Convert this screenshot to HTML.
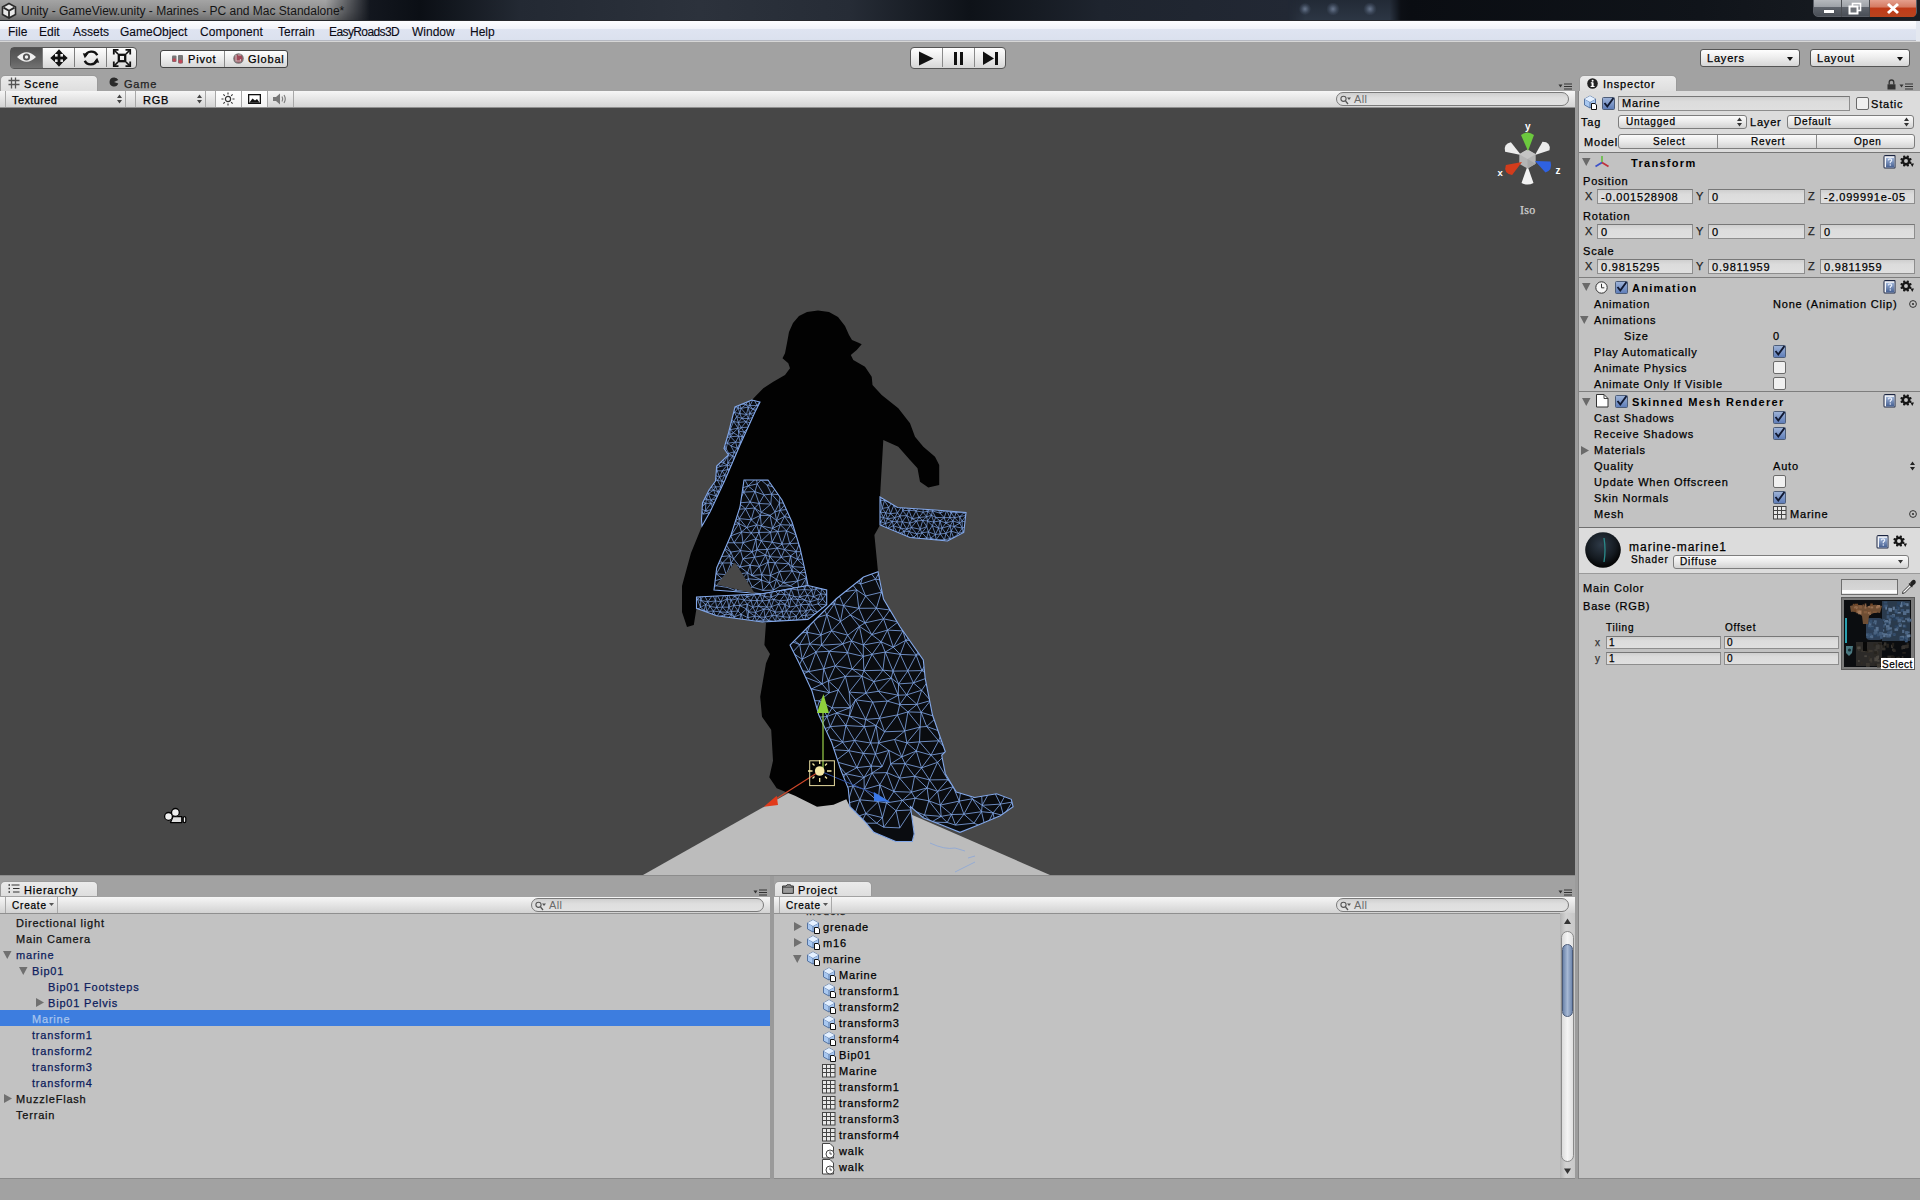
<!DOCTYPE html><html><head><meta charset="utf-8"><style>
html,body{margin:0;padding:0;width:1920px;height:1200px;overflow:hidden;background:#a2a2a2;}
body{position:relative;font-family:"Liberation Sans",sans-serif;}
.t{position:absolute;white-space:pre;line-height:16px;font-family:"Liberation Sans",sans-serif;-webkit-text-stroke:0.25px currentColor;}
svg{overflow:visible}
</style></head><body><div style="position:absolute;left:0px;top:0px;width:1920px;height:21px;background:linear-gradient(90deg,#141820 0px,#141820 360px,#0b0f15 420px,#232933 520px,#2c323c 700px,#262c36 850px,#0e1218 970px,#1e242e 1100px,#222834 1290px,#0a0d12 1410px,#10141a 1700px,#1a1e24 1920px)"></div>
<div style="position:absolute;left:0px;top:0px;width:370px;height:21px;background:linear-gradient(180deg,#a4a4a4 0%,#8e8e8e 55%,#6a6a6a 100%);-webkit-mask-image:linear-gradient(90deg,#000 0%,#000 88%,transparent 100%)"></div>
<div style="position:absolute;left:0px;top:20px;width:1920px;height:2px;background:#26282c"></div>
<div style="position:absolute;left:1288px;top:0px;width:113px;height:20px;background:linear-gradient(180deg,#222a36,#2c3644);-webkit-mask-image:linear-gradient(90deg,transparent 0%,#000 15%,#000 90%,transparent 100%)"></div>
<div style="position:absolute;left:1299px;top:3px;width:12px;height:12px;background:radial-gradient(circle,rgba(120,135,160,.8) 0%,rgba(90,105,130,.35) 45%,transparent 72%)"></div>
<div style="position:absolute;left:1326px;top:3px;width:14px;height:12px;background:radial-gradient(circle,rgba(120,135,160,.8) 0%,rgba(90,105,130,.35) 45%,transparent 72%)"></div>
<div style="position:absolute;left:1363px;top:3px;width:14px;height:12px;background:radial-gradient(circle,rgba(120,135,160,.8) 0%,rgba(90,105,130,.35) 45%,transparent 72%)"></div>
<svg style="position:absolute;left:1px;top:2px;" width="16" height="17" viewBox="0 0 16 17"><path d="M8 1.5 L14.5 5 L14.5 12.5 L8 16 L1.5 12.5 L1.5 5 Z" fill="#e8e8e8" stroke="#2a2a2a" stroke-width="1.6"/><path d="M8 8.8 L8 15 M8 8.8 L2.5 5.6 M8 8.8 L13.5 5.6" stroke="#2a2a2a" stroke-width="1.8"/></svg>
<div class="t" style="left:21px;top:3px;font-size:12px;color:#141414;font-weight:400;letter-spacing:0px;-webkit-text-stroke:0">Unity - GameView.unity - Marines - PC and Mac Standalone*</div>
<div style="position:absolute;left:1813px;top:-2px;width:104px;height:19px;border:1px solid #5a5e66;border-radius:0 0 5px 5px;overflow:hidden;box-sizing:border-box;background:linear-gradient(180deg,#b9bcc0 0%,#9ea2a8 45%,#5e636b 50%,#4a4f57 100%)"></div>
<div style="position:absolute;left:1870px;top:-1px;width:46px;height:18px;background:linear-gradient(180deg,#e7a493 0%,#d47a62 45%,#c03a18 50%,#b8441f 100%);border-radius:0 0 4px 0"></div>
<div style="position:absolute;left:1841px;top:0px;width:1px;height:17px;background:#4a4d52"></div>
<div style="position:absolute;left:1869px;top:0px;width:1px;height:17px;background:#4a4d52"></div>
<div style="position:absolute;left:1824px;top:10px;width:10px;height:3px;background:#fff;box-shadow:0 0 1px #333"></div>
<svg style="position:absolute;left:1848px;top:2px;" width="14" height="13" viewBox="0 0 14 13"><rect x="4.5" y="1.5" width="8" height="7" fill="none" stroke="#fff" stroke-width="1.6"/><rect x="1.5" y="4.5" width="8" height="7" fill="#70747a" stroke="#fff" stroke-width="2"/></svg>
<svg style="position:absolute;left:1886px;top:3px;" width="14" height="11" viewBox="0 0 14 11"><path d="M2 1 L12 10 M12 1 L2 10" stroke="#fff" stroke-width="3"/></svg>
<div style="position:absolute;left:0px;top:21px;width:1920px;height:19px;background:linear-gradient(180deg,#fdfdff 0%,#f1f3f9 40%,#dfe4f1 45%,#dbe1ee 100%)"></div>
<div style="position:absolute;left:0px;top:40px;width:1920px;height:1px;background:#b6b9c2"></div>
<div style="position:absolute;left:0px;top:41px;width:1920px;height:1px;background:#d6d6d6"></div>
<div style="position:absolute;left:1916px;top:21px;width:4px;height:20px;background:#e4e8f0"></div>
<div class="t" style="left:8px;top:24px;font-size:12px;color:#0a0a14;font-weight:400;letter-spacing:0px;-webkit-text-stroke:0.1px">File</div>
<div class="t" style="left:39px;top:24px;font-size:12px;color:#0a0a14;font-weight:400;letter-spacing:0px;-webkit-text-stroke:0.1px">Edit</div>
<div class="t" style="left:73px;top:24px;font-size:12px;color:#0a0a14;font-weight:400;letter-spacing:0px;-webkit-text-stroke:0.1px">Assets</div>
<div class="t" style="left:120px;top:24px;font-size:12px;color:#0a0a14;font-weight:400;letter-spacing:0px;-webkit-text-stroke:0.1px">GameObject</div>
<div class="t" style="left:200px;top:24px;font-size:12px;color:#0a0a14;font-weight:400;letter-spacing:0.1px;-webkit-text-stroke:0.1px">Component</div>
<div class="t" style="left:278px;top:24px;font-size:12px;color:#0a0a14;font-weight:400;letter-spacing:0px;-webkit-text-stroke:0.1px">Terrain</div>
<div class="t" style="left:329px;top:24px;font-size:12px;color:#0a0a14;font-weight:400;letter-spacing:-0.6px;-webkit-text-stroke:0.1px">EasyRoads3D</div>
<div class="t" style="left:412px;top:24px;font-size:12px;color:#0a0a14;font-weight:400;letter-spacing:0px;-webkit-text-stroke:0.1px">Window</div>
<div class="t" style="left:470px;top:24px;font-size:12px;color:#0a0a14;font-weight:400;letter-spacing:0px;-webkit-text-stroke:0.1px">Help</div>
<div style="position:absolute;left:0px;top:42px;width:1920px;height:33px;background:#a2a2a2"></div>
<div style="position:absolute;left:10px;top:47px;width:127px;height:22px;box-sizing:border-box;border:1px solid #555;border-radius:4px;overflow:hidden;background:linear-gradient(180deg,#fefefe 0%,#ececec 50%,#d6d6d6 100%);"></div>
<div style="position:absolute;left:11px;top:48px;width:32px;height:20px;background:linear-gradient(180deg,#4f4f4f 0%,#606060 60%,#727272 100%)"></div>
<div style="position:absolute;left:42px;top:48px;width:1px;height:19px;background:#7e7e7e"></div>
<div style="position:absolute;left:74px;top:48px;width:1px;height:19px;background:#7e7e7e"></div>
<div style="position:absolute;left:106px;top:48px;width:1px;height:19px;background:#7e7e7e"></div>
<svg style="position:absolute;left:16px;top:50px;" width="21" height="14" viewBox="0 0 21 14"><path d="M1 7 Q10.5 -2.5 20 7 Q10.5 16.5 1 7 Z" fill="#efefef"/><circle cx="10.5" cy="7" r="3.6" fill="#555"/><circle cx="10.5" cy="7" r="1.7" fill="#efefef"/></svg>
<svg style="position:absolute;left:50px;top:49px;" width="18" height="18" viewBox="0 0 18 18"><path d="M9 0.3 L13.2 5 L4.8 5 Z M9 17.7 L13.2 13 L4.8 13 Z M0.3 9 L5 4.8 L5 13.2 Z M17.7 9 L13 4.8 L13 13.2 Z" fill="#111"/><rect x="7.6" y="4" width="2.8" height="10" fill="#111"/><rect x="4" y="7.6" width="10" height="2.8" fill="#111"/></svg>
<svg style="position:absolute;left:82px;top:49px;" width="18" height="18" viewBox="0 0 18 18"><path d="M3.3 6.8 A6.3 5.8 0 0 1 15.2 6.2" fill="none" stroke="#111" stroke-width="2.4"/><path d="M14.7 11.2 A6.3 5.8 0 0 1 2.8 11.8" fill="none" stroke="#111" stroke-width="2.4"/><path d="M0.8 4.2 L6.2 4.8 L2.8 9.2 Z" fill="#111"/><path d="M17.2 13.8 L11.8 13.2 L15.2 8.8 Z" fill="#111"/></svg>
<svg style="position:absolute;left:113px;top:49px;" width="18" height="18" viewBox="0 0 18 18"><rect x="5.8" y="5.8" width="6.4" height="6.4" fill="none" stroke="#111" stroke-width="2.3"/><path d="M1.5 1.5 L5 5 M16.5 1.5 L13 5 M1.5 16.5 L5 13 M16.5 16.5 L13 13" stroke="#111" stroke-width="1.7"/><path d="M0.8 5.5 V0.8 H5.5 M12.5 0.8 H17.2 V5.5 M0.8 12.5 V17.2 H5.5 M12.5 17.2 H17.2 V12.5" fill="none" stroke="#111" stroke-width="1.8"/></svg>
<div style="position:absolute;left:160px;top:50px;width:128px;height:18px;box-sizing:border-box;border:1px solid #444;border-radius:3px;background:linear-gradient(180deg,#fefefe 0%,#ececec 50%,#d6d6d6 100%);"></div>
<div style="position:absolute;left:224px;top:51px;width:1px;height:16px;background:#8a8a8a"></div>
<svg style="position:absolute;left:172px;top:55px;" width="12" height="9" viewBox="0 0 12 9"><rect x="0" y="0.5" width="4.5" height="6.5" rx="1" fill="#777"/><circle cx="2.3" cy="5" r="1.8" fill="#c04858"/><rect x="6" y="0" width="5" height="8.5" rx="1" fill="#777"/><circle cx="8.5" cy="6.5" r="2" fill="#c04858"/></svg>
<div class="t" style="left:188px;top:51px;font-size:11px;color:#000;font-weight:400;letter-spacing:0.8px;">Pivot</div>
<svg style="position:absolute;left:233px;top:53px;" width="12" height="12" viewBox="0 0 12 12"><circle cx="5.5" cy="5.5" r="5.3" fill="#7a7a7a"/><circle cx="5.5" cy="5.5" r="4" fill="#a04858"/><path d="M3 2 V8 H7.5 V6 M5 2 H8" stroke="#c8b8b8" stroke-width="1.2" fill="none"/></svg>
<div class="t" style="left:248px;top:51px;font-size:11px;color:#000;font-weight:400;letter-spacing:0.8px;">Global</div>
<div style="position:absolute;left:910px;top:47px;width:96px;height:22px;box-sizing:border-box;border:1px solid #555;border-radius:4px;background:linear-gradient(180deg,#fefefe 0%,#ececec 50%,#d6d6d6 100%);"></div>
<div style="position:absolute;left:942px;top:48px;width:1px;height:19px;background:#8a8a8a"></div>
<div style="position:absolute;left:974px;top:48px;width:1px;height:19px;background:#8a8a8a"></div>
<svg style="position:absolute;left:918px;top:51px;" width="17" height="15" viewBox="0 0 17 15"><path d="M1 0.5 L15.5 7.5 L1 14.5 Z" fill="#111"/></svg>
<svg style="position:absolute;left:951px;top:50px;" width="14" height="16" viewBox="0 0 14 16"><rect x="3" y="2" width="3" height="13" fill="#111"/><rect x="9" y="2" width="3" height="13" fill="#111"/></svg>
<svg style="position:absolute;left:981px;top:50px;" width="18" height="16" viewBox="0 0 18 16"><path d="M2 1.5 L13 8.5 L2 15 Z" fill="#111"/><rect x="14" y="2" width="3" height="13" fill="#111"/></svg>
<div style="position:absolute;left:1700px;top:49px;width:100px;height:18px;box-sizing:border-box;border:1px solid #555;border-radius:3px;background:linear-gradient(180deg,#fefefe 0%,#ececec 50%,#d6d6d6 100%);"></div>
<div class="t" style="left:1707px;top:50px;font-size:11px;color:#000;font-weight:400;letter-spacing:0.8px;">Layers</div>
<svg style="position:absolute;left:1787px;top:57px;" width="7" height="5" viewBox="0 0 7 5"><path d="M0 0 L6 0 L3 4 Z" fill="#111"/></svg>
<div style="position:absolute;left:1810px;top:49px;width:100px;height:18px;box-sizing:border-box;border:1px solid #555;border-radius:3px;background:linear-gradient(180deg,#fefefe 0%,#ececec 50%,#d6d6d6 100%);"></div>
<div class="t" style="left:1817px;top:50px;font-size:11px;color:#000;font-weight:400;letter-spacing:0.8px;">Layout</div>
<svg style="position:absolute;left:1897px;top:57px;" width="7" height="5" viewBox="0 0 7 5"><path d="M0 0 L6 0 L3 4 Z" fill="#111"/></svg>
<div style="position:absolute;left:0px;top:75px;width:98px;height:16px;box-sizing:border-box;border:1px solid #9a9a9a;border-bottom:none;border-radius:5px 5px 0 0;background:linear-gradient(180deg,#ebebeb 0%,#dedede 100%);"></div>
<svg style="position:absolute;left:8px;top:77px;" width="12" height="12" viewBox="0 0 12 12"><path d="M3.5 0.5 V11.5 M7.5 0.5 V11.5 M0.5 3.5 H11.5 M0.5 7.5 H11.5" stroke="#555" stroke-width="1.3"/></svg>
<div class="t" style="left:24px;top:76px;font-size:11px;color:#000;font-weight:400;letter-spacing:0.8px;">Scene</div>
<svg style="position:absolute;left:109px;top:77px;" width="10" height="10" viewBox="0 0 10 10"><path d="M5 0.5 A4.5 4.5 0 1 0 9.3 6.5 L5 5 L9.3 3 A4.5 4.5 0 0 0 5 0.5 Z" fill="#2a2a2a"/></svg>
<div class="t" style="left:124px;top:76px;font-size:11px;color:#222;font-weight:400;letter-spacing:0.8px;">Game</div>
<svg style="position:absolute;left:1558px;top:83px;" width="15" height="7" viewBox="0 0 15 7"><path d="M0.5 1.5 L4.5 1.5 L2.5 4.5 Z" fill="#333"/><path d="M6 1 H14 M6 3.5 H14 M6 6 H14" stroke="#333" stroke-width="1.2"/></svg>
<div style="position:absolute;left:0px;top:91px;width:1575px;height:17px;background:linear-gradient(180deg,#f6f6f6 0%,#e4e4e4 50%,#d2d2d2 100%);"></div>
<div style="position:absolute;left:0px;top:107px;width:1575px;height:1px;background:#8f8f8f"></div>
<div style="position:absolute;left:5px;top:91px;width:1px;height:16px;background:#a8a8a8"></div>
<div style="position:absolute;left:125px;top:91px;width:1px;height:16px;background:#a8a8a8"></div>
<div style="position:absolute;left:135px;top:91px;width:1px;height:16px;background:#a8a8a8"></div>
<div style="position:absolute;left:205px;top:91px;width:1px;height:16px;background:#a8a8a8"></div>
<div style="position:absolute;left:215px;top:91px;width:1px;height:16px;background:#a8a8a8"></div>
<div style="position:absolute;left:241px;top:91px;width:1px;height:16px;background:#a8a8a8"></div>
<div style="position:absolute;left:267px;top:91px;width:1px;height:16px;background:#a8a8a8"></div>
<div style="position:absolute;left:293px;top:91px;width:1px;height:16px;background:#a8a8a8"></div>
<div class="t" style="left:12px;top:92px;font-size:11px;color:#000;font-weight:400;letter-spacing:0.4px;">Textured</div>
<svg style="position:absolute;left:117px;top:94px;" width="6" height="10" viewBox="0 0 6 10"><path d="M0 4 L5 4 L2.5 0.5 Z M0 6 L5 6 L2.5 9.5 Z" fill="#444"/></svg>
<div class="t" style="left:143px;top:92px;font-size:11px;color:#000;font-weight:400;letter-spacing:0.8px;">RGB</div>
<svg style="position:absolute;left:197px;top:94px;" width="6" height="10" viewBox="0 0 6 10"><path d="M0 4 L5 4 L2.5 0.5 Z M0 6 L5 6 L2.5 9.5 Z" fill="#444"/></svg>
<div style="position:absolute;left:216px;top:91px;width:25px;height:16px;background:linear-gradient(180deg,#ffffff,#f2f2f2)"></div>
<div style="position:absolute;left:242px;top:91px;width:25px;height:16px;background:linear-gradient(180deg,#ffffff,#f2f2f2)"></div>
<svg style="position:absolute;left:221px;top:92px;" width="14" height="14" viewBox="0 0 14 14"><circle cx="7" cy="7" r="2.6" fill="none" stroke="#333" stroke-width="1.2"/><path d="M7 0.5 V2.5 M7 11.5 V13.5 M0.5 7 H2.5 M11.5 7 H13.5 M2.4 2.4 L3.8 3.8 M10.2 10.2 L11.6 11.6 M2.4 11.6 L3.8 10.2 M10.2 3.8 L11.6 2.4" stroke="#333" stroke-width="1.1"/></svg>
<svg style="position:absolute;left:248px;top:94px;" width="13" height="11" viewBox="0 0 13 11"><rect x="0" y="0" width="13" height="10" fill="#111"/><rect x="1.3" y="1.3" width="10.4" height="7.4" fill="#fff"/><path d="M1.3 8.7 L4.5 4.5 L7 6.5 L9 5 L11.7 8.7 Z" fill="#111"/></svg>
<svg style="position:absolute;left:272px;top:92px;" width="16" height="14" viewBox="0 0 16 14"><path d="M1 5 H4 L8 1.5 V12.5 L4 9 H1 Z" fill="#777"/><path d="M10 4.5 Q11.5 7 10 9.5 M12 3 Q14.5 7 12 11" fill="none" stroke="#777" stroke-width="1.1"/></svg>
<div style="position:absolute;left:1336px;top:92px;width:233px;height:14px;box-sizing:border-box;border:1px solid #7a7a7a;border-radius:7px;background:linear-gradient(180deg,#cfcfcf 0%,#dedede 40%,#e2e2e2 100%)"></div>
<svg style="position:absolute;left:1340px;top:95px;" width="12" height="10" viewBox="0 0 12 10"><circle cx="3.5" cy="3.8" r="2.6" fill="none" stroke="#555" stroke-width="1.1"/><path d="M5.5 6 L8 9" stroke="#555" stroke-width="1.3"/><path d="M7 2.5 H11 L9 5 Z" fill="#555"/></svg>
<div class="t" style="left:1354px;top:91px;font-size:11px;color:#6a6a6a;font-weight:400;letter-spacing:0.3px;font-size:11px;-webkit-text-stroke:0">All</div>
<div style="position:absolute;left:0px;top:108px;width:1575px;height:768px;background:#474747"></div>
<div style="position:absolute;left:0px;top:875px;width:1575px;height:1px;background:#8c8c8c"></div>
<div style="position:absolute;left:1575px;top:91px;width:4px;height:1088px;background:#9c9c9c"></div>
<svg style="position:absolute;left:0px;top:108px;" width="1575" height="768" viewBox="0 0 1575 768"><polygon points="643,767 820.5,667 1050,767" fill="#bcbcbc"/><path d="M930 735 Q945 742 955 740 L965 743 M968 750 L975 748 M955 764 L975 754" stroke="#8aa6d8" stroke-width="0.8" fill="none"/><polygon points="807,204.0 818,202.5 829,204.0 838,209.0 845,218.0 849,227.0 852,232.0 858,234.5 861.7,236.2 856.7,242.0 850.8,247.0 853.3,252.0 865,258.7 871.7,268.7 872.5,277.0 881.7,287.0 898.3,300.3 910,315.3 915,328.7 923.3,338.7 935,348.7 939.2,357.0 939.2,377.0 928.3,379.5 920,373.7 917.5,360.3 910,352.0 898.3,338.7 883.3,332.0 880.8,375.0 880,389.0 897.5,399.5 935,402.0 966,404.5 963.75,424.5 947.5,433.0 910,429.5 880,417.0 874.4,427.0 878,463.7 883.5,491.0 900,518.7 923.3,552.0 925.2,570.3 932.5,607.0 945.3,643.7 941.7,647.3 945.3,665.7 956.3,684.0 974.6,689.5 996.6,685.8 1011.3,691.3 1013.1,698.7 1000.3,707.8 978.3,717.0 960,724.3 941.7,717.0 923.3,709.7 910.5,698.7 914.2,726.0 912.3,733.5 895.8,733.5 873.8,724.3 864.7,713.3 850,698.7 846.3,691.3 833.5,696.8 817,698.7 795,687.7 776.7,680.3 769.3,669.3 773,652.8 771.2,621.7 762,608.8 760.2,588.7 766,555.3 770,546.0 764.4,537.0 766,515.0 762.5,514.0 716.7,507.7 696.5,500.3 693.8,517.0 687,519.0 682,504.0 682,478.0 691,445.0 702,418.0 701.5,412.0 702.5,395.0 709,382.0 715.5,373.0 716.7,358.0 728.5,347.0 724,340.5 728.5,325.0 735,299.0 752,292.0 755,288.7 763.3,280.3 773.3,273.7 785,267.0 790,260.3 788.3,255.3 782.5,250.3 785,245.3 787,235.0 789,224.0 793,215.0 799,208.0" fill="#020202"/><defs><clipPath id="cp0"><polygon points="752,292.0 735,299.0 728.5,325.0 724,340.5 728.5,347.0 716.7,358.0 715.5,373.0 709,382.0 702.5,395.0 701.5,412.0 702,418.0 710,404.0 725,372.0 740,337.0 755,304.0 760,294.0"/></clipPath><clipPath id="cp1"><polygon points="744,372.0 768,372.0 782,392.0 792,414.0 800,440.0 806,467.0 808,477.5 762.5,485.7 714,482.0 716.7,460.0 731,427.0 740,399.0"/></clipPath><clipPath id="cp2"><polygon points="696.5,489.0 762.5,485.7 808,477.5 826.7,482.0 826.7,496.7 808,511.4 762.5,514.0 716.7,507.7 696.5,500.3"/></clipPath><clipPath id="cp3"><polygon points="880,389.0 897.5,399.5 935,402.0 966,404.5 963.75,424.5 947.5,433.0 910,429.5 880,417.0"/></clipPath><clipPath id="cp4"><polygon points="799,528.0 836,491.0 863.5,469.0 878,463.7 883.5,491.0 900,518.7 923.3,552.0 925.2,570.3 932.5,607.0 945.3,643.7 941.7,647.3 945.3,665.7 956.3,684.0 974.6,689.5 996.6,685.8 1011.3,691.3 1013.1,698.7 1000.3,707.8 978.3,717.0 960,724.3 941.7,717.0 923.3,709.7 910.5,698.7 914.2,726.0 912.3,733.5 895.8,733.5 873.8,724.3 864.7,713.3 850,698.7 848.2,680.3 840.8,662.0 831.7,634.5 818.8,607.0 812,583.0 799,555.0 790,537.0"/></clipPath></defs><polygon points="752,292.0 735,299.0 728.5,325.0 724,340.5 728.5,347.0 716.7,358.0 715.5,373.0 709,382.0 702.5,395.0 701.5,412.0 702,418.0 710,404.0 725,372.0 740,337.0 755,304.0 760,294.0" fill="#0a0c10"/><path clip-path="url(#cp0)" d="M695.4 285.3L701.2 287.4M695.4 285.3L699.3 289.8M699.3 289.8L703.0 291.2M699.3 289.8L696.1 295.6M699.3 289.8L699.9 296.7M696.1 295.6L699.9 296.7M696.1 295.6L697.2 300.9M697.2 300.9L705.2 301.1M697.2 300.9L694.4 305.4M697.2 300.9L702.8 305.0M694.4 305.4L702.8 305.0M697.2 309.0L704.9 310.8M697.2 309.0L695.7 316.4M697.2 309.0L701.8 315.1M695.7 316.4L701.8 315.1M695.7 316.4L697.4 319.0M697.4 319.0L696.4 326.4M697.4 319.0L701.4 325.4M696.4 326.4L701.4 325.4M696.4 326.4L699.0 329.2M699.0 329.2L702.7 330.3M699.0 329.2L697.7 332.8M699.0 329.2L702.0 336.1M697.7 332.8L702.0 336.1M697.7 332.8L700.0 338.4M700.0 338.4L705.4 338.4M700.0 338.4L694.7 342.6M700.0 338.4L701.1 344.5M694.7 342.6L701.1 344.5M694.7 342.6L698.1 349.8M698.1 349.8L702.6 348.6M698.1 349.8L694.9 353.8M698.1 349.8L700.3 352.1M694.9 353.8L699.2 357.8M699.2 357.8L702.7 359.2M699.2 357.8L696.2 361.5M699.2 357.8L700.2 362.2M696.2 361.5L697.2 366.8M697.2 366.8L703.9 369.2M697.2 366.8L696.6 372.4M697.2 366.8L700.0 372.5M696.6 372.4L700.0 372.5M696.6 372.4L698.1 377.7M698.1 377.7L704.4 378.8M698.1 377.7L695.8 381.5M698.1 377.7L702.6 383.5M695.8 381.5L702.6 383.5M695.8 381.5L699.8 387.7M699.8 387.7L703.5 386.7M699.8 387.7L695.1 392.0M695.1 392.0L701.0 393.1M695.1 392.0L698.8 397.9M698.8 397.9L705.9 395.3M698.8 397.9L696.8 400.6M696.8 400.6L700.4 400.4M696.8 400.6L700.4 404.8M700.4 404.8L703.3 406.1M701.2 287.4L707.3 285.7M701.2 287.4L703.0 291.2M701.2 287.4L699.3 289.8M703.0 291.2L708.0 291.0M703.0 291.2L699.9 296.7M703.0 291.2L706.5 296.3M699.9 296.7L706.5 296.3M699.9 296.7L705.2 301.1M699.9 296.7L697.2 300.9M705.2 301.1L711.3 301.5M705.2 301.1L702.8 305.0M705.2 301.1L707.1 306.1M702.8 305.0L707.1 306.1M702.8 305.0L704.9 310.8M702.8 305.0L697.2 309.0M704.9 310.8L710.4 308.9M704.9 310.8L701.8 315.1M704.9 310.8L708.4 316.2M701.8 315.1L708.4 316.2M701.8 315.1L705.4 321.6M701.8 315.1L697.4 319.0M705.4 321.6L701.4 325.4M705.4 321.6L706.6 324.4M701.4 325.4L706.6 324.4M701.4 325.4L702.7 330.3M701.4 325.4L699.0 329.2M702.7 330.3L708.4 330.0M702.7 330.3L702.0 336.1M702.7 330.3L705.5 332.8M702.0 336.1L705.5 332.8M702.0 336.1L705.4 338.4M702.0 336.1L700.0 338.4M705.4 338.4L708.7 337.9M705.4 338.4L701.1 344.5M705.4 338.4L706.4 342.3M701.1 344.5L706.4 342.3M701.1 344.5L702.6 348.6M701.1 344.5L698.1 349.8M702.6 348.6L708.0 347.5M702.6 348.6L700.3 352.1M702.6 348.6L705.6 353.0M700.3 352.1L705.6 353.0M700.3 352.1L702.7 359.2M700.3 352.1L699.2 357.8M702.7 359.2L708.1 359.6M702.7 359.2L700.2 362.2M702.7 359.2L707.4 361.8M700.2 362.2L707.4 361.8M700.2 362.2L703.9 369.2M700.2 362.2L697.2 366.8M703.9 369.2L708.9 367.3M703.9 369.2L700.0 372.5M703.9 369.2L706.5 371.3M700.0 372.5L706.5 371.3M700.0 372.5L704.4 378.8M700.0 372.5L698.1 377.7M704.4 378.8L711.0 379.2M704.4 378.8L702.6 383.5M704.4 378.8L706.9 382.1M702.6 383.5L706.9 382.1M702.6 383.5L703.5 386.7M702.6 383.5L699.8 387.7M703.5 386.7L708.3 385.6M703.5 386.7L701.0 393.1M703.5 386.7L706.4 390.9M701.0 393.1L706.4 390.9M701.0 393.1L705.9 395.3M701.0 393.1L698.8 397.9M705.9 395.3L710.9 395.4M705.9 395.3L700.4 400.4M705.9 395.3L705.3 402.9M700.4 400.4L705.3 402.9M700.4 400.4L703.3 406.1M700.4 400.4L700.4 404.8M703.3 406.1L709.8 404.9M707.3 285.7L712.7 284.8M707.3 285.7L708.0 291.0M707.3 285.7L703.0 291.2M708.0 291.0L715.3 293.0M708.0 291.0L706.5 296.3M708.0 291.0L713.8 296.8M706.5 296.3L713.8 296.8M706.5 296.3L711.3 301.5M706.5 296.3L705.2 301.1M711.3 301.5L714.4 300.4M711.3 301.5L707.1 306.1M711.3 301.5L711.3 306.6M707.1 306.1L711.3 306.6M707.1 306.1L704.9 310.8M710.4 308.9L715.4 311.4M710.4 308.9L708.4 316.2M710.4 308.9L711.9 314.2M708.4 316.2L711.9 314.2M708.4 316.2L711.1 321.0M708.4 316.2L705.4 321.6M711.1 321.0L716.3 321.7M711.1 321.0L706.6 324.4M711.1 321.0L713.7 325.9M706.6 324.4L713.7 325.9M706.6 324.4L708.4 330.0M706.6 324.4L702.7 330.3M708.4 330.0L716.4 330.4M708.4 330.0L705.5 332.8M708.4 330.0L711.5 334.4M705.5 332.8L711.5 334.4M705.5 332.8L708.7 337.9M705.5 332.8L705.4 338.4M708.7 337.9L714.7 337.5M708.7 337.9L706.4 342.3M708.7 337.9L710.8 343.1M706.4 342.3L710.8 343.1M706.4 342.3L708.0 347.5M706.4 342.3L702.6 348.6M708.0 347.5L714.4 349.4M708.0 347.5L705.6 353.0M708.0 347.5L714.1 353.3M705.6 353.0L714.1 353.3M705.6 353.0L702.7 359.2M708.1 359.6L716.8 360.0M708.1 359.6L707.4 361.8M708.1 359.6L714.1 362.6M707.4 361.8L714.1 362.6M707.4 361.8L708.9 367.3M707.4 361.8L703.9 369.2M708.9 367.3L706.5 371.3M708.9 367.3L711.4 371.6M706.5 371.3L711.4 371.6M706.5 371.3L711.0 379.2M706.5 371.3L704.4 378.8M711.0 379.2L715.7 378.8M711.0 379.2L706.9 382.1M711.0 379.2L713.7 382.1M706.9 382.1L713.7 382.1M706.9 382.1L708.3 385.6M706.9 382.1L703.5 386.7M708.3 385.6L715.8 388.0M708.3 385.6L706.4 390.9M708.3 385.6L711.0 392.3M706.4 390.9L711.0 392.3M706.4 390.9L710.9 395.4M706.4 390.9L705.9 395.3M710.9 395.4L716.7 397.5M710.9 395.4L705.3 402.9M710.9 395.4L713.4 401.3M705.3 402.9L713.4 401.3M705.3 402.9L709.8 404.9M705.3 402.9L703.3 406.1M709.8 404.9L714.1 407.1M712.7 284.8L717.4 287.6M712.7 284.8L715.3 293.0M712.7 284.8L708.0 291.0M715.3 293.0L722.4 290.9M715.3 293.0L713.8 296.8M715.3 293.0L717.7 297.6M713.8 296.8L717.7 297.6M713.8 296.8L714.4 300.4M713.8 296.8L711.3 301.5M714.4 300.4L721.5 299.7M714.4 300.4L711.3 306.6M714.4 300.4L716.7 304.4M711.3 306.6L716.7 304.4M711.3 306.6L715.4 311.4M711.3 306.6L710.4 308.9M715.4 311.4L722.2 311.5M715.4 311.4L711.9 314.2M715.4 311.4L716.8 316.4M711.9 314.2L716.8 316.4M711.9 314.2L716.3 321.7M716.3 321.7L722.4 320.5M716.3 321.7L713.7 325.9M716.3 321.7L717.5 325.0M713.7 325.9L717.5 325.0M713.7 325.9L716.4 330.4M713.7 325.9L708.4 330.0M716.4 330.4L719.5 327.9M716.4 330.4L711.5 334.4M716.4 330.4L719.7 334.9M711.5 334.4L719.7 334.9M711.5 334.4L714.7 337.5M711.5 334.4L708.7 337.9M714.7 337.5L710.8 343.1M714.7 337.5L717.8 345.2M710.8 343.1L717.8 345.2M710.8 343.1L714.4 349.4M710.8 343.1L708.0 347.5M714.4 349.4L721.9 347.7M714.4 349.4L714.1 353.3M714.4 349.4L717.1 352.8M714.1 353.3L717.1 352.8M714.1 353.3L716.8 360.0M714.1 353.3L708.1 359.6M716.8 360.0L719.8 358.6M716.8 360.0L714.1 362.6M716.8 360.0L717.2 362.8M714.1 362.6L717.2 362.8M714.1 362.6L714.3 366.9M714.1 362.6L708.9 367.3M714.3 366.9L719.5 369.3M714.3 366.9L711.4 371.6M714.3 366.9L717.5 372.5M711.4 371.6L717.5 372.5M711.4 371.6L715.7 378.8M711.4 371.6L711.0 379.2M715.7 378.8L721.0 378.8M715.7 378.8L713.7 382.1M715.7 378.8L717.7 383.7M713.7 382.1L717.7 383.7M713.7 382.1L715.8 388.0M713.7 382.1L708.3 385.6M715.8 388.0L720.8 387.1M715.8 388.0L711.0 392.3M715.8 388.0L718.1 390.1M711.0 392.3L718.1 390.1M711.0 392.3L716.7 397.5M711.0 392.3L710.9 395.4M716.7 397.5L720.5 395.4M716.7 397.5L713.4 401.3M716.7 397.5L716.3 402.4M713.4 401.3L716.3 402.4M713.4 401.3L714.1 407.1M713.4 401.3L709.8 404.9M714.1 407.1L719.6 406.0M717.4 287.6L724.3 286.7M717.4 287.6L722.4 290.9M717.4 287.6L715.3 293.0M722.4 290.9L725.6 291.3M722.4 290.9L717.7 297.6M722.4 290.9L723.7 297.1M717.7 297.6L723.7 297.1M717.7 297.6L721.5 299.7M717.7 297.6L714.4 300.4M721.5 299.7L716.7 304.4M721.5 299.7L722.6 304.9M716.7 304.4L722.6 304.9M716.7 304.4L722.2 311.5M716.7 304.4L715.4 311.4M722.2 311.5L727.2 310.5M722.2 311.5L716.8 316.4M722.2 311.5L723.7 316.1M716.8 316.4L723.7 316.1M716.8 316.4L722.4 320.5M716.8 316.4L716.3 321.7M722.4 320.5L727.7 319.8M722.4 320.5L717.5 325.0M722.4 320.5L723.9 324.8M717.5 325.0L723.9 324.8M717.5 325.0L719.5 327.9M717.5 325.0L716.4 330.4M719.5 327.9L726.3 330.2M719.5 327.9L719.7 334.9M719.5 327.9L723.3 334.5M719.7 334.9L723.3 334.5M719.7 334.9L720.8 340.7M719.7 334.9L714.7 337.5M720.8 340.7L726.2 340.7M720.8 340.7L717.8 345.2M720.8 340.7L724.2 345.2M717.8 345.2L724.2 345.2M717.8 345.2L721.9 347.7M717.8 345.2L714.4 349.4M721.9 347.7L727.8 347.9M721.9 347.7L717.1 352.8M721.9 347.7L723.7 355.1M717.1 352.8L723.7 355.1M717.1 352.8L719.8 358.6M717.1 352.8L716.8 360.0M719.8 358.6L727.4 357.0M717.2 362.8L722.2 362.9M717.2 362.8L719.5 369.3M717.2 362.8L714.3 366.9M719.5 369.3L724.7 366.9M719.5 369.3L717.5 372.5M719.5 369.3L722.0 373.2M717.5 372.5L722.0 373.2M717.5 372.5L721.0 378.8M721.0 378.8L717.7 383.7M721.0 378.8L722.3 383.0M717.7 383.7L722.3 383.0M717.7 383.7L720.8 387.1M717.7 383.7L715.8 388.0M720.8 387.1L726.8 385.7M720.8 387.1L718.1 390.1M720.8 387.1L724.8 393.4M718.1 390.1L724.8 393.4M718.1 390.1L720.5 395.4M718.1 390.1L716.7 397.5M720.5 395.4L725.3 398.1M720.5 395.4L716.3 402.4M720.5 395.4L723.1 401.3M716.3 402.4L723.1 401.3M716.3 402.4L719.6 406.0M716.3 402.4L714.1 407.1M719.6 406.0L728.0 407.3M724.3 286.7L727.8 286.3M724.3 286.7L722.4 290.9M725.6 291.3L731.8 290.7M725.6 291.3L723.7 297.1M725.6 291.3L727.9 295.4M723.7 297.1L727.9 295.4M723.7 297.1L724.9 301.1M723.7 297.1L721.5 299.7M724.9 301.1L732.5 299.2M724.9 301.1L722.6 304.9M724.9 301.1L729.2 305.4M722.6 304.9L729.2 305.4M722.6 304.9L727.2 310.5M722.6 304.9L722.2 311.5M727.2 310.5L730.1 309.8M727.2 310.5L723.7 316.1M723.7 316.1L729.4 315.3M723.7 316.1L727.7 319.8M723.7 316.1L722.4 320.5M727.7 319.8L730.2 321.7M727.7 319.8L723.9 324.8M727.7 319.8L730.0 326.4M723.9 324.8L730.0 326.4M723.9 324.8L726.3 330.2M723.9 324.8L719.5 327.9M726.3 330.2L730.4 328.7M726.3 330.2L723.3 334.5M726.3 330.2L727.4 335.3M723.3 334.5L727.4 335.3M723.3 334.5L726.2 340.7M723.3 334.5L720.8 340.7M726.2 340.7L724.2 345.2M726.2 340.7L728.7 345.4M724.2 345.2L728.7 345.4M724.2 345.2L727.8 347.9M724.2 345.2L721.9 347.7M727.8 347.9L732.9 347.9M727.8 347.9L723.7 355.1M727.8 347.9L727.8 355.0M723.7 355.1L727.4 357.0M723.7 355.1L719.8 358.6M727.4 357.0L732.0 359.0M727.4 357.0L722.2 362.9M727.4 357.0L727.6 361.5M722.2 362.9L727.6 361.5M722.2 362.9L724.7 366.9M722.2 362.9L719.5 369.3M724.7 366.9L732.4 367.6M724.7 366.9L722.0 373.2M724.7 366.9L727.5 374.2M722.0 373.2L727.5 374.2M722.0 373.2L727.2 378.8M722.0 373.2L721.0 378.8M727.2 378.8L732.2 378.5M727.2 378.8L727.5 383.5M722.3 383.0L727.5 383.5M722.3 383.0L726.8 385.7M722.3 383.0L720.8 387.1M726.8 385.7L730.2 388.3M726.8 385.7L724.8 393.4M726.8 385.7L728.8 391.2M724.8 393.4L728.8 391.2M724.8 393.4L725.3 398.1M724.8 393.4L720.5 395.4M725.3 398.1L731.9 398.1M725.3 398.1L723.1 401.3M725.3 398.1L728.2 400.0M723.1 401.3L728.2 400.0M723.1 401.3L728.0 407.3M723.1 401.3L719.6 406.0M728.0 407.3L731.8 405.2M727.8 286.3L733.1 285.3M727.8 286.3L731.8 290.7M727.8 286.3L725.6 291.3M731.8 290.7L735.7 290.2M731.8 290.7L727.9 295.4M731.8 290.7L733.8 295.4M727.9 295.4L733.8 295.4M727.9 295.4L732.5 299.2M727.9 295.4L724.9 301.1M732.5 299.2L738.2 300.1M732.5 299.2L734.5 304.5M729.2 305.4L734.5 304.5M729.2 305.4L730.1 309.8M729.2 305.4L727.2 310.5M730.1 309.8L729.4 315.3M730.1 309.8L733.6 313.5M729.4 315.3L733.6 313.5M729.4 315.3L730.2 321.7M729.4 315.3L727.7 319.8M730.2 321.7L738.1 320.2M730.2 321.7L730.0 326.4M730.2 321.7L733.4 324.7M730.0 326.4L733.4 324.7M730.0 326.4L730.4 328.7M730.0 326.4L726.3 330.2M730.4 328.7L738.8 328.2M730.4 328.7L727.4 335.3M730.4 328.7L735.6 334.1M727.4 335.3L735.6 334.1M727.4 335.3L730.9 337.8M727.4 335.3L726.2 340.7M730.9 337.8L737.2 340.3M730.9 337.8L734.1 343.9M728.7 345.4L734.1 343.9M728.7 345.4L732.9 347.9M728.7 345.4L727.8 347.9M732.9 347.9L737.9 350.4M732.9 347.9L727.8 355.0M732.9 347.9L733.9 354.7M727.8 355.0L733.9 354.7M727.8 355.0L732.0 359.0M727.8 355.0L727.4 357.0M732.0 359.0L738.0 358.8M732.0 359.0L727.6 361.5M727.6 361.5L734.2 362.5M727.6 361.5L732.4 367.6M727.6 361.5L724.7 366.9M732.4 367.6L735.7 366.5M732.4 367.6L727.5 374.2M732.4 367.6L733.0 373.5M727.5 374.2L733.0 373.5M727.5 374.2L732.2 378.5M727.5 374.2L727.2 378.8M732.2 378.5L727.5 383.5M732.2 378.5L733.0 383.4M727.5 383.5L733.0 383.4M727.5 383.5L730.2 388.3M727.5 383.5L726.8 385.7M730.2 388.3L738.6 387.6M730.2 388.3L728.8 391.2M730.2 388.3L733.7 390.9M728.8 391.2L733.7 390.9M728.8 391.2L731.9 398.1M728.8 391.2L725.3 398.1M731.9 398.1L728.2 400.0M731.9 398.1L733.3 401.1M728.2 400.0L733.3 401.1M728.2 400.0L728.0 407.3M731.8 405.2L736.4 407.8M733.1 285.3L741.7 286.7M733.1 285.3L735.7 290.2M733.1 285.3L731.8 290.7M735.7 290.2L741.9 292.9M735.7 290.2L733.8 295.4M735.7 290.2L739.3 295.6M733.8 295.4L739.3 295.6M733.8 295.4L738.2 300.1M733.8 295.4L732.5 299.2M738.2 300.1L741.0 300.4M738.2 300.1L734.5 304.5M738.2 300.1L739.9 305.6M734.5 304.5L739.9 305.6M734.5 304.5L736.7 308.7M734.5 304.5L730.1 309.8M736.7 308.7L741.7 310.4M736.7 308.7L733.6 313.5M736.7 308.7L738.3 314.4M733.6 313.5L738.3 314.4M733.6 313.5L738.1 320.2M733.6 313.5L730.2 321.7M738.1 320.2L741.3 319.6M738.1 320.2L733.4 324.7M738.1 320.2L738.4 323.1M733.4 324.7L738.8 328.2M733.4 324.7L730.4 328.7M738.8 328.2L742.1 328.6M738.8 328.2L735.6 334.1M738.8 328.2L740.3 334.5M735.6 334.1L740.3 334.5M735.6 334.1L737.2 340.3M735.6 334.1L730.9 337.8M737.2 340.3L743.6 339.7M737.2 340.3L734.1 343.9M737.2 340.3L740.8 345.3M734.1 343.9L740.8 345.3M734.1 343.9L737.9 350.4M734.1 343.9L732.9 347.9M737.9 350.4L742.4 348.1M737.9 350.4L733.9 354.7M737.9 350.4L741.7 352.3M733.9 354.7L741.7 352.3M733.9 354.7L738.0 358.8M733.9 354.7L732.0 359.0M738.0 358.8L743.5 358.8M738.0 358.8L734.2 362.5M738.0 358.8L738.4 364.2M734.2 362.5L738.4 364.2M734.2 362.5L735.7 366.5M734.2 362.5L732.4 367.6M735.7 366.5L744.1 368.3M735.7 366.5L733.0 373.5M735.7 366.5L740.8 373.7M733.0 373.5L740.8 373.7M733.0 373.5L736.4 376.2M733.0 373.5L732.2 378.5M736.4 376.2L741.5 377.5M736.4 376.2L733.0 383.4M736.4 376.2L740.0 383.4M733.0 383.4L740.0 383.4M733.0 383.4L738.6 387.6M733.0 383.4L730.2 388.3M738.6 387.6L743.8 388.1M738.6 387.6L733.7 390.9M738.6 387.6L740.3 393.2M733.7 390.9L740.3 393.2M733.7 390.9L736.5 396.4M733.7 390.9L731.9 398.1M736.5 396.4L743.4 397.2M736.5 396.4L733.3 401.1M736.5 396.4L739.0 399.7M733.3 401.1L739.0 399.7M733.3 401.1L736.4 407.8M733.3 401.1L731.8 405.2M736.4 407.8L741.5 405.6M741.7 286.7L744.1 287.7M741.7 286.7L741.9 292.9M741.9 292.9L748.5 291.7M741.9 292.9L739.3 295.6M741.9 292.9L745.9 296.7M739.3 295.6L745.9 296.7M739.3 295.6L741.0 300.4M739.3 295.6L738.2 300.1M741.0 300.4L748.2 299.1M741.0 300.4L739.9 305.6M741.0 300.4L746.5 306.5M739.9 305.6L746.5 306.5M739.9 305.6L741.7 310.4M739.9 305.6L736.7 308.7M741.7 310.4L748.3 310.5M741.7 310.4L738.3 314.4M741.7 310.4L746.1 313.7M738.3 314.4L746.1 313.7M738.3 314.4L741.3 319.6M738.3 314.4L738.1 320.2M741.3 319.6L749.1 319.1M741.3 319.6L738.4 323.1M741.3 319.6L744.0 324.0M738.4 323.1L744.0 324.0M738.4 323.1L742.1 328.6M738.4 323.1L738.8 328.2M742.1 328.6L749.1 328.5M742.1 328.6L740.3 334.5M742.1 328.6L746.3 336.0M740.3 334.5L746.3 336.0M740.3 334.5L743.6 339.7M740.3 334.5L737.2 340.3M743.6 339.7L748.2 338.7M743.6 339.7L740.8 345.3M743.6 339.7L745.4 344.6M740.8 345.3L745.4 344.6M740.8 345.3L742.4 348.1M740.8 345.3L737.9 350.4M742.4 348.1L749.2 349.1M742.4 348.1L741.7 352.3M742.4 348.1L746.0 352.0M741.7 352.3L746.0 352.0M741.7 352.3L743.5 358.8M741.7 352.3L738.0 358.8M743.5 358.8L747.0 357.4M743.5 358.8L738.4 364.2M738.4 364.2L746.4 362.4M738.4 364.2L744.1 368.3M738.4 364.2L735.7 366.5M744.1 368.3L748.5 366.1M744.1 368.3L740.8 373.7M744.1 368.3L744.0 371.8M740.8 373.7L744.0 371.8M740.8 373.7L741.5 377.5M740.8 373.7L736.4 376.2M741.5 377.5L748.9 378.1M741.5 377.5L740.0 383.4M741.5 377.5L746.1 381.5M740.0 383.4L746.1 381.5M740.0 383.4L743.8 388.1M740.0 383.4L738.6 387.6M743.8 388.1L748.3 386.9M743.8 388.1L740.3 393.2M743.8 388.1L745.4 390.4M740.3 393.2L745.4 390.4M740.3 393.2L743.4 397.2M740.3 393.2L736.5 396.4M743.4 397.2L749.6 395.5M743.4 397.2L739.0 399.7M743.4 397.2L747.2 402.9M739.0 399.7L747.2 402.9M739.0 399.7L736.4 407.8M741.5 405.6L746.6 406.0M744.1 287.7L752.1 288.1M744.1 287.7L748.5 291.7M744.1 287.7L741.9 292.9M748.5 291.7L753.6 290.5M748.5 291.7L745.9 296.7M748.5 291.7L750.0 297.6M745.9 296.7L750.0 297.6M745.9 296.7L748.2 299.1M745.9 296.7L741.0 300.4M748.2 299.1L752.7 301.1M748.2 299.1L746.5 306.5M748.2 299.1L749.7 305.7M746.5 306.5L749.7 305.7M746.5 306.5L748.3 310.5M746.5 306.5L741.7 310.4M748.3 310.5L755.3 309.1M748.3 310.5L746.1 313.7M748.3 310.5L752.1 315.2M746.1 313.7L752.1 315.2M746.1 313.7L749.1 319.1M746.1 313.7L741.3 319.6M749.1 319.1L755.1 320.7M749.1 319.1L744.0 324.0M749.1 319.1L750.1 326.2M744.0 324.0L750.1 326.2M744.0 324.0L749.1 328.5M744.0 324.0L742.1 328.6M749.1 328.5L753.7 327.9M749.1 328.5L746.3 336.0M749.1 328.5L749.3 334.3M746.3 336.0L749.3 334.3M746.3 336.0L748.2 338.7M746.3 336.0L743.6 339.7M748.2 338.7L753.6 338.4M748.2 338.7L745.4 344.6M745.4 344.6L749.7 343.4M745.4 344.6L749.2 349.1M745.4 344.6L742.4 348.1M749.2 349.1L753.1 349.9M749.2 349.1L746.0 352.0M749.2 349.1L749.2 354.4M746.0 352.0L749.2 354.4M746.0 352.0L747.0 357.4M746.0 352.0L743.5 358.8M747.0 357.4L754.9 356.9M747.0 357.4L746.4 362.4M747.0 357.4L752.5 363.8M746.4 362.4L752.5 363.8M746.4 362.4L748.5 366.1M746.4 362.4L744.1 368.3M748.5 366.1L755.2 367.1M748.5 366.1L744.0 371.8M748.5 366.1L750.6 372.3M744.0 371.8L741.5 377.5M748.9 378.1L755.5 377.7M748.9 378.1L746.1 381.5M748.9 378.1L750.5 381.9M746.1 381.5L750.5 381.9M746.1 381.5L748.3 386.9M746.1 381.5L743.8 388.1M748.3 386.9L753.0 385.4M748.3 386.9L745.4 390.4M748.3 386.9L749.6 392.9M745.4 390.4L749.6 392.9M745.4 390.4L749.6 395.5M745.4 390.4L743.4 397.2M749.6 395.5L753.0 398.1M749.6 395.5L747.2 402.9M749.6 395.5L750.1 400.5M747.2 402.9L750.1 400.5M747.2 402.9L746.6 406.0M747.2 402.9L741.5 405.6M746.6 406.0L753.8 405.0M752.1 288.1L756.1 288.1M752.1 288.1L753.6 290.5M752.1 288.1L748.5 291.7M753.6 290.5L760.6 292.4M753.6 290.5L750.0 297.6M753.6 290.5L757.0 297.5M750.0 297.6L757.0 297.5M750.0 297.6L752.7 301.1M750.0 297.6L748.2 299.1M752.7 301.1L760.8 301.0M752.7 301.1L749.7 305.7M752.7 301.1L757.3 304.1M749.7 305.7L757.3 304.1M749.7 305.7L755.3 309.1M749.7 305.7L748.3 310.5M755.3 309.1L760.1 310.3M755.3 309.1L752.1 315.2M752.1 315.2L757.4 315.7M752.1 315.2L755.1 320.7M752.1 315.2L749.1 319.1M755.1 320.7L758.5 318.4M755.1 320.7L750.1 326.2M755.1 320.7L758.0 323.5M750.1 326.2L758.0 323.5M750.1 326.2L753.7 327.9M750.1 326.2L749.1 328.5M753.7 327.9L759.2 329.0M753.7 327.9L749.3 334.3M749.3 334.3L755.8 335.2M749.3 334.3L753.6 338.4M749.3 334.3L748.2 338.7M753.6 338.4L760.9 338.3M753.6 338.4L749.7 343.4M753.6 338.4L757.0 343.2M749.7 343.4L757.0 343.2M749.7 343.4L753.1 349.9M753.1 349.9L759.5 348.3M753.1 349.9L749.2 354.4M753.1 349.9L755.3 352.3M749.2 354.4L755.3 352.3M749.2 354.4L754.9 356.9M749.2 354.4L747.0 357.4M754.9 356.9L758.2 359.7M754.9 356.9L752.5 363.8M754.9 356.9L756.5 362.1M752.5 363.8L756.5 362.1M752.5 363.8L755.2 367.1M752.5 363.8L748.5 366.1M755.2 367.1L760.7 369.6M755.2 367.1L750.6 372.3M755.2 367.1L756.3 371.4M750.6 372.3L756.3 371.4M750.6 372.3L755.5 377.7M750.6 372.3L748.9 378.1M755.5 377.7L758.2 376.0M755.5 377.7L750.5 381.9M755.5 377.7L755.9 380.8M750.5 381.9L755.9 380.8M750.5 381.9L753.0 385.4M750.5 381.9L748.3 386.9M753.0 385.4L758.3 386.1M753.0 385.4L749.6 392.9M753.0 385.4L756.7 393.1M749.6 392.9L756.7 393.1M749.6 392.9L753.0 398.1M749.6 392.9L749.6 395.5M753.0 398.1L760.1 396.2M753.0 398.1L750.1 400.5M753.0 398.1L756.2 401.4M750.1 400.5L756.2 401.4M750.1 400.5L746.6 406.0M753.8 405.0L758.8 405.6M756.1 288.1L760.5 285.7M756.1 288.1L760.6 292.4M756.1 288.1L753.6 290.5M760.6 292.4L766.4 290.0M760.6 292.4L757.0 297.5M760.6 292.4L762.0 296.5M757.0 297.5L762.0 296.5M757.0 297.5L760.8 301.0M757.0 297.5L752.7 301.1M760.8 301.0L766.0 299.9M760.8 301.0L757.3 304.1M760.8 301.0L761.2 304.8M757.3 304.1L761.2 304.8M757.3 304.1L760.1 310.3M757.3 304.1L755.3 309.1M760.1 310.3L764.4 310.2M760.1 310.3L763.6 316.4M757.4 315.7L763.6 316.4M757.4 315.7L758.5 318.4M757.4 315.7L755.1 320.7M758.5 318.4L766.1 318.3M758.5 318.4L758.0 323.5M758.5 318.4L760.4 325.5M758.0 323.5L760.4 325.5M758.0 323.5L759.2 329.0M758.0 323.5L753.7 327.9M759.2 329.0L766.1 329.5M759.2 329.0L755.8 335.2M759.2 329.0L762.3 332.6M755.8 335.2L762.3 332.6M755.8 335.2L760.9 338.3M755.8 335.2L753.6 338.4M760.9 338.3L757.0 343.2M760.9 338.3L763.1 345.2M757.0 343.2L763.1 345.2M757.0 343.2L759.5 348.3M757.0 343.2L753.1 349.9M759.5 348.3L755.3 352.3M759.5 348.3L760.6 352.3M755.3 352.3L760.6 352.3M755.3 352.3L758.2 359.7M755.3 352.3L754.9 356.9M758.2 359.7L764.8 358.9M758.2 359.7L756.5 362.1M758.2 359.7L763.6 363.8M756.5 362.1L763.6 363.8M756.5 362.1L760.7 369.6M760.7 369.6L756.3 371.4M760.7 369.6L761.8 372.8M756.3 371.4L761.8 372.8M756.3 371.4L758.2 376.0M756.3 371.4L755.5 377.7M758.2 376.0L763.1 378.4M758.2 376.0L761.1 383.7M755.9 380.8L761.1 383.7M755.9 380.8L758.3 386.1M755.9 380.8L753.0 385.4M758.3 386.1L765.3 386.3M758.3 386.1L756.7 393.1M758.3 386.1L760.7 390.9M756.7 393.1L760.7 390.9M756.7 393.1L760.1 396.2M756.7 393.1L753.0 398.1M760.1 396.2L765.2 397.3M760.1 396.2L756.2 401.4M760.1 396.2L760.6 399.8M756.2 401.4L760.6 399.8M756.2 401.4L758.8 405.6M756.2 401.4L753.8 405.0M758.8 405.6L764.8 406.4M760.5 285.7L760.6 292.4M766.4 290.0L770.6 289.6M766.4 290.0L762.0 296.5M766.4 290.0L766.8 295.9M762.0 296.5L766.8 295.9M762.0 296.5L766.0 299.9M762.0 296.5L760.8 301.0M766.0 299.9L771.9 301.4M766.0 299.9L761.2 304.8M766.0 299.9L768.9 305.6M761.2 304.8L768.9 305.6M761.2 304.8L764.4 310.2M761.2 304.8L760.1 310.3M764.4 310.2L769.3 309.5M764.4 310.2L763.6 316.4M764.4 310.2L769.1 315.9M763.6 316.4L769.1 315.9M763.6 316.4L766.1 318.3M763.6 316.4L758.5 318.4M766.1 318.3L769.6 318.3M766.1 318.3L760.4 325.5M766.1 318.3L767.5 325.4M760.4 325.5L767.5 325.4M760.4 325.5L766.1 329.5M760.4 325.5L759.2 329.0M766.1 329.5L770.0 328.7M766.1 329.5L762.3 332.6M766.1 329.5L768.1 335.8M762.3 332.6L768.1 335.8M762.3 332.6L764.4 340.6M762.3 332.6L760.9 338.3M764.4 340.6L769.3 337.5M764.4 340.6L763.1 345.2M764.4 340.6L766.9 343.6M763.1 345.2L766.9 343.6M763.1 345.2L766.4 347.8M763.1 345.2L759.5 348.3M766.4 347.8L770.9 347.6M766.4 347.8L760.6 352.3M766.4 347.8L768.5 354.3M760.6 352.3L768.5 354.3M760.6 352.3L764.8 358.9M760.6 352.3L758.2 359.7M764.8 358.9L763.6 363.8M764.8 358.9L769.2 362.4M763.6 363.8L769.2 362.4M763.6 363.8L765.3 368.8M763.6 363.8L760.7 369.6M765.3 368.8L771.4 366.9M765.3 368.8L761.8 372.8M765.3 368.8L766.5 373.5M761.8 372.8L766.5 373.5M761.8 372.8L763.1 378.4M761.8 372.8L758.2 376.0M763.1 378.4L769.5 379.0M763.1 378.4L761.1 383.7M763.1 378.4L767.5 381.1M761.1 383.7L767.5 381.1M761.1 383.7L765.3 386.3M761.1 383.7L758.3 386.1M765.3 386.3L769.3 386.7M765.3 386.3L760.7 390.9M765.3 386.3L768.1 393.3M760.7 390.9L768.1 393.3M760.7 390.9L765.2 397.3M760.7 390.9L760.1 396.2M765.2 397.3L769.0 396.2M765.2 397.3L760.6 399.8M765.2 397.3L766.5 403.0M760.6 399.8L766.5 403.0M760.6 399.8L764.8 406.4M760.6 399.8L758.8 405.6M764.8 406.4L769.0 404.5M767.1 285.5L770.6 289.6M767.1 285.5L766.4 290.0M770.6 289.6L766.8 295.9M766.8 295.9L771.9 301.4M766.8 295.9L766.0 299.9M771.9 301.4L768.9 305.6M768.9 305.6L769.3 309.5M768.9 305.6L764.4 310.2M769.3 309.5L769.1 315.9M769.1 315.9L769.6 318.3M769.1 315.9L766.1 318.3M769.6 318.3L767.5 325.4M767.5 325.4L770.0 328.7M767.5 325.4L766.1 329.5M770.0 328.7L768.1 335.8M768.1 335.8L769.3 337.5M768.1 335.8L764.4 340.6M769.3 337.5L766.9 343.6M766.9 343.6L770.9 347.6M766.9 343.6L766.4 347.8M770.9 347.6L768.5 354.3M768.5 354.3L770.3 357.2M768.5 354.3L764.8 358.9M770.3 357.2L769.2 362.4M769.2 362.4L771.4 366.9M769.2 362.4L765.3 368.8M771.4 366.9L766.5 373.5M766.5 373.5L769.5 379.0M766.5 373.5L763.1 378.4M769.5 379.0L767.5 381.1M769.3 386.7L768.1 393.3M768.1 393.3L769.0 396.2M768.1 393.3L765.2 397.3M769.0 396.2L766.5 403.0M766.5 403.0L769.0 404.5M766.5 403.0L764.8 406.4" stroke="#84a9ea" stroke-width="0.7" fill="none"/><polygon points="752,292.0 735,299.0 728.5,325.0 724,340.5 728.5,347.0 716.7,358.0 715.5,373.0 709,382.0 702.5,395.0 701.5,412.0 702,418.0 710,404.0 725,372.0 740,337.0 755,304.0 760,294.0" fill="none" stroke="#84a9ea" stroke-width="1.1"/><polygon points="744,372.0 768,372.0 782,392.0 792,414.0 800,440.0 806,467.0 808,477.5 762.5,485.7 714,482.0 716.7,460.0 731,427.0 740,399.0" fill="#0a0c10"/><path clip-path="url(#cp1)" d="M704.6 365.6L711.3 361.6M704.6 365.6L711.0 372.7M711.0 372.7L717.6 373.1M711.0 372.7L707.7 377.2M711.0 372.7L716.3 380.6M707.7 377.2L716.3 380.6M707.7 377.2L706.8 384.8M706.8 384.8L715.9 388.1M706.8 384.8L703.2 391.9M706.8 384.8L715.2 395.2M703.2 391.9L715.2 395.2M703.2 391.9L706.9 402.5M706.9 402.5L721.3 399.6M706.9 402.5L707.1 409.7M706.9 402.5L712.0 411.4M707.1 409.7L712.0 411.4M707.1 409.7L712.1 420.2M712.1 420.2L721.0 418.8M712.1 420.2L712.8 426.2M702.5 426.2L712.8 426.2M702.5 426.2L708.9 431.3M708.9 431.3L720.0 431.2M708.9 431.3L707.6 439.9M708.9 431.3L713.0 439.9M707.6 439.9L713.0 439.9M707.6 439.9L709.9 449.9M709.9 449.9L716.3 449.0M709.9 449.9L707.6 457.9M709.9 449.9L712.1 455.5M707.6 457.9L712.1 455.5M707.6 457.9L708.9 464.5M708.9 464.5L716.4 465.8M708.9 464.5L703.0 475.3M708.9 464.5L711.2 473.9M703.0 475.3L711.2 473.9M703.0 475.3L712.3 478.8M712.3 478.8L716.7 477.8M711.3 361.6L725.5 361.4M711.3 361.6L717.6 373.1M711.3 361.6L711.0 372.7M717.6 373.1L730.0 372.9M717.6 373.1L716.3 380.6M717.6 373.1L725.2 376.6M716.3 380.6L725.2 376.6M716.3 380.6L715.9 388.1M716.3 380.6L706.8 384.8M715.9 388.1L727.2 384.2M715.9 388.1L715.2 395.2M715.9 388.1L725.5 396.3M715.2 395.2L725.5 396.3M715.2 395.2L721.3 399.6M715.2 395.2L706.9 402.5M721.3 399.6L728.2 401.9M721.3 399.6L712.0 411.4M721.3 399.6L722.1 411.8M712.0 411.4L722.1 411.8M712.0 411.4L721.0 418.8M712.0 411.4L712.1 420.2M721.0 418.8L727.4 418.5M721.0 418.8L712.8 426.2M721.0 418.8L720.9 424.0M712.8 426.2L720.9 424.0M712.8 426.2L720.0 431.2M712.8 426.2L708.9 431.3M720.0 431.2L724.9 434.7M720.0 431.2L713.0 439.9M720.0 431.2L723.3 439.3M713.0 439.9L723.3 439.3M713.0 439.9L716.3 449.0M713.0 439.9L709.9 449.9M716.3 449.0L729.6 447.8M716.3 449.0L712.1 455.5M716.3 449.0L722.5 455.0M712.1 455.5L722.5 455.0M712.1 455.5L716.4 465.8M716.4 465.8L726.2 466.7M716.4 465.8L711.2 473.9M716.4 465.8L722.0 470.7M711.2 473.9L722.0 470.7M711.2 473.9L716.7 477.8M711.2 473.9L712.3 478.8M716.7 477.8L727.4 479.4M725.5 361.4L734.3 360.8M725.5 361.4L730.0 372.9M725.5 361.4L717.6 373.1M730.0 372.9L739.3 368.3M730.0 372.9L725.2 376.6M730.0 372.9L734.3 379.6M725.2 376.6L734.3 379.6M725.2 376.6L727.2 384.2M725.2 376.6L715.9 388.1M727.2 384.2L734.8 386.4M727.2 384.2L725.5 396.3M727.2 384.2L730.8 392.9M725.5 396.3L730.8 392.9M725.5 396.3L728.2 401.9M725.5 396.3L721.3 399.6M728.2 401.9L734.8 401.4M728.2 401.9L722.1 411.8M728.2 401.9L734.8 412.8M722.1 411.8L734.8 412.8M722.1 411.8L727.4 418.5M722.1 411.8L721.0 418.8M727.4 418.5L738.9 415.5M727.4 418.5L720.9 424.0M727.4 418.5L730.8 427.9M720.9 424.0L730.8 427.9M720.9 424.0L724.9 434.7M720.9 424.0L720.0 431.2M724.9 434.7L734.0 434.8M724.9 434.7L723.3 439.3M724.9 434.7L730.8 444.1M723.3 439.3L730.8 444.1M723.3 439.3L729.6 447.8M723.3 439.3L716.3 449.0M729.6 447.8L733.7 450.9M729.6 447.8L722.5 455.0M729.6 447.8L731.1 454.9M722.5 455.0L731.1 454.9M722.5 455.0L726.2 466.7M722.5 455.0L716.4 465.8M726.2 466.7L733.6 466.7M726.2 466.7L722.0 470.7M726.2 466.7L732.2 470.8M722.0 470.7L732.2 470.8M722.0 470.7L727.4 479.4M722.0 470.7L716.7 477.8M727.4 479.4L736.1 482.8M734.3 360.8L739.4 363.4M734.3 360.8L739.3 368.3M734.3 360.8L730.0 372.9M739.3 368.3L743.4 369.0M739.3 368.3L734.3 379.6M739.3 368.3L742.6 379.9M734.3 379.6L742.6 379.9M734.3 379.6L734.8 386.4M734.3 379.6L727.2 384.2M734.8 386.4L743.8 384.1M734.8 386.4L730.8 392.9M730.8 392.9L738.6 394.9M730.8 392.9L734.8 401.4M730.8 392.9L728.2 401.9M734.8 401.4L745.5 400.8M734.8 401.4L734.8 412.8M734.8 401.4L739.3 410.6M734.8 412.8L739.3 410.6M734.8 412.8L738.9 415.5M734.8 412.8L727.4 418.5M738.9 415.5L746.7 419.6M738.9 415.5L730.8 427.9M738.9 415.5L741.5 423.9M730.8 427.9L741.5 423.9M730.8 427.9L734.0 434.8M730.8 427.9L724.9 434.7M734.0 434.8L743.0 434.8M734.0 434.8L740.5 442.6M730.8 444.1L740.5 442.6M730.8 444.1L733.7 450.9M730.8 444.1L729.6 447.8M733.7 450.9L731.1 454.9M733.7 450.9L740.1 458.9M731.1 454.9L740.1 458.9M731.1 454.9L733.6 466.7M731.1 454.9L726.2 466.7M733.6 466.7L747.6 464.7M733.6 466.7L732.2 470.8M733.6 466.7L738.2 475.0M732.2 470.8L738.2 475.0M732.2 470.8L736.1 482.8M736.1 482.8L745.4 482.6M739.4 363.4L748.7 361.2M739.4 363.4L743.4 369.0M739.4 363.4L739.3 368.3M743.4 369.0L756.4 370.1M743.4 369.0L742.6 379.9M743.4 369.0L748.1 377.9M742.6 379.9L748.1 377.9M742.6 379.9L743.8 384.1M742.6 379.9L734.8 386.4M743.8 384.1L755.0 383.6M743.8 384.1L738.6 394.9M743.8 384.1L750.1 394.0M738.6 394.9L750.1 394.0M738.6 394.9L745.5 400.8M738.6 394.9L734.8 401.4M745.5 400.8L754.6 400.0M745.5 400.8L739.3 410.6M745.5 400.8L751.2 411.8M739.3 410.6L751.2 411.8M739.3 410.6L746.7 419.6M739.3 410.6L738.9 415.5M746.7 419.6L756.6 416.8M746.7 419.6L741.5 423.9M746.7 419.6L751.2 425.0M741.5 423.9L751.2 425.0M741.5 423.9L743.0 434.8M741.5 423.9L734.0 434.8M743.0 434.8L755.9 430.9M743.0 434.8L740.5 442.6M743.0 434.8L752.1 443.9M740.5 442.6L752.1 443.9M740.5 442.6L742.9 450.9M740.5 442.6L733.7 450.9M742.9 450.9L754.5 449.2M742.9 450.9L740.1 458.9M742.9 450.9L750.2 457.2M740.1 458.9L750.2 457.2M740.1 458.9L747.6 464.7M740.1 458.9L733.6 466.7M747.6 464.7L751.7 467.5M747.6 464.7L738.2 475.0M747.6 464.7L748.4 470.8M738.2 475.0L748.4 470.8M738.2 475.0L745.4 482.6M738.2 475.0L736.1 482.8M745.4 482.6L752.2 479.0M748.7 361.2L760.8 360.3M748.7 361.2L756.4 370.1M748.7 361.2L743.4 369.0M756.4 370.1L761.2 372.0M756.4 370.1L748.1 377.9M756.4 370.1L757.2 375.9M748.1 377.9L757.2 375.9M748.1 377.9L755.0 383.6M748.1 377.9L743.8 384.1M755.0 383.6L764.1 386.9M755.0 383.6L750.1 394.0M755.0 383.6L759.1 395.5M750.1 394.0L759.1 395.5M750.1 394.0L754.6 400.0M750.1 394.0L745.5 400.8M754.6 400.0L761.2 404.3M754.6 400.0L751.2 411.8M754.6 400.0L760.3 407.4M751.2 411.8L760.3 407.4M751.2 411.8L756.6 416.8M751.2 411.8L746.7 419.6M756.6 416.8L761.3 417.8M756.6 416.8L751.2 425.0M756.6 416.8L759.0 424.4M751.2 425.0L759.0 424.4M751.2 425.0L755.9 430.9M751.2 425.0L743.0 434.8M755.9 430.9L761.3 432.9M755.9 430.9L752.1 443.9M755.9 430.9L756.9 441.8M752.1 443.9L756.9 441.8M752.1 443.9L754.5 449.2M752.1 443.9L742.9 450.9M754.5 449.2L765.6 447.1M754.5 449.2L750.2 457.2M754.5 449.2L759.4 458.4M750.2 457.2L759.4 458.4M750.2 457.2L751.7 467.5M750.2 457.2L747.6 464.7M751.7 467.5L761.6 466.7M751.7 467.5L761.5 472.0M748.4 470.8L761.5 472.0M748.4 470.8L752.2 479.0M748.4 470.8L745.4 482.6M752.2 479.0L763.0 482.4M760.8 360.3L768.1 362.4M760.8 360.3L761.2 372.0M760.8 360.3L756.4 370.1M761.2 372.0L775.0 372.4M761.2 372.0L757.2 375.9M761.2 372.0L767.1 377.2M757.2 375.9L764.1 386.9M757.2 375.9L755.0 383.6M764.1 386.9L771.6 386.1M764.1 386.9L759.1 395.5M764.1 386.9L770.8 396.1M759.1 395.5L770.8 396.1M759.1 395.5L761.2 404.3M759.1 395.5L754.6 400.0M761.2 404.3L760.3 407.4M761.2 404.3L770.0 407.4M760.3 407.4L770.0 407.4M760.3 407.4L761.3 417.8M760.3 407.4L756.6 416.8M761.3 417.8L772.6 420.4M761.3 417.8L759.0 424.4M761.3 417.8L770.5 424.2M759.0 424.4L770.5 424.2M759.0 424.4L761.3 432.9M759.0 424.4L755.9 430.9M761.3 432.9L772.1 434.2M761.3 432.9L756.9 441.8M761.3 432.9L767.2 441.5M756.9 441.8L767.2 441.5M756.9 441.8L765.6 447.1M756.9 441.8L754.5 449.2M765.6 447.1L770.0 448.7M765.6 447.1L759.4 458.4M765.6 447.1L768.0 454.2M759.4 458.4L768.0 454.2M759.4 458.4L761.6 466.7M759.4 458.4L751.7 467.5M761.6 466.7L770.4 467.5M761.6 466.7L761.5 472.0M761.6 466.7L769.6 475.1M761.5 472.0L769.6 475.1M761.5 472.0L763.0 482.4M761.5 472.0L752.2 479.0M763.0 482.4L773.3 482.2M768.1 362.4L779.2 365.2M768.1 362.4L775.0 372.4M768.1 362.4L761.2 372.0M775.0 372.4L778.8 371.6M775.0 372.4L767.1 377.2M775.0 372.4L775.7 379.7M767.1 377.2L775.7 379.7M767.1 377.2L771.6 386.1M771.6 386.1L780.2 386.7M771.6 386.1L770.8 396.1M771.6 386.1L779.4 395.0M770.8 396.1L774.9 404.0M770.8 396.1L761.2 404.3M774.9 404.0L780.1 402.3M774.9 404.0L770.0 407.4M774.9 404.0L776.6 412.6M770.0 407.4L776.6 412.6M770.0 407.4L772.6 420.4M770.0 407.4L761.3 417.8M772.6 420.4L780.3 416.7M772.6 420.4L770.5 424.2M772.6 420.4L777.8 423.5M770.5 424.2L777.8 423.5M770.5 424.2L772.1 434.2M770.5 424.2L761.3 432.9M772.1 434.2L782.0 436.1M772.1 434.2L767.2 441.5M772.1 434.2L777.1 440.0M767.2 441.5L777.1 440.0M767.2 441.5L770.0 448.7M767.2 441.5L765.6 447.1M770.0 448.7L781.3 449.3M770.0 448.7L768.0 454.2M770.0 448.7L775.0 454.8M768.0 454.2L775.0 454.8M768.0 454.2L770.4 467.5M768.0 454.2L761.6 466.7M770.4 467.5L779.4 463.6M770.4 467.5L769.6 475.1M770.4 467.5L776.5 471.4M769.6 475.1L776.5 471.4M769.6 475.1L773.3 482.2M769.6 475.1L763.0 482.4M773.3 482.2L780.0 478.1M779.2 365.2L786.3 365.0M779.2 365.2L778.8 371.6M779.2 365.2L775.0 372.4M778.8 371.6L791.1 371.2M778.8 371.6L775.7 379.7M778.8 371.6L786.9 376.9M775.7 379.7L786.9 376.9M775.7 379.7L771.6 386.1M780.2 386.7L791.7 386.3M780.2 386.7L779.4 395.0M780.2 386.7L786.3 395.0M779.4 395.0L786.3 395.0M779.4 395.0L780.1 402.3M779.4 395.0L774.9 404.0M780.1 402.3L790.3 401.1M780.1 402.3L776.6 412.6M780.1 402.3L784.5 408.4M776.6 412.6L784.5 408.4M776.6 412.6L780.3 416.7M776.6 412.6L772.6 420.4M780.3 416.7L790.6 417.1M780.3 416.7L777.8 423.5M780.3 416.7L786.5 422.8M777.8 423.5L786.5 422.8M777.8 423.5L782.0 436.1M777.8 423.5L772.1 434.2M782.0 436.1L789.7 435.6M782.0 436.1L777.1 440.0M782.0 436.1L784.5 441.6M777.1 440.0L784.5 441.6M777.1 440.0L781.3 449.3M777.1 440.0L770.0 448.7M781.3 449.3L790.5 447.9M781.3 449.3L775.0 454.8M781.3 449.3L788.8 455.8M775.0 454.8L788.8 455.8M775.0 454.8L779.4 463.6M775.0 454.8L770.4 467.5M779.4 463.6L792.1 462.8M779.4 463.6L776.5 471.4M779.4 463.6L783.5 474.8M776.5 471.4L783.5 474.8M776.5 471.4L780.0 478.1M776.5 471.4L773.3 482.2M780.0 478.1L790.2 477.9M786.3 365.0L794.4 362.7M786.3 365.0L791.1 371.2M786.3 365.0L778.8 371.6M791.1 371.2L800.9 368.6M791.1 371.2L786.9 376.9M791.1 371.2L793.4 381.3M786.9 376.9L793.4 381.3M786.9 376.9L791.7 386.3M786.9 376.9L780.2 386.7M791.7 386.3L800.9 384.5M791.7 386.3L786.3 395.0M791.7 386.3L794.1 393.5M786.3 395.0L794.1 393.5M786.3 395.0L780.1 402.3M790.3 401.1L800.5 402.8M790.3 401.1L784.5 408.4M790.3 401.1L797.0 411.8M784.5 408.4L797.0 411.8M784.5 408.4L790.6 417.1M784.5 408.4L780.3 416.7M790.6 417.1L799.6 419.2M790.6 417.1L786.5 422.8M790.6 417.1L796.4 427.1M786.5 422.8L796.4 427.1M786.5 422.8L789.7 435.6M786.5 422.8L782.0 436.1M789.7 435.6L799.4 435.1M789.7 435.6L784.5 441.6M789.7 435.6L796.2 443.7M784.5 441.6L796.2 443.7M784.5 441.6L790.5 447.9M784.5 441.6L781.3 449.3M790.5 447.9L797.4 451.3M790.5 447.9L788.8 455.8M790.5 447.9L792.1 458.5M788.8 455.8L792.1 458.5M788.8 455.8L792.1 462.8M788.8 455.8L779.4 463.6M792.1 462.8L800.0 464.8M792.1 462.8L783.5 474.8M792.1 462.8L797.7 473.0M783.5 474.8L797.7 473.0M783.5 474.8L790.2 477.9M783.5 474.8L780.0 478.1M790.2 477.9L799.0 482.1M794.4 362.7L806.1 363.6M794.4 362.7L800.9 368.6M794.4 362.7L791.1 371.2M800.9 368.6L807.8 370.6M800.9 368.6L803.8 379.9M793.4 381.3L803.8 379.9M793.4 381.3L800.9 384.5M793.4 381.3L791.7 386.3M800.9 384.5L807.3 385.9M800.9 384.5L794.1 393.5M800.9 384.5L804.3 393.7M794.1 393.5L804.3 393.7M794.1 393.5L800.5 402.8M794.1 393.5L790.3 401.1M800.5 402.8L807.5 403.8M800.5 402.8L797.0 411.8M800.5 402.8L806.0 410.0M797.0 411.8L799.6 419.2M797.0 411.8L790.6 417.1M799.6 419.2L808.2 416.0M799.6 419.2L796.4 427.1M799.6 419.2L802.9 423.6M796.4 427.1L799.4 435.1M796.4 427.1L789.7 435.6M799.4 435.1L808.9 433.9M799.4 435.1L796.2 443.7M799.4 435.1L801.6 443.7M796.2 443.7L801.6 443.7M796.2 443.7L797.4 451.3M796.2 443.7L790.5 447.9M797.4 451.3L807.5 451.1M797.4 451.3L792.1 458.5M797.4 451.3L805.9 459.6M792.1 458.5L805.9 459.6M792.1 458.5L800.0 464.8M792.1 458.5L792.1 462.8M800.0 464.8L806.8 464.4M800.0 464.8L797.7 473.0M800.0 464.8L806.4 469.8M797.7 473.0L806.4 469.8M797.7 473.0L799.0 482.1M797.7 473.0L790.2 477.9M799.0 482.1L805.9 480.8M806.1 363.6L813.0 365.4M806.1 363.6L800.9 368.6M807.8 370.6L819.1 371.1M807.8 370.6L815.9 378.8M803.8 379.9L815.9 378.8M803.8 379.9L807.3 385.9M803.8 379.9L800.9 384.5M807.3 385.9L817.6 387.6M807.3 385.9L804.3 393.7M807.3 385.9L812.4 393.5M804.3 393.7L812.4 393.5M804.3 393.7L807.5 403.8M804.3 393.7L800.5 402.8M807.5 403.8L818.0 401.3M807.5 403.8L806.0 410.0M807.5 403.8L815.6 411.0M806.0 410.0L808.2 416.0M806.0 410.0L799.6 419.2M808.2 416.0L817.6 415.5M808.2 416.0L802.9 423.6M808.2 416.0L812.3 425.1M802.9 423.6L812.3 425.1M802.9 423.6L808.9 433.9M802.9 423.6L799.4 435.1M808.9 433.9L817.9 433.9M808.9 433.9L801.6 443.7M808.9 433.9L815.2 444.0M801.6 443.7L815.2 444.0M801.6 443.7L807.5 451.1M801.6 443.7L797.4 451.3M807.5 451.1L817.4 448.8M807.5 451.1L805.9 459.6M807.5 451.1L813.7 459.8M805.9 459.6L813.7 459.8M805.9 459.6L806.8 464.4M805.9 459.6L800.0 464.8M806.8 464.4L816.6 465.0M806.8 464.4L806.4 469.8M806.8 464.4L814.8 470.7M806.4 469.8L814.8 470.7M806.4 469.8L805.9 480.8M806.4 469.8L799.0 482.1M805.9 480.8L816.5 483.2M813.0 365.4L823.9 363.1M813.0 365.4L819.1 371.1M813.0 365.4L807.8 370.6M819.1 371.1L815.9 378.8M819.1 371.1L823.1 380.5M815.9 378.8L823.1 380.5M815.9 378.8L817.6 387.6M815.9 378.8L807.3 385.9M817.6 387.6L829.3 388.7M817.6 387.6L812.4 393.5M817.6 387.6L821.5 392.3M812.4 393.5L821.5 392.3M812.4 393.5L818.0 401.3M812.4 393.5L807.5 403.8M818.0 401.3L825.3 402.2M818.0 401.3L815.6 411.0M818.0 401.3L822.0 408.2M815.6 411.0L822.0 408.2M815.6 411.0L817.6 415.5M815.6 411.0L808.2 416.0M817.6 415.5L824.7 418.6M817.6 415.5L812.3 425.1M817.6 415.5L822.6 424.8M812.3 425.1L822.6 424.8M812.3 425.1L817.9 433.9M812.3 425.1L808.9 433.9M817.9 433.9L829.3 434.3M817.9 433.9L815.2 444.0M817.9 433.9L819.4 440.8M815.2 444.0L819.4 440.8M815.2 444.0L817.4 448.8M817.4 448.8L828.2 448.0M817.4 448.8L813.7 459.8M817.4 448.8L823.1 454.1M813.7 459.8L823.1 454.1M813.7 459.8L816.6 465.0M813.7 459.8L806.8 464.4M816.6 465.0L825.4 466.8M816.6 465.0L814.8 470.7M816.6 465.0L822.5 473.6M814.8 470.7L822.5 473.6M814.8 470.7L816.5 483.2M814.8 470.7L805.9 480.8M816.5 483.2L824.8 480.4M823.9 363.1L824.3 373.1M823.9 363.1L819.1 371.1M824.3 373.1L823.1 380.5M823.1 380.5L829.3 388.7M823.1 380.5L817.6 387.6M829.3 388.7L821.5 392.3M821.5 392.3L825.3 402.2M821.5 392.3L818.0 401.3M825.3 402.2L822.0 408.2M822.0 408.2L824.7 418.6M822.0 408.2L817.6 415.5M824.7 418.6L822.6 424.8M822.6 424.8L829.3 434.3M822.6 424.8L817.9 433.9M829.3 434.3L819.4 440.8M819.4 440.8L828.2 448.0M819.4 440.8L817.4 448.8M828.2 448.0L823.1 454.1M823.1 454.1L825.4 466.8M823.1 454.1L816.6 465.0M825.4 466.8L822.5 473.6M822.5 473.6L824.8 480.4M822.5 473.6L816.5 483.2" stroke="#84a9ea" stroke-width="0.75" fill="none"/><polygon points="744,372.0 768,372.0 782,392.0 792,414.0 800,440.0 806,467.0 808,477.5 762.5,485.7 714,482.0 716.7,460.0 731,427.0 740,399.0" fill="none" stroke="#84a9ea" stroke-width="1.1"/><polygon points="696.5,489.0 762.5,485.7 808,477.5 826.7,482.0 826.7,496.7 808,511.4 762.5,514.0 716.7,507.7 696.5,500.3" fill="#0a0c10"/><path clip-path="url(#cp2)" d="M690.9 470.6L696.7 472.1M690.9 470.6L693.4 474.9M693.4 474.9L699.9 476.1M693.4 474.9L692.1 482.2M693.4 474.9L697.4 481.0M692.1 482.2L697.4 481.0M692.1 482.2L695.4 485.5M695.4 485.5L700.3 488.2M695.4 485.5L690.9 493.2M695.4 485.5L697.6 491.6M690.9 493.2L697.6 491.6M690.9 493.2L692.8 496.0M692.8 496.0L689.2 501.4M692.8 496.0L696.3 502.0M689.2 501.4L696.3 502.0M689.2 501.4L694.5 506.5M694.5 506.5L699.6 509.7M694.5 506.5L691.7 513.0M694.5 506.5L695.1 511.4M691.7 513.0L695.1 511.4M691.7 513.0L693.6 518.8M693.6 518.8L699.4 519.1M696.7 472.1L703.6 471.0M696.7 472.1L699.9 476.1M696.7 472.1L693.4 474.9M699.9 476.1L707.4 475.7M699.9 476.1L697.4 481.0M699.9 476.1L703.5 480.4M697.4 481.0L703.5 480.4M697.4 481.0L700.3 488.2M697.4 481.0L695.4 485.5M700.3 488.2L703.7 485.8M700.3 488.2L697.6 491.6M700.3 488.2L700.8 492.4M697.6 491.6L700.8 492.4M697.6 491.6L700.5 499.4M697.6 491.6L692.8 496.0M700.5 499.4L705.7 496.4M700.5 499.4L696.3 502.0M700.5 499.4L704.2 502.3M696.3 502.0L704.2 502.3M696.3 502.0L699.6 509.7M696.3 502.0L694.5 506.5M699.6 509.7L704.2 506.8M699.6 509.7L695.1 511.4M699.6 509.7L703.4 514.9M695.1 511.4L703.4 514.9M695.1 511.4L693.6 518.8M699.4 519.1L704.2 516.7M703.6 471.0L709.6 470.5M703.6 471.0L707.4 475.7M703.6 471.0L699.9 476.1M707.4 475.7L713.4 476.7M707.4 475.7L703.5 480.4M707.4 475.7L709.0 481.3M703.5 480.4L709.0 481.3M703.5 480.4L700.3 488.2M703.7 485.8L712.7 487.0M703.7 485.8L700.8 492.4M703.7 485.8L707.8 493.9M700.8 492.4L707.8 493.9M700.8 492.4L705.7 496.4M700.8 492.4L700.5 499.4M705.7 496.4L710.0 498.5M705.7 496.4L704.2 502.3M705.7 496.4L706.8 503.4M704.2 502.3L706.8 503.4M704.2 502.3L704.2 506.8M704.2 502.3L699.6 509.7M704.2 506.8L711.1 509.4M704.2 506.8L703.4 514.9M704.2 506.8L706.8 513.5M703.4 514.9L706.8 513.5M703.4 514.9L704.2 516.7M703.4 514.9L699.4 519.1M704.2 516.7L711.2 520.1M709.6 470.5L716.2 472.0M709.6 470.5L713.4 476.7M713.4 476.7L716.4 475.8M713.4 476.7L709.0 481.3M713.4 476.7L713.6 481.7M709.0 481.3L713.6 481.7M709.0 481.3L712.7 487.0M709.0 481.3L703.7 485.8M712.7 487.0L716.5 486.0M712.7 487.0L707.8 493.9M712.7 487.0L715.5 492.9M707.8 493.9L715.5 492.9M707.8 493.9L710.0 498.5M707.8 493.9L705.7 496.4M710.0 498.5L716.7 499.5M710.0 498.5L706.8 503.4M710.0 498.5L713.4 503.1M706.8 503.4L713.4 503.1M706.8 503.4L711.1 509.4M706.8 503.4L704.2 506.8M711.1 509.4L716.2 509.4M711.1 509.4L706.8 513.5M711.1 509.4L715.9 512.4M706.8 513.5L715.9 512.4M706.8 513.5L711.2 520.1M706.8 513.5L704.2 516.7M711.2 520.1L718.5 519.7M716.2 472.0L719.7 470.9M716.2 472.0L716.4 475.8M716.2 472.0L713.4 476.7M716.4 475.8L723.4 478.2M716.4 475.8L713.6 481.7M716.4 475.8L719.2 482.6M713.6 481.7L719.2 482.6M713.6 481.7L716.5 486.0M713.6 481.7L712.7 487.0M716.5 486.0L723.9 487.0M716.5 486.0L715.5 492.9M716.5 486.0L720.8 493.9M715.5 492.9L720.8 493.9M715.5 492.9L716.7 499.5M715.5 492.9L710.0 498.5M716.7 499.5L722.4 499.1M716.7 499.5L713.4 503.1M716.7 499.5L720.0 503.9M713.4 503.1L720.0 503.9M713.4 503.1L716.2 509.4M713.4 503.1L711.1 509.4M716.2 509.4L724.9 506.8M716.2 509.4L715.9 512.4M716.2 509.4L721.9 515.2M715.9 512.4L721.9 515.2M715.9 512.4L718.5 519.7M715.9 512.4L711.2 520.1M718.5 519.7L722.7 516.7M719.7 470.9L725.0 473.3M719.7 470.9L723.4 478.2M719.7 470.9L716.4 475.8M723.4 478.2L727.6 478.3M723.4 478.2L719.2 482.6M723.4 478.2L725.2 482.8M719.2 482.6L725.2 482.8M719.2 482.6L723.9 487.0M719.2 482.6L716.5 486.0M723.9 487.0L728.0 485.9M723.9 487.0L720.8 493.9M723.9 487.0L727.2 490.8M720.8 493.9L727.2 490.8M720.8 493.9L722.4 499.1M720.8 493.9L716.7 499.5M722.4 499.1L728.9 499.2M722.4 499.1L720.0 503.9M722.4 499.1L727.3 504.3M720.0 503.9L727.3 504.3M720.0 503.9L724.9 506.8M720.0 503.9L716.2 509.4M724.9 506.8L731.3 506.2M724.9 506.8L721.9 515.2M721.9 515.2L725.5 514.4M721.9 515.2L718.5 519.7M722.7 516.7L730.2 516.7M725.0 473.3L732.5 470.5M725.0 473.3L727.6 478.3M725.0 473.3L723.4 478.2M727.6 478.3L735.2 475.2M727.6 478.3L725.2 482.8M727.6 478.3L730.7 483.8M725.2 482.8L730.7 483.8M725.2 482.8L728.0 485.9M725.2 482.8L723.9 487.0M728.0 485.9L734.8 488.6M728.0 485.9L727.2 490.8M728.0 485.9L731.0 492.3M727.2 490.8L731.0 492.3M727.2 490.8L728.9 499.2M727.2 490.8L722.4 499.1M728.9 499.2L734.1 497.3M728.9 499.2L727.3 504.3M728.9 499.2L731.3 503.5M727.3 504.3L731.3 503.5M727.3 504.3L731.3 506.2M727.3 504.3L724.9 506.8M731.3 506.2L734.1 509.0M731.3 506.2L725.5 514.4M731.3 506.2L732.5 511.8M725.5 514.4L732.5 511.8M725.5 514.4L730.2 516.7M725.5 514.4L722.7 516.7M730.2 516.7L734.9 518.5M732.5 470.5L740.1 470.9M732.5 470.5L735.2 475.2M732.5 470.5L727.6 478.3M735.2 475.2L740.4 478.5M735.2 475.2L730.7 483.8M735.2 475.2L740.0 482.8M730.7 483.8L740.0 482.8M730.7 483.8L734.8 488.6M734.8 488.6L740.6 485.9M734.8 488.6L731.0 492.3M734.8 488.6L737.6 490.7M731.0 492.3L737.6 490.7M731.0 492.3L734.1 497.3M731.0 492.3L728.9 499.2M734.1 497.3L739.7 497.6M734.1 497.3L731.3 503.5M734.1 497.3L738.1 503.0M731.3 503.5L738.1 503.0M731.3 503.5L734.1 509.0M731.3 503.5L731.3 506.2M734.1 509.0L741.0 506.2M734.1 509.0L732.5 511.8M734.1 509.0L739.2 513.8M732.5 511.8L739.2 513.8M732.5 511.8L734.9 518.5M732.5 511.8L730.2 516.7M734.9 518.5L741.7 518.7M740.1 470.9L745.2 473.4M740.1 470.9L740.4 478.5M740.1 470.9L735.2 475.2M740.4 478.5L748.9 477.6M740.4 478.5L740.0 482.8M740.4 478.5L744.1 481.2M740.0 482.8L744.1 481.2M740.0 482.8L740.6 485.9M740.0 482.8L734.8 488.6M740.6 485.9L747.2 489.0M740.6 485.9L737.6 490.7M740.6 485.9L744.1 491.9M737.6 490.7L744.1 491.9M737.6 490.7L739.7 497.6M737.6 490.7L734.1 497.3M739.7 497.6L747.2 496.2M739.7 497.6L738.1 503.0M739.7 497.6L746.4 500.9M738.1 503.0L741.0 506.2M738.1 503.0L734.1 509.0M741.0 506.2L747.9 509.7M741.0 506.2L739.2 513.8M741.0 506.2L743.6 513.7M739.2 513.8L743.6 513.7M739.2 513.8L741.7 518.7M739.2 513.8L734.9 518.5M741.7 518.7L747.0 517.5M745.2 473.4L749.3 470.0M745.2 473.4L748.9 477.6M745.2 473.4L740.4 478.5M748.9 477.6L754.8 477.8M748.9 477.6L744.1 481.2M748.9 477.6L752.1 480.2M744.1 481.2L752.1 480.2M744.1 481.2L747.2 489.0M744.1 481.2L740.6 485.9M747.2 489.0L754.2 486.5M747.2 489.0L744.1 491.9M747.2 489.0L751.1 492.6M744.1 491.9L751.1 492.6M744.1 491.9L747.2 496.2M744.1 491.9L739.7 497.6M747.2 496.2L752.8 499.4M747.2 496.2L746.4 500.9M747.2 496.2L748.6 503.8M746.4 500.9L748.6 503.8M746.4 500.9L747.9 509.7M746.4 500.9L741.0 506.2M747.9 509.7L754.9 508.1M747.9 509.7L743.6 513.7M747.9 509.7L750.9 515.2M743.6 513.7L750.9 515.2M743.6 513.7L747.0 517.5M743.6 513.7L741.7 518.7M747.0 517.5L752.5 519.0M749.3 470.0L757.4 471.0M749.3 470.0L754.8 477.8M749.3 470.0L748.9 477.6M754.8 477.8L760.3 476.3M754.8 477.8L752.1 480.2M754.8 477.8L756.6 482.4M752.1 480.2L756.6 482.4M752.1 480.2L754.2 486.5M752.1 480.2L747.2 489.0M754.2 486.5L760.2 486.5M754.2 486.5L751.1 492.6M754.2 486.5L757.0 492.5M751.1 492.6L757.0 492.5M751.1 492.6L752.8 499.4M751.1 492.6L747.2 496.2M752.8 499.4L758.4 498.0M752.8 499.4L748.6 503.8M752.8 499.4L755.6 504.4M748.6 503.8L755.6 504.4M748.6 503.8L754.9 508.1M748.6 503.8L747.9 509.7M754.9 508.1L759.4 508.9M754.9 508.1L750.9 515.2M754.9 508.1L756.6 513.2M750.9 515.2L756.6 513.2M750.9 515.2L752.5 519.0M750.9 515.2L747.0 517.5M752.5 519.0L758.4 517.1M757.4 471.0L764.1 471.6M757.4 471.0L760.3 476.3M757.4 471.0L754.8 477.8M760.3 476.3L765.6 476.8M760.3 476.3L756.6 482.4M760.3 476.3L763.7 480.9M756.6 482.4L763.7 480.9M756.6 482.4L760.2 486.5M756.6 482.4L754.2 486.5M760.2 486.5L764.2 488.4M760.2 486.5L757.0 492.5M760.2 486.5L762.3 492.9M757.0 492.5L762.3 492.9M757.0 492.5L758.4 498.0M757.0 492.5L752.8 499.4M758.4 498.0L766.8 499.1M758.4 498.0L755.6 504.4M758.4 498.0L763.9 501.1M755.6 504.4L763.9 501.1M755.6 504.4L759.4 508.9M755.6 504.4L754.9 508.1M759.4 508.9L765.0 509.3M759.4 508.9L756.6 513.2M759.4 508.9L763.7 511.8M756.6 513.2L763.7 511.8M756.6 513.2L758.4 517.1M756.6 513.2L752.5 519.0M758.4 517.1L764.2 517.5M764.1 471.6L767.0 470.9M764.1 471.6L765.6 476.8M764.1 471.6L760.3 476.3M765.6 476.8L772.7 476.8M765.6 476.8L763.7 480.9M765.6 476.8L768.3 480.4M763.7 480.9L768.3 480.4M763.7 480.9L764.2 488.4M763.7 480.9L760.2 486.5M764.2 488.4L771.1 489.1M764.2 488.4L762.3 492.9M764.2 488.4L769.2 492.2M762.3 492.9L769.2 492.2M762.3 492.9L766.8 499.1M762.3 492.9L758.4 498.0M766.8 499.1L771.4 498.7M766.8 499.1L763.9 501.1M766.8 499.1L769.5 501.5M763.9 501.1L769.5 501.5M763.9 501.1L765.0 509.3M763.9 501.1L759.4 508.9M765.0 509.3L772.2 507.5M765.0 509.3L763.7 511.8M765.0 509.3L768.6 512.3M763.7 511.8L768.6 512.3M763.7 511.8L764.2 517.5M763.7 511.8L758.4 517.1M764.2 517.5L771.0 517.9M767.0 470.9L774.0 469.6M767.0 470.9L772.7 476.8M767.0 470.9L765.6 476.8M772.7 476.8L776.4 477.0M772.7 476.8L768.3 480.4M772.7 476.8L772.8 480.7M768.3 480.4L772.8 480.7M768.3 480.4L771.1 489.1M768.3 480.4L764.2 488.4M771.1 489.1L778.3 486.3M771.1 489.1L769.2 492.2M771.1 489.1L773.8 491.4M769.2 492.2L773.8 491.4M769.2 492.2L771.4 498.7M769.2 492.2L766.8 499.1M771.4 498.7L778.8 496.0M771.4 498.7L769.5 501.5M771.4 498.7L775.0 504.2M769.5 501.5L775.0 504.2M769.5 501.5L772.2 507.5M769.5 501.5L765.0 509.3M772.2 507.5L776.4 507.7M772.2 507.5L768.6 512.3M772.2 507.5L775.6 513.7M768.6 512.3L775.6 513.7M768.6 512.3L771.0 517.9M768.6 512.3L764.2 517.5M771.0 517.9L777.0 516.7M774.0 469.6L780.3 471.0M774.0 469.6L776.4 477.0M774.0 469.6L772.7 476.8M776.4 477.0L772.8 480.7M776.4 477.0L780.1 482.5M772.8 480.7L780.1 482.5M772.8 480.7L778.3 486.3M772.8 480.7L771.1 489.1M778.3 486.3L784.7 486.6M778.3 486.3L773.8 491.4M773.8 491.4L780.1 492.7M773.8 491.4L778.8 496.0M773.8 491.4L771.4 498.7M778.8 496.0L785.1 496.4M778.8 496.0L775.0 504.2M778.8 496.0L782.3 503.6M775.0 504.2L782.3 503.6M775.0 504.2L776.4 507.7M775.0 504.2L772.2 507.5M776.4 507.7L783.0 508.7M776.4 507.7L775.6 513.7M776.4 507.7L779.8 511.6M775.6 513.7L779.8 511.6M775.6 513.7L771.0 517.9M780.3 471.0L786.6 471.5M780.3 471.0L784.3 475.9M780.3 471.0L776.4 477.0M784.3 475.9L791.0 477.7M784.3 475.9L780.1 482.5M784.3 475.9L784.7 482.3M780.1 482.5L784.7 482.3M780.1 482.5L784.7 486.6M780.1 482.5L778.3 486.3M784.7 486.6L789.4 487.0M784.7 486.6L780.1 492.7M784.7 486.6L787.8 492.1M780.1 492.7L787.8 492.1M780.1 492.7L785.1 496.4M780.1 492.7L778.8 496.0M785.1 496.4L789.4 499.1M785.1 496.4L782.3 503.6M785.1 496.4L786.3 502.8M782.3 503.6L786.3 502.8M782.3 503.6L783.0 508.7M782.3 503.6L776.4 507.7M783.0 508.7L789.5 509.3M783.0 508.7L779.8 511.6M783.0 508.7L787.2 514.2M779.8 511.6L787.2 514.2M779.8 511.6L784.5 518.0M779.8 511.6L777.0 516.7M784.5 518.0L789.1 516.7M786.6 471.5L793.2 471.7M786.6 471.5L791.0 477.7M786.6 471.5L784.3 475.9M791.0 477.7L796.5 477.8M791.0 477.7L784.7 482.3M791.0 477.7L791.0 480.9M784.7 482.3L791.0 480.9M784.7 482.3L789.4 487.0M784.7 482.3L784.7 486.6M789.4 487.0L793.9 488.4M789.4 487.0L787.8 492.1M789.4 487.0L791.0 490.8M787.8 492.1L791.0 490.8M787.8 492.1L789.4 499.1M787.8 492.1L785.1 496.4M789.4 499.1L796.5 497.8M789.4 499.1L786.3 502.8M786.3 502.8L790.8 503.5M786.3 502.8L789.5 509.3M786.3 502.8L783.0 508.7M789.5 509.3L796.3 508.0M789.5 509.3L787.2 514.2M789.5 509.3L790.8 514.0M787.2 514.2L790.8 514.0M787.2 514.2L789.1 516.7M787.2 514.2L784.5 518.0M789.1 516.7L795.2 518.8M793.2 471.7L800.4 472.7M793.2 471.7L796.5 477.8M793.2 471.7L791.0 477.7M796.5 477.8L802.9 475.4M796.5 477.8L791.0 480.9M796.5 477.8L797.9 482.0M791.0 480.9L797.9 482.0M791.0 480.9L793.9 488.4M791.0 480.9L789.4 487.0M793.9 488.4L799.6 489.0M793.9 488.4L791.0 490.8M793.9 488.4L797.6 491.5M791.0 490.8L797.6 491.5M791.0 490.8L796.5 497.8M791.0 490.8L789.4 499.1M796.5 497.8L800.8 496.7M796.5 497.8L790.8 503.5M796.5 497.8L799.9 503.0M790.8 503.5L799.9 503.0M790.8 503.5L796.3 508.0M790.8 503.5L789.5 509.3M796.3 508.0L790.8 514.0M796.3 508.0L796.8 512.5M790.8 514.0L796.8 512.5M790.8 514.0L795.2 518.8M790.8 514.0L789.1 516.7M795.2 518.8L802.9 519.6M800.4 472.7L805.9 470.6M800.4 472.7L802.9 475.4M800.4 472.7L796.5 477.8M802.9 475.4L806.4 475.0M802.9 475.4L804.6 481.5M797.9 482.0L804.6 481.5M797.9 482.0L799.6 489.0M799.6 489.0L807.4 487.1M799.6 489.0L797.6 491.5M799.6 489.0L804.8 491.9M797.6 491.5L804.8 491.9M797.6 491.5L800.8 496.7M797.6 491.5L796.5 497.8M800.8 496.7L808.7 496.4M800.8 496.7L799.9 503.0M800.8 496.7L806.1 503.0M799.9 503.0L806.1 503.0M799.9 503.0L801.5 507.7M799.9 503.0L796.3 508.0M801.5 507.7L805.8 507.3M801.5 507.7L796.8 512.5M801.5 507.7L804.6 512.9M796.8 512.5L804.6 512.9M796.8 512.5L802.9 519.6M796.8 512.5L795.2 518.8M802.9 519.6L807.7 517.8M805.9 470.6L809.6 472.6M805.9 470.6L806.4 475.0M805.9 470.6L802.9 475.4M806.4 475.0L812.7 477.5M806.4 475.0L804.6 481.5M806.4 475.0L811.7 482.3M804.6 481.5L811.7 482.3M804.6 481.5L807.4 487.1M804.6 481.5L799.6 489.0M807.4 487.1L813.3 488.8M807.4 487.1L804.8 491.9M807.4 487.1L810.3 493.8M804.8 491.9L810.3 493.8M804.8 491.9L808.7 496.4M804.8 491.9L800.8 496.7M808.7 496.4L811.8 497.3M808.7 496.4L806.1 503.0M808.7 496.4L811.0 501.1M806.1 503.0L811.0 501.1M806.1 503.0L805.8 507.3M806.1 503.0L801.5 507.7M805.8 507.3L814.9 506.4M805.8 507.3L804.6 512.9M805.8 507.3L810.9 512.0M804.6 512.9L810.9 512.0M804.6 512.9L807.7 517.8M804.6 512.9L802.9 519.6M807.7 517.8L815.1 518.7M809.6 472.6L817.7 471.5M809.6 472.6L806.4 475.0M812.7 477.5L820.2 477.4M812.7 477.5L811.7 482.3M811.7 482.3L815.7 480.8M811.7 482.3L813.3 488.8M811.7 482.3L807.4 487.1M813.3 488.8L820.8 485.8M813.3 488.8L810.3 493.8M813.3 488.8L818.1 491.3M810.3 493.8L818.1 491.3M810.3 493.8L811.8 497.3M810.3 493.8L808.7 496.4M811.8 497.3L818.0 496.0M811.8 497.3L817.6 504.6M811.0 501.1L817.6 504.6M811.0 501.1L814.9 506.4M811.0 501.1L805.8 507.3M814.9 506.4L819.2 508.7M814.9 506.4L810.9 512.0M814.9 506.4L815.6 514.8M810.9 512.0L815.6 514.8M810.9 512.0L815.1 518.7M810.9 512.0L807.7 517.8M815.1 518.7L820.2 517.2M817.7 471.5L820.8 472.3M817.7 471.5L812.7 477.5M820.2 477.4L823.7 478.0M820.2 477.4L815.7 480.8M820.2 477.4L821.7 480.9M815.7 480.8L821.7 480.9M815.7 480.8L820.8 485.8M815.7 480.8L813.3 488.8M820.8 485.8L825.8 486.5M820.8 485.8L818.1 491.3M820.8 485.8L822.7 491.1M818.1 491.3L822.7 491.1M818.1 491.3L818.0 496.0M818.0 496.0L827.1 496.9M818.0 496.0L823.8 501.5M817.6 504.6L823.8 501.5M817.6 504.6L819.2 508.7M817.6 504.6L814.9 506.4M819.2 508.7L826.6 509.9M819.2 508.7L815.6 514.8M819.2 508.7L822.1 511.5M815.6 514.8L822.1 511.5M815.6 514.8L820.2 517.2M815.6 514.8L815.1 518.7M820.2 517.2L825.0 519.0M820.8 472.3L827.4 471.7M820.8 472.3L823.7 478.0M820.8 472.3L820.2 477.4M823.7 478.0L829.9 476.6M823.7 478.0L821.7 480.9M823.7 478.0L829.4 481.7M821.7 480.9L829.4 481.7M821.7 480.9L825.8 486.5M821.7 480.9L820.8 485.8M825.8 486.5L832.2 485.7M825.8 486.5L822.7 491.1M825.8 486.5L829.8 490.9M822.7 491.1L827.1 496.9M822.7 491.1L818.0 496.0M827.1 496.9L833.1 499.5M827.1 496.9L823.8 501.5M827.1 496.9L830.2 502.9M823.8 501.5L830.2 502.9M823.8 501.5L826.6 509.9M823.8 501.5L819.2 508.7M826.6 509.9L830.7 507.5M826.6 509.9L822.1 511.5M826.6 509.9L829.5 513.2M822.1 511.5L829.5 513.2M822.1 511.5L825.0 519.0M822.1 511.5L820.2 517.2M825.0 519.0L833.2 516.9M827.4 471.7L829.9 476.6M827.4 471.7L823.7 478.0M829.9 476.6L837.9 476.9M829.9 476.6L829.4 481.7M829.9 476.6L832.9 480.6M829.4 481.7L832.9 480.6M829.4 481.7L832.2 485.7M829.4 481.7L825.8 486.5M832.2 485.7L836.6 488.7M832.2 485.7L829.8 490.9M832.2 485.7L835.8 491.3M829.8 490.9L835.8 491.3M829.8 490.9L833.1 499.5M829.8 490.9L827.1 496.9M833.1 499.5L839.1 495.8M833.1 499.5L830.2 502.9M833.1 499.5L834.9 504.6M830.2 502.9L834.9 504.6M830.2 502.9L830.7 507.5M830.2 502.9L826.6 509.9M830.7 507.5L836.9 509.7M830.7 507.5L829.5 513.2M830.7 507.5L835.1 511.5M829.5 513.2L835.1 511.5M829.5 513.2L825.0 519.0M833.2 516.9L836.9 518.3M834.4 472.9L837.9 476.9M834.4 472.9L829.9 476.6M837.9 476.9L832.9 480.6M832.9 480.6L836.6 488.7M832.9 480.6L832.2 485.7M836.6 488.7L835.8 491.3M835.8 491.3L839.1 495.8M835.8 491.3L833.1 499.5M839.1 495.8L834.9 504.6M834.9 504.6L836.9 509.7M834.9 504.6L830.7 507.5M836.9 509.7L835.1 511.5M835.1 511.5L836.9 518.3M835.1 511.5L833.2 516.9" stroke="#84a9ea" stroke-width="0.7" fill="none"/><polygon points="696.5,489.0 762.5,485.7 808,477.5 826.7,482.0 826.7,496.7 808,511.4 762.5,514.0 716.7,507.7 696.5,500.3" fill="none" stroke="#84a9ea" stroke-width="1.1"/><polygon points="880,389.0 897.5,399.5 935,402.0 966,404.5 963.75,424.5 947.5,433.0 910,429.5 880,417.0" fill="#0a0c10"/><path clip-path="url(#cp3)" d="M872.7 383.1L881.0 382.0M872.7 383.1L877.6 388.4M877.6 388.4L882.1 386.4M877.6 388.4L875.7 393.1M877.6 388.4L880.7 392.3M875.7 393.1L880.7 392.3M875.7 393.1L878.6 399.4M878.6 399.4L875.8 402.3M878.6 399.4L880.6 404.2M875.8 402.3L880.6 404.2M875.8 402.3L875.9 408.3M875.9 408.3L883.6 409.5M875.9 408.3L875.6 412.5M875.9 408.3L880.7 413.6M875.6 412.5L880.7 413.6M875.6 412.5L876.1 420.4M876.1 420.4L881.3 417.9M876.1 420.4L875.9 423.5M876.1 420.4L878.1 424.2M875.9 423.5L878.1 424.2M875.9 423.5L876.8 430.7M876.8 430.7L881.6 428.5M876.8 430.7L874.7 436.1M876.8 430.7L880.0 437.0M874.7 436.1L880.0 437.0M881.0 382.0L886.7 382.1M881.0 382.0L882.1 386.4M881.0 382.0L877.6 388.4M882.1 386.4L890.0 387.0M882.1 386.4L880.7 392.3M882.1 386.4L884.5 392.7M880.7 392.3L884.5 392.7M880.7 392.3L882.1 400.4M880.7 392.3L878.6 399.4M882.1 400.4L888.7 399.4M882.1 400.4L880.6 404.2M882.1 400.4L885.8 404.8M880.6 404.2L885.8 404.8M880.6 404.2L883.6 409.5M880.6 404.2L875.9 408.3M883.6 409.5L887.4 410.8M883.6 409.5L880.7 413.6M883.6 409.5L885.4 415.6M880.7 413.6L885.4 415.6M880.7 413.6L881.3 417.9M880.7 413.6L876.1 420.4M881.3 417.9L887.2 420.8M881.3 417.9L878.1 424.2M881.3 417.9L884.9 426.1M878.1 424.2L884.9 426.1M878.1 424.2L881.6 428.5M878.1 424.2L876.8 430.7M881.6 428.5L890.2 430.6M881.6 428.5L880.0 437.0M881.6 428.5L885.1 433.3M880.0 437.0L885.1 433.3M886.7 382.1L890.8 384.6M886.7 382.1L890.0 387.0M886.7 382.1L882.1 386.4M890.0 387.0L893.7 388.8M890.0 387.0L884.5 392.7M890.0 387.0L892.3 394.1M884.5 392.7L892.3 394.1M884.5 392.7L888.7 399.4M884.5 392.7L882.1 400.4M888.7 399.4L885.8 404.8M888.7 399.4L890.5 405.7M885.8 404.8L890.5 405.7M885.8 404.8L887.4 410.8M885.8 404.8L883.6 409.5M887.4 410.8L894.6 409.7M887.4 410.8L885.4 415.6M887.4 410.8L892.3 413.3M885.4 415.6L892.3 413.3M885.4 415.6L887.2 420.8M885.4 415.6L881.3 417.9M887.2 420.8L893.3 417.7M887.2 420.8L884.9 426.1M887.2 420.8L893.4 423.3M884.9 426.1L893.4 423.3M884.9 426.1L890.2 430.6M884.9 426.1L881.6 428.5M890.2 430.6L896.8 429.5M890.2 430.6L885.1 433.3M890.2 430.6L892.9 433.8M885.1 433.3L892.9 433.8M890.8 384.6L899.1 382.0M890.8 384.6L893.7 388.8M890.8 384.6L890.0 387.0M893.7 388.8L900.5 388.3M893.7 388.8L892.3 394.1M893.7 388.8L896.5 392.5M892.3 394.1L896.5 392.5M892.3 394.1L893.8 397.3M892.3 394.1L888.7 399.4M893.8 397.3L902.1 397.8M893.8 397.3L890.5 405.7M893.8 397.3L897.5 404.9M890.5 405.7L897.5 404.9M890.5 405.7L894.6 409.7M890.5 405.7L887.4 410.8M894.6 409.7L899.9 407.9M894.6 409.7L892.3 413.3M894.6 409.7L896.9 413.9M892.3 413.3L896.9 413.9M892.3 413.3L893.3 417.7M892.3 413.3L887.2 420.8M893.3 417.7L900.5 420.1M893.3 417.7L893.4 423.3M893.3 417.7L897.9 426.2M893.4 423.3L897.9 426.2M893.4 423.3L896.8 429.5M893.4 423.3L890.2 430.6M896.8 429.5L899.3 430.6M896.8 429.5L892.9 433.8M896.8 429.5L899.3 434.2M892.9 433.8L899.3 434.2M899.1 382.0L902.2 382.8M899.1 382.0L900.5 388.3M899.1 382.0L893.7 388.8M900.5 388.3L905.5 388.1M900.5 388.3L896.5 392.5M900.5 388.3L904.8 391.9M896.5 392.5L904.8 391.9M896.5 392.5L902.1 397.8M896.5 392.5L893.8 397.3M902.1 397.8L905.5 398.6M902.1 397.8L897.5 404.9M902.1 397.8L902.7 402.8M897.5 404.9L899.9 407.9M897.5 404.9L894.6 409.7M899.9 407.9L906.8 407.6M899.9 407.9L896.9 413.9M899.9 407.9L902.3 413.8M896.9 413.9L902.3 413.8M896.9 413.9L900.5 420.1M896.9 413.9L893.3 417.7M900.5 420.1L906.9 421.2M900.5 420.1L897.9 426.2M900.5 420.1L904.2 423.1M897.9 426.2L904.2 423.1M897.9 426.2L899.3 430.6M897.9 426.2L896.8 429.5M899.3 430.6L905.9 430.9M899.3 430.6L899.3 434.2M899.3 430.6L904.2 436.6M899.3 434.2L904.2 436.6M902.2 382.8L911.8 384.4M902.2 382.8L905.5 388.1M902.2 382.8L900.5 388.3M905.5 388.1L911.5 389.9M905.5 388.1L904.8 391.9M905.5 388.1L910.1 392.4M904.8 391.9L910.1 392.4M904.8 391.9L905.5 398.6M904.8 391.9L902.1 397.8M905.5 398.6L911.7 400.1M905.5 398.6L902.7 402.8M905.5 398.6L908.9 402.3M902.7 402.8L908.9 402.3M902.7 402.8L906.8 407.6M902.7 402.8L899.9 407.9M906.8 407.6L912.1 410.7M906.8 407.6L902.3 413.8M906.8 407.6L909.8 415.2M902.3 413.8L909.8 415.2M902.3 413.8L906.9 421.2M902.3 413.8L900.5 420.1M906.9 421.2L911.4 419.4M906.9 421.2L904.2 423.1M906.9 421.2L909.3 423.6M904.2 423.1L909.3 423.6M904.2 423.1L905.9 430.9M904.2 423.1L899.3 430.6M905.9 430.9L913.6 429.4M905.9 430.9L904.2 436.6M905.9 430.9L908.5 437.1M904.2 436.6L908.5 437.1M911.8 384.4L915.9 381.8M911.8 384.4L911.5 389.9M911.8 384.4L905.5 388.1M911.5 389.9L917.1 388.8M911.5 389.9L910.1 392.4M911.5 389.9L916.1 391.6M910.1 392.4L916.1 391.6M910.1 392.4L905.5 398.6M911.7 400.1L918.9 399.6M911.7 400.1L908.9 402.3M911.7 400.1L916.1 402.9M908.9 402.3L916.1 402.9M908.9 402.3L912.1 410.7M908.9 402.3L906.8 407.6M912.1 410.7L919.0 409.5M912.1 410.7L909.8 415.2M912.1 410.7L916.6 413.0M909.8 415.2L916.6 413.0M909.8 415.2L911.4 419.4M909.8 415.2L906.9 421.2M911.4 419.4L920.2 421.3M911.4 419.4L909.3 423.6M911.4 419.4L916.9 426.1M909.3 423.6L916.9 426.1M909.3 423.6L913.6 429.4M909.3 423.6L905.9 430.9M913.6 429.4L918.5 431.5M913.6 429.4L908.5 437.1M913.6 429.4L914.8 434.2M908.5 437.1L914.8 434.2M915.9 381.8L922.4 384.5M915.9 381.8L917.1 388.8M915.9 381.8L911.5 389.9M917.1 388.8L923.4 387.1M917.1 388.8L916.1 391.6M917.1 388.8L920.2 393.2M916.1 391.6L920.2 393.2M916.1 391.6L918.9 399.6M916.1 391.6L911.7 400.1M918.9 399.6L923.6 397.5M918.9 399.6L916.1 402.9M916.1 402.9L923.0 404.2M916.1 402.9L919.0 409.5M916.1 402.9L912.1 410.7M919.0 409.5L926.7 408.7M919.0 409.5L916.6 413.0M919.0 409.5L922.7 412.4M916.6 413.0L922.7 412.4M916.6 413.0L920.2 421.3M916.6 413.0L911.4 419.4M920.2 421.3L926.7 418.5M920.2 421.3L916.9 426.1M920.2 421.3L921.9 424.8M916.9 426.1L921.9 424.8M916.9 426.1L918.5 431.5M916.9 426.1L913.6 429.4M918.5 431.5L926.7 429.9M918.5 431.5L914.8 434.2M918.5 431.5L923.9 435.7M914.8 434.2L923.9 435.7M922.4 384.5L926.9 384.3M922.4 384.5L923.4 387.1M922.4 384.5L917.1 388.8M923.4 387.1L929.9 390.1M923.4 387.1L920.2 393.2M923.4 387.1L927.8 392.4M920.2 393.2L927.8 392.4M920.2 393.2L923.6 397.5M920.2 393.2L918.9 399.6M923.6 397.5L932.8 398.0M923.6 397.5L923.0 404.2M923.6 397.5L927.6 403.3M923.0 404.2L927.6 403.3M923.0 404.2L926.7 408.7M923.0 404.2L919.0 409.5M926.7 408.7L931.6 407.3M926.7 408.7L922.7 412.4M926.7 408.7L927.5 413.0M922.7 412.4L927.5 413.0M922.7 412.4L926.7 418.5M922.7 412.4L920.2 421.3M926.7 418.5L921.9 424.8M926.7 418.5L928.4 423.8M921.9 424.8L928.4 423.8M921.9 424.8L926.7 429.9M921.9 424.8L918.5 431.5M926.7 429.9L930.8 430.2M926.7 429.9L923.9 435.7M926.7 429.9L928.8 433.8M923.9 435.7L928.8 433.8M926.9 384.3L933.0 381.5M926.9 384.3L929.9 390.1M926.9 384.3L923.4 387.1M929.9 390.1L938.8 386.9M929.9 390.1L927.8 392.4M929.9 390.1L932.6 393.5M927.8 392.4L932.6 393.5M927.8 392.4L932.8 398.0M927.8 392.4L923.6 397.5M932.8 398.0L927.6 403.3M932.8 398.0L932.3 402.9M927.6 403.3L932.3 402.9M927.6 403.3L931.6 407.3M927.6 403.3L926.7 408.7M931.6 407.3L935.7 409.4M931.6 407.3L927.5 413.0M931.6 407.3L933.8 414.0M927.5 413.0L933.8 414.0M927.5 413.0L932.3 417.6M927.5 413.0L926.7 418.5M932.3 417.6L938.5 420.2M932.3 417.6L928.4 423.8M932.3 417.6L935.4 426.5M928.4 423.8L935.4 426.5M928.4 423.8L930.8 430.2M928.4 423.8L926.7 429.9M930.8 430.2L936.1 431.7M930.8 430.2L928.8 433.8M930.8 430.2L933.6 433.5M928.8 433.8L933.6 433.5M933.0 381.5L941.6 381.5M933.0 381.5L938.8 386.9M933.0 381.5L929.9 390.1M938.8 386.9L941.1 387.4M938.8 386.9L932.6 393.5M938.8 386.9L939.2 395.2M932.6 393.5L939.2 395.2M932.6 393.5L937.3 400.1M932.6 393.5L932.8 398.0M937.3 400.1L944.4 398.4M937.3 400.1L932.3 402.9M937.3 400.1L940.1 405.2M932.3 402.9L940.1 405.2M932.3 402.9L935.7 409.4M932.3 402.9L931.6 407.3M935.7 409.4L944.2 409.7M935.7 409.4L933.8 414.0M935.7 409.4L940.0 412.8M933.8 414.0L940.0 412.8M933.8 414.0L938.5 420.2M933.8 414.0L932.3 417.6M938.5 420.2L942.0 420.1M938.5 420.2L935.4 426.5M938.5 420.2L940.3 425.9M935.4 426.5L940.3 425.9M935.4 426.5L936.1 431.7M935.4 426.5L930.8 430.2M936.1 431.7L944.5 431.8M936.1 431.7L933.6 433.5M936.1 431.7L938.8 433.6M933.6 433.5L938.8 433.6M941.6 381.5L947.5 383.3M941.6 381.5L941.1 387.4M941.6 381.5L938.8 386.9M941.1 387.4L947.8 389.0M941.1 387.4L939.2 395.2M941.1 387.4L945.1 392.4M939.2 395.2L945.1 392.4M939.2 395.2L944.4 398.4M939.2 395.2L937.3 400.1M944.4 398.4L948.5 398.8M944.4 398.4L940.1 405.2M944.4 398.4L946.7 402.2M940.1 405.2L946.7 402.2M940.1 405.2L944.2 409.7M944.2 409.7L949.9 409.6M944.2 409.7L940.0 412.8M944.2 409.7L945.9 415.0M940.0 412.8L945.9 415.0M940.0 412.8L942.0 420.1M940.0 412.8L938.5 420.2M942.0 420.1L950.2 417.7M942.0 420.1L940.3 425.9M942.0 420.1L945.9 425.4M940.3 425.9L945.9 425.4M940.3 425.9L944.5 431.8M940.3 425.9L936.1 431.7M944.5 431.8L949.8 430.5M944.5 431.8L938.8 433.6M944.5 431.8L944.8 437.0M938.8 433.6L944.8 437.0M947.5 383.3L953.1 382.0M947.5 383.3L947.8 389.0M947.5 383.3L941.1 387.4M947.8 389.0L954.7 390.0M947.8 389.0L945.1 392.4M947.8 389.0L950.9 393.1M945.1 392.4L950.9 393.1M945.1 392.4L948.5 398.8M945.1 392.4L944.4 398.4M948.5 398.8L956.8 400.2M948.5 398.8L951.0 404.8M946.7 402.2L951.0 404.8M946.7 402.2L949.9 409.6M946.7 402.2L944.2 409.7M949.9 409.6L954.5 409.7M949.9 409.6L945.9 415.0M949.9 409.6L953.0 412.9M945.9 415.0L953.0 412.9M945.9 415.0L950.2 417.7M945.9 415.0L942.0 420.1M950.2 417.7L953.9 418.4M950.2 417.7L945.9 425.4M950.2 417.7L951.1 423.0M945.9 425.4L951.1 423.0M945.9 425.4L949.8 430.5M945.9 425.4L944.5 431.8M949.8 430.5L953.6 429.6M949.8 430.5L944.8 437.0M949.8 430.5L951.7 433.6M944.8 437.0L951.7 433.6M953.1 382.0L958.3 384.7M953.1 382.0L954.7 390.0M953.1 382.0L947.8 389.0M954.7 390.0L961.3 387.7M954.7 390.0L950.9 393.1M950.9 393.1L958.8 393.2M950.9 393.1L956.8 400.2M950.9 393.1L948.5 398.8M956.8 400.2L959.8 398.6M956.8 400.2L951.0 404.8M956.8 400.2L956.1 404.6M951.0 404.8L956.1 404.6M951.0 404.8L954.5 409.7M951.0 404.8L949.9 409.6M954.5 409.7L959.7 408.6M954.5 409.7L953.0 412.9M954.5 409.7L959.8 415.3M953.0 412.9L959.8 415.3M953.0 412.9L953.9 418.4M953.0 412.9L950.2 417.7M953.9 418.4L962.3 420.1M953.9 418.4L951.1 423.0M953.9 418.4L958.5 425.5M951.1 423.0L958.5 425.5M951.1 423.0L953.6 429.6M951.1 423.0L949.8 430.5M953.6 429.6L962.8 428.8M953.6 429.6L951.7 433.6M953.6 429.6L959.0 434.4M951.7 433.6L959.0 434.4M958.3 384.7L961.3 387.7M958.3 384.7L954.7 390.0M961.3 387.7L958.8 393.2M961.3 387.7L965.4 393.8M958.8 393.2L965.4 393.8M958.8 393.2L959.8 398.6M958.8 393.2L956.8 400.2M959.8 398.6L965.8 396.8M959.8 398.6L956.1 404.6M959.8 398.6L964.1 404.7M956.1 404.6L964.1 404.7M956.1 404.6L959.7 408.6M956.1 404.6L954.5 409.7M959.7 408.6L966.1 407.4M959.7 408.6L959.8 415.3M959.7 408.6L962.1 413.1M959.8 415.3L962.1 413.1M959.8 415.3L962.3 420.1M959.8 415.3L953.9 418.4M962.3 420.1L967.8 417.6M962.3 420.1L958.5 425.5M962.3 420.1L963.0 423.9M958.5 425.5L963.0 423.9M958.5 425.5L962.8 428.8M958.5 425.5L953.6 429.6M962.8 428.8L967.8 431.9M962.8 428.8L959.0 434.4M959.0 434.4L962.2 433.7M963.1 384.2L971.7 384.8M963.1 384.2L967.4 389.6M963.1 384.2L961.3 387.7M967.4 389.6L971.7 387.6M967.4 389.6L965.4 393.8M967.4 389.6L970.1 392.7M965.4 393.8L970.1 392.7M965.4 393.8L965.8 396.8M965.4 393.8L959.8 398.6M965.8 396.8L972.7 398.6M965.8 396.8L964.1 404.7M965.8 396.8L969.1 402.2M964.1 404.7L969.1 402.2M964.1 404.7L966.1 407.4M964.1 404.7L959.7 408.6M966.1 407.4L962.1 413.1M966.1 407.4L968.4 414.8M962.1 413.1L968.4 414.8M962.1 413.1L962.3 420.1M967.8 417.6L973.8 418.6M967.8 417.6L963.0 423.9M967.8 417.6L971.1 425.6M963.0 423.9L971.1 425.6M963.0 423.9L967.8 431.9M963.0 423.9L962.8 428.8M967.8 431.9L972.4 429.9M967.8 431.9L962.2 433.7M967.8 431.9L968.8 436.8M962.2 433.7L968.8 436.8M971.7 384.8L976.2 381.3M971.7 384.8L971.7 387.6M971.7 384.8L967.4 389.6M971.7 387.6L977.7 389.0M971.7 387.6L970.1 392.7M971.7 387.6L975.6 394.3M970.1 392.7L975.6 394.3M970.1 392.7L972.7 398.6M970.1 392.7L965.8 396.8M972.7 398.6L978.0 399.8M972.7 398.6L969.1 402.2M972.7 398.6L977.2 402.3M969.1 402.2L977.2 402.3M969.1 402.2L971.4 407.8M969.1 402.2L966.1 407.4M971.4 407.8L979.3 407.9M971.4 407.8L968.4 414.8M971.4 407.8L976.8 415.5M968.4 414.8L976.8 415.5M968.4 414.8L973.8 418.6M968.4 414.8L967.8 417.6M973.8 418.6L980.1 418.5M973.8 418.6L971.1 425.6M973.8 418.6L974.4 425.4M971.1 425.6L974.4 425.4M971.1 425.6L972.4 429.9M971.1 425.6L967.8 431.9M972.4 429.9L979.2 428.6M972.4 429.9L968.8 436.8M972.4 429.9L974.8 435.5M968.8 436.8L974.8 435.5M976.2 381.3L977.7 389.0M976.2 381.3L971.7 387.6M977.7 389.0L975.6 394.3M975.6 394.3L978.0 399.8M975.6 394.3L972.7 398.6M978.0 399.8L977.2 402.3M977.2 402.3L979.3 407.9M977.2 402.3L971.4 407.8M979.3 407.9L976.8 415.5M976.8 415.5L980.1 418.5M976.8 415.5L973.8 418.6M980.1 418.5L974.4 425.4M974.4 425.4L979.2 428.6M974.4 425.4L972.4 429.9M979.2 428.6L974.8 435.5" stroke="#84a9ea" stroke-width="0.7" fill="none"/><polygon points="880,389.0 897.5,399.5 935,402.0 966,404.5 963.75,424.5 947.5,433.0 910,429.5 880,417.0" fill="none" stroke="#84a9ea" stroke-width="1.1"/><polygon points="799,528.0 836,491.0 863.5,469.0 878,463.7 883.5,491.0 900,518.7 923.3,552.0 925.2,570.3 932.5,607.0 945.3,643.7 941.7,647.3 945.3,665.7 956.3,684.0 974.6,689.5 996.6,685.8 1011.3,691.3 1013.1,698.7 1000.3,707.8 978.3,717.0 960,724.3 941.7,717.0 923.3,709.7 910.5,698.7 914.2,726.0 912.3,733.5 895.8,733.5 873.8,724.3 864.7,713.3 850,698.7 848.2,680.3 840.8,662.0 831.7,634.5 818.8,607.0 812,583.0 799,555.0 790,537.0" fill="#0a0c10"/><path clip-path="url(#cp4)" d="M780.0 454.2L792.6 447.5M780.0 454.2L782.3 462.5M782.3 462.5L800.7 459.4M782.3 462.5L778.8 476.4M782.3 462.5L793.6 475.1M778.8 476.4L793.6 475.1M778.8 476.4L782.6 489.5M782.6 489.5L801.2 488.7M782.6 489.5L775.1 502.5M782.6 489.5L791.2 498.7M775.1 502.5L791.2 498.7M775.1 502.5L782.8 507.2M782.8 507.2L800.2 510.1M782.8 507.2L778.2 519.6M782.8 507.2L786.4 526.5M778.2 519.6L786.4 526.5M778.2 519.6L784.6 531.0M784.6 531.0L799.7 536.6M784.6 531.0L780.4 547.5M784.6 531.0L792.2 544.7M780.4 547.5L792.2 544.7M780.4 547.5L785.2 556.0M785.2 556.0L796.7 562.2M785.2 556.0L777.2 570.4M785.2 556.0L794.1 575.3M777.2 570.4L794.1 575.3M777.2 570.4L780.8 586.5M780.8 586.5L794.0 585.3M780.8 586.5L771.8 595.7M780.8 586.5L790.5 595.0M771.8 595.7L790.5 595.0M771.8 595.7L779.3 611.2M779.3 611.2L794.0 604.8M779.3 611.2L779.5 616.0M779.3 611.2L789.7 620.2M779.5 616.0L789.7 620.2M779.5 616.0L782.7 632.1M782.7 632.1L794.9 631.2M782.7 632.1L778.0 646.6M782.7 632.1L790.5 646.9M778.0 646.6L790.5 646.9M778.0 646.6L781.6 660.6M781.6 660.6L797.8 653.7M781.6 660.6L773.2 665.7M781.6 660.6L793.5 667.8M773.2 665.7L793.5 667.8M773.2 665.7L785.8 677.7M785.8 677.7L801.1 685.4M785.8 677.7L773.2 693.3M785.8 677.7L786.8 694.0M773.2 693.3L786.8 694.0M773.2 693.3L781.5 702.5M781.5 702.5L801.2 704.4M781.5 702.5L779.9 717.4M781.5 702.5L790.4 716.0M779.9 717.4L790.4 716.0M792.6 447.5L799.8 447.1M792.6 447.5L800.7 459.4M792.6 447.5L782.3 462.5M800.7 459.4L807.6 459.9M800.7 459.4L793.6 475.1M800.7 459.4L805.2 474.6M793.6 475.1L805.2 474.6M793.6 475.1L801.2 488.7M793.6 475.1L782.6 489.5M801.2 488.7L815.0 487.9M801.2 488.7L791.2 498.7M801.2 488.7L802.8 502.4M791.2 498.7L802.8 502.4M791.2 498.7L800.2 510.1M791.2 498.7L782.8 507.2M800.2 510.1L812.2 511.0M800.2 510.1L786.4 526.5M800.2 510.1L807.2 524.3M786.4 526.5L807.2 524.3M786.4 526.5L799.7 536.6M786.4 526.5L784.6 531.0M799.7 536.6L809.7 535.9M799.7 536.6L792.2 544.7M799.7 536.6L802.2 551.3M792.2 544.7L802.2 551.3M792.2 544.7L785.2 556.0M796.7 562.2L808.7 563.6M796.7 562.2L800.1 567.1M794.1 575.3L800.1 567.1M794.1 575.3L780.8 586.5M794.0 585.3L811.5 581.0M794.0 585.3L790.5 595.0M790.5 595.0L804.1 592.4M790.5 595.0L794.0 604.8M790.5 595.0L779.3 611.2M794.0 604.8L814.0 609.6M794.0 604.8L789.7 620.2M794.0 604.8L805.7 624.0M789.7 620.2L805.7 624.0M789.7 620.2L794.9 631.2M789.7 620.2L782.7 632.1M794.9 631.2L815.4 634.0M794.9 631.2L790.5 646.9M794.9 631.2L805.9 640.1M790.5 646.9L797.8 653.7M790.5 646.9L781.6 660.6M797.8 653.7L807.0 656.1M797.8 653.7L793.5 667.8M797.8 653.7L808.2 667.3M793.5 667.8L808.2 667.3M793.5 667.8L801.1 685.4M793.5 667.8L785.8 677.7M801.1 685.4L811.6 676.7M801.1 685.4L786.8 694.0M801.1 685.4L803.2 696.9M786.8 694.0L803.2 696.9M786.8 694.0L801.2 704.4M786.8 694.0L781.5 702.5M801.2 704.4L811.8 708.4M801.2 704.4L790.4 716.0M801.2 704.4L799.6 715.0M790.4 716.0L799.6 715.0M799.8 447.1L815.1 452.7M799.8 447.1L807.6 459.9M799.8 447.1L800.7 459.4M807.6 459.9L821.4 465.8M807.6 459.9L805.2 474.6M807.6 459.9L815.9 477.5M805.2 474.6L815.9 477.5M805.2 474.6L815.0 487.9M805.2 474.6L801.2 488.7M815.0 487.9L825.1 484.7M815.0 487.9L802.8 502.4M815.0 487.9L822.2 497.6M802.8 502.4L822.2 497.6M802.8 502.4L812.2 511.0M802.8 502.4L800.2 510.1M812.2 511.0L826.8 506.7M812.2 511.0L807.2 524.3M812.2 511.0L821.0 527.1M807.2 524.3L821.0 527.1M807.2 524.3L809.7 535.9M807.2 524.3L799.7 536.6M809.7 535.9L821.5 537.2M809.7 535.9L802.2 551.3M809.7 535.9L815.9 544.0M802.2 551.3L815.9 544.0M802.2 551.3L808.7 563.6M802.2 551.3L796.7 562.2M808.7 563.6L823.8 560.8M808.7 563.6L800.1 567.1M808.7 563.6L822.1 575.9M800.1 567.1L822.1 575.9M800.1 567.1L811.5 581.0M800.1 567.1L794.0 585.3M811.5 581.0L829.4 584.8M811.5 581.0L804.1 592.4M804.1 592.4L819.4 592.8M804.1 592.4L814.0 609.6M804.1 592.4L794.0 604.8M814.0 609.6L827.0 608.5M814.0 609.6L805.7 624.0M814.0 609.6L816.7 623.8M805.7 624.0L816.7 623.8M805.7 624.0L815.4 634.0M805.7 624.0L794.9 631.2M815.4 634.0L822.8 629.2M815.4 634.0L805.9 640.1M815.4 634.0L814.9 641.4M805.9 640.1L814.9 641.4M805.9 640.1L807.0 656.1M805.9 640.1L797.8 653.7M807.0 656.1L825.8 659.5M807.0 656.1L808.2 667.3M807.0 656.1L815.0 669.0M808.2 667.3L811.6 676.7M808.2 667.3L801.1 685.4M811.6 676.7L825.7 681.7M811.6 676.7L803.2 696.9M811.6 676.7L817.2 693.7M803.2 696.9L817.2 693.7M803.2 696.9L811.8 708.4M803.2 696.9L801.2 704.4M811.8 708.4L820.7 701.5M811.8 708.4L817.3 715.3M799.6 715.0L817.3 715.3M815.1 452.7L834.3 447.4M815.1 452.7L821.4 465.8M815.1 452.7L807.6 459.9M821.4 465.8L841.9 459.6M821.4 465.8L815.9 477.5M821.4 465.8L828.3 473.9M815.9 477.5L828.3 473.9M815.9 477.5L825.1 484.7M815.9 477.5L815.0 487.9M825.1 484.7L838.0 484.8M825.1 484.7L822.2 497.6M825.1 484.7L834.4 495.9M822.2 497.6L834.4 495.9M822.2 497.6L826.8 506.7M822.2 497.6L812.2 511.0M826.8 506.7L840.5 513.6M826.8 506.7L821.0 527.1M826.8 506.7L831.6 522.8M821.0 527.1L831.6 522.8M821.0 527.1L821.5 537.2M821.0 527.1L809.7 535.9M821.5 537.2L842.8 535.9M821.5 537.2L815.9 544.0M821.5 537.2L829.1 543.3M815.9 544.0L829.1 543.3M815.9 544.0L823.8 560.8M815.9 544.0L808.7 563.6M823.8 560.8L835.3 557.8M823.8 560.8L822.1 575.9M823.8 560.8L828.3 572.8M822.1 575.9L828.3 572.8M822.1 575.9L829.4 584.8M822.1 575.9L811.5 581.0M829.4 584.8L838.3 582.0M829.4 584.8L819.4 592.8M819.4 592.8L832.1 599.8M819.4 592.8L827.0 608.5M819.4 592.8L814.0 609.6M827.0 608.5L836.7 604.9M827.0 608.5L816.7 623.8M827.0 608.5L830.3 618.6M816.7 623.8L830.3 618.6M816.7 623.8L822.8 629.2M816.7 623.8L815.4 634.0M822.8 629.2L842.7 634.2M822.8 629.2L831.4 641.6M814.9 641.4L831.4 641.6M814.9 641.4L825.8 659.5M814.9 641.4L807.0 656.1M825.8 659.5L815.0 669.0M825.8 659.5L835.1 670.3M815.0 669.0L835.1 670.3M815.0 669.0L825.7 681.7M815.0 669.0L811.6 676.7M825.7 681.7L835.9 682.2M825.7 681.7L817.2 693.7M825.7 681.7L828.0 693.4M817.2 693.7L828.0 693.4M817.2 693.7L820.7 701.5M817.2 693.7L811.8 708.4M820.7 701.5L837.5 701.9M820.7 701.5L817.3 715.3M820.7 701.5L834.2 719.6M817.3 715.3L834.2 719.6M834.3 447.4L846.1 446.7M834.3 447.4L841.9 459.6M834.3 447.4L821.4 465.8M841.9 459.6L854.5 461.3M841.9 459.6L828.3 473.9M841.9 459.6L847.4 470.4M828.3 473.9L847.4 470.4M828.3 473.9L825.1 484.7M838.0 484.8L856.6 481.8M838.0 484.8L834.4 495.9M838.0 484.8L843.5 497.5M834.4 495.9L843.5 497.5M834.4 495.9L840.5 513.6M834.4 495.9L826.8 506.7M840.5 513.6L850.3 506.9M840.5 513.6L831.6 522.8M840.5 513.6L847.7 527.2M831.6 522.8L847.7 527.2M831.6 522.8L842.8 535.9M831.6 522.8L821.5 537.2M842.8 535.9L851.5 532.9M842.8 535.9L829.1 543.3M842.8 535.9L847.5 544.7M829.1 543.3L847.5 544.7M829.1 543.3L835.3 557.8M829.1 543.3L823.8 560.8M835.3 557.8L852.1 561.0M835.3 557.8L828.3 572.8M835.3 557.8L845.4 568.4M828.3 572.8L845.4 568.4M828.3 572.8L838.3 582.0M828.3 572.8L829.4 584.8M838.3 582.0L832.1 599.8M838.3 582.0L850.4 599.6M832.1 599.8L850.4 599.6M832.1 599.8L836.7 604.9M832.1 599.8L827.0 608.5M836.7 604.9L849.4 608.1M836.7 604.9L830.3 618.6M836.7 604.9L845.9 617.5M830.3 618.6L845.9 617.5M830.3 618.6L842.7 634.2M830.3 618.6L822.8 629.2M842.7 634.2L854.5 632.4M842.7 634.2L831.4 641.6M842.7 634.2L848.8 642.7M831.4 641.6L848.8 642.7M831.4 641.6L834.9 653.4M831.4 641.6L825.8 659.5M834.9 653.4L856.9 659.6M834.9 653.4L835.1 670.3M834.9 653.4L845.8 665.7M835.1 670.3L845.8 665.7M835.1 670.3L835.9 682.2M835.1 670.3L825.7 681.7M835.9 682.2L852.9 677.8M835.9 682.2L828.0 693.4M835.9 682.2L847.7 695.1M828.0 693.4L847.7 695.1M828.0 693.4L837.5 701.9M828.0 693.4L820.7 701.5M837.5 701.9L853.7 709.7M837.5 701.9L834.2 719.6M837.5 701.9L841.9 719.6M834.2 719.6L841.9 719.6M846.1 446.7L862.7 446.2M846.1 446.7L854.5 461.3M846.1 446.7L841.9 459.6M854.5 461.3L865.4 457.9M854.5 461.3L847.4 470.4M854.5 461.3L860.7 476.1M847.4 470.4L860.7 476.1M847.4 470.4L856.6 481.8M847.4 470.4L838.0 484.8M856.6 481.8L865.6 488.0M856.6 481.8L843.5 497.5M856.6 481.8L858.8 500.3M843.5 497.5L858.8 500.3M843.5 497.5L850.3 506.9M843.5 497.5L840.5 513.6M850.3 506.9L865.0 514.9M850.3 506.9L859.4 518.3M847.7 527.2L859.4 518.3M847.7 527.2L851.5 532.9M847.7 527.2L842.8 535.9M851.5 532.9L863.3 537.0M851.5 532.9L847.5 544.7M851.5 532.9L863.3 548.4M847.5 544.7L863.3 548.4M847.5 544.7L852.1 561.0M847.5 544.7L835.3 557.8M852.1 561.0L863.9 562.7M852.1 561.0L845.4 568.4M852.1 561.0L861.9 568.1M845.4 568.4L861.9 568.1M845.4 568.4L849.2 584.1M845.4 568.4L838.3 582.0M849.2 584.1L865.9 585.2M849.2 584.1L850.4 599.6M849.2 584.1L855.6 591.8M850.4 599.6L855.6 591.8M850.4 599.6L849.4 608.1M850.4 599.6L836.7 604.9M849.4 608.1L865.7 611.4M849.4 608.1L845.9 617.5M849.4 608.1L864.4 618.6M845.9 617.5L864.4 618.6M845.9 617.5L854.5 632.4M845.9 617.5L842.7 634.2M854.5 632.4L870.7 635.0M854.5 632.4L848.8 642.7M854.5 632.4L863.3 645.4M848.8 642.7L863.3 645.4M848.8 642.7L856.9 659.6M848.8 642.7L834.9 653.4M856.9 659.6L871.2 658.1M856.9 659.6L845.8 665.7M856.9 659.6L864.0 669.5M845.8 665.7L864.0 669.5M845.8 665.7L852.9 677.8M845.8 665.7L835.9 682.2M852.9 677.8L864.3 681.3M852.9 677.8L847.7 695.1M852.9 677.8L859.8 691.8M847.7 695.1L859.8 691.8M847.7 695.1L853.7 709.7M847.7 695.1L837.5 701.9M853.7 709.7L865.9 705.6M853.7 709.7L841.9 719.6M853.7 709.7L860.8 715.2M841.9 719.6L860.8 715.2M862.7 446.2L872.0 449.7M862.7 446.2L865.4 457.9M862.7 446.2L854.5 461.3M865.4 457.9L881.0 461.2M865.4 457.9L860.7 476.1M865.4 457.9L875.5 471.2M860.7 476.1L875.5 471.2M860.7 476.1L865.6 488.0M865.6 488.0L881.3 484.2M865.6 488.0L858.8 500.3M865.6 488.0L876.4 500.2M858.8 500.3L876.4 500.2M858.8 500.3L865.0 514.9M858.8 500.3L850.3 506.9M865.0 514.9L883.5 510.8M865.0 514.9L859.4 518.3M865.0 514.9L871.8 526.6M859.4 518.3L871.8 526.6M859.4 518.3L863.3 537.0M859.4 518.3L851.5 532.9M863.3 537.0L881.1 533.8M863.3 537.0L863.3 548.4M863.3 537.0L872.1 546.3M863.3 548.4L872.1 546.3M863.3 548.4L863.9 562.7M863.3 548.4L852.1 561.0M863.9 562.7L882.9 562.2M863.9 562.7L861.9 568.1M863.9 562.7L873.8 573.6M861.9 568.1L873.8 573.6M861.9 568.1L865.9 585.2M861.9 568.1L849.2 584.1M865.9 585.2L878.4 583.3M865.9 585.2L855.6 591.8M865.9 585.2L872.7 594.1M855.6 591.8L872.7 594.1M855.6 591.8L865.7 611.4M855.6 591.8L849.4 608.1M865.7 611.4L879.7 610.3M865.7 611.4L864.4 618.6M865.7 611.4L876.1 617.6M864.4 618.6L876.1 617.6M864.4 618.6L870.7 635.0M864.4 618.6L854.5 632.4M870.7 635.0L878.6 634.9M870.7 635.0L863.3 645.4M870.7 635.0L875.4 646.2M863.3 645.4L875.4 646.2M863.3 645.4L871.2 658.1M863.3 645.4L856.9 659.6M871.2 658.1L882.2 658.5M871.2 658.1L864.0 669.5M871.2 658.1L872.0 665.0M864.0 669.5L872.0 665.0M864.0 669.5L864.3 681.3M864.0 669.5L852.9 677.8M864.3 681.3L879.8 676.9M864.3 681.3L859.8 691.8M864.3 681.3L878.1 693.5M859.8 691.8L878.1 693.5M859.8 691.8L865.9 705.6M859.8 691.8L853.7 709.7M865.9 705.6L882.5 709.7M865.9 705.6L860.8 715.2M865.9 705.6L876.7 715.2M860.8 715.2L876.7 715.2M872.0 449.7L886.5 446.2M872.0 449.7L881.0 461.2M872.0 449.7L865.4 457.9M881.0 461.2L897.6 464.0M881.0 461.2L875.5 471.2M881.0 461.2L887.9 472.9M875.5 471.2L887.9 472.9M875.5 471.2L881.3 484.2M881.3 484.2L892.9 486.1M881.3 484.2L876.4 500.2M881.3 484.2L889.9 502.0M876.4 500.2L889.9 502.0M876.4 500.2L883.5 510.8M876.4 500.2L865.0 514.9M883.5 510.8L898.1 513.9M883.5 510.8L871.8 526.6M883.5 510.8L887.5 522.1M871.8 526.6L887.5 522.1M871.8 526.6L881.1 533.8M871.8 526.6L863.3 537.0M881.1 533.8L893.3 539.2M881.1 533.8L872.1 546.3M881.1 533.8L885.2 544.1M872.1 546.3L885.2 544.1M872.1 546.3L882.9 562.2M872.1 546.3L863.9 562.7M882.9 562.2L893.0 563.1M882.9 562.2L873.8 573.6M882.9 562.2L891.2 570.0M873.8 573.6L891.2 570.0M873.8 573.6L878.4 583.3M873.8 573.6L865.9 585.2M878.4 583.3L898.2 587.2M878.4 583.3L887.3 593.1M872.7 594.1L887.3 593.1M872.7 594.1L879.7 610.3M872.7 594.1L865.7 611.4M879.7 610.3L897.4 606.9M879.7 610.3L876.1 617.6M879.7 610.3L884.6 623.8M876.1 617.6L884.6 623.8M876.1 617.6L878.6 634.9M876.1 617.6L870.7 635.0M878.6 634.9L894.5 631.5M878.6 634.9L875.4 646.2M878.6 634.9L888.9 642.4M875.4 646.2L888.9 642.4M875.4 646.2L882.2 658.5M875.4 646.2L871.2 658.1M882.2 658.5L872.0 665.0M872.0 665.0L886.9 664.6M872.0 665.0L879.8 676.9M872.0 665.0L864.3 681.3M879.8 676.9L893.9 683.5M879.8 676.9L878.1 693.5M879.8 676.9L886.5 694.9M878.1 693.5L886.5 694.9M878.1 693.5L882.5 709.7M878.1 693.5L865.9 705.6M882.5 709.7L876.7 715.2M882.5 709.7L883.7 719.2M876.7 715.2L883.7 719.2M886.5 446.2L897.6 464.0M886.5 446.2L881.0 461.2M897.6 464.0L906.3 465.1M897.6 464.0L887.9 472.9M897.6 464.0L905.7 471.7M887.9 472.9L905.7 471.7M887.9 472.9L892.9 486.1M887.9 472.9L881.3 484.2M892.9 486.1L909.8 486.9M892.9 486.1L889.9 502.0M892.9 486.1L900.4 494.3M889.9 502.0L900.4 494.3M889.9 502.0L898.1 513.9M889.9 502.0L883.5 510.8M898.1 513.9L907.4 511.9M898.1 513.9L887.5 522.1M898.1 513.9L902.9 522.9M887.5 522.1L902.9 522.9M887.5 522.1L893.3 539.2M887.5 522.1L881.1 533.8M893.3 539.2L905.6 532.4M893.3 539.2L885.2 544.1M893.3 539.2L900.3 546.4M885.2 544.1L900.3 546.4M885.2 544.1L893.0 563.1M885.2 544.1L882.9 562.2M893.0 563.1L907.8 562.9M893.0 563.1L891.2 570.0M893.0 563.1L898.6 575.9M891.2 570.0L898.6 575.9M891.2 570.0L898.2 587.2M891.2 570.0L878.4 583.3M898.2 587.2L906.7 586.9M898.2 587.2L887.3 593.1M898.2 587.2L899.7 596.6M887.3 593.1L899.7 596.6M887.3 593.1L879.7 610.3M897.4 606.9L907.9 603.9M897.4 606.9L884.6 623.8M897.4 606.9L904.7 623.0M884.6 623.8L904.7 623.0M884.6 623.8L878.6 634.9M894.5 631.5L906.9 634.9M894.5 631.5L901.8 648.9M888.9 642.4L901.8 648.9M888.9 642.4L890.7 655.8M888.9 642.4L882.2 658.5M890.7 655.8L905.0 655.7M890.7 655.8L886.9 664.6M890.7 655.8L899.6 670.1M886.9 664.6L899.6 670.1M886.9 664.6L893.9 683.5M886.9 664.6L879.8 676.9M893.9 683.5L911.5 684.2M893.9 683.5L886.5 694.9M893.9 683.5L902.4 692.3M886.5 694.9L902.4 692.3M886.5 694.9L896.1 702.7M886.5 694.9L882.5 709.7M896.1 702.7L911.7 701.9M896.1 702.7L883.7 719.2M896.1 702.7L899.8 719.9M883.7 719.2L899.8 719.9M903.0 447.9L915.5 454.1M903.0 447.9L906.3 465.1M903.0 447.9L897.6 464.0M906.3 465.1L919.3 461.5M906.3 465.1L905.7 471.7M906.3 465.1L913.4 469.6M905.7 471.7L909.8 486.9M905.7 471.7L892.9 486.1M909.8 486.9L919.4 482.6M909.8 486.9L900.4 494.3M909.8 486.9L914.8 497.8M900.4 494.3L914.8 497.8M900.4 494.3L907.4 511.9M900.4 494.3L898.1 513.9M907.4 511.9L923.1 508.7M907.4 511.9L902.9 522.9M907.4 511.9L917.8 522.9M902.9 522.9L917.8 522.9M902.9 522.9L905.6 532.4M902.9 522.9L893.3 539.2M905.6 532.4L927.3 532.0M905.6 532.4L900.3 546.4M905.6 532.4L916.1 547.1M900.3 546.4L916.1 547.1M900.3 546.4L907.8 562.9M900.3 546.4L893.0 563.1M907.8 562.9L921.9 562.6M907.8 562.9L898.6 575.9M907.8 562.9L913.4 574.9M898.6 575.9L913.4 574.9M898.6 575.9L906.7 586.9M898.6 575.9L898.2 587.2M906.7 586.9L921.7 582.2M906.7 586.9L899.7 596.6M906.7 586.9L917.0 596.4M899.7 596.6L917.0 596.4M899.7 596.6L907.9 603.9M899.7 596.6L897.4 606.9M907.9 603.9L921.1 604.3M907.9 603.9L904.7 623.0M907.9 603.9L920.1 619.0M904.7 623.0L920.1 619.0M904.7 623.0L906.9 634.9M904.7 623.0L894.5 631.5M906.9 634.9L919.5 633.8M906.9 634.9L901.8 648.9M906.9 634.9L916.3 643.0M901.8 648.9L916.3 643.0M901.8 648.9L905.0 655.7M901.8 648.9L890.7 655.8M905.0 655.7L921.5 659.9M905.0 655.7L899.6 670.1M905.0 655.7L914.6 668.2M899.6 670.1L914.6 668.2M899.6 670.1L911.5 684.2M899.6 670.1L893.9 683.5M911.5 684.2L927.1 679.9M911.5 684.2L902.4 692.3M911.5 684.2L915.1 690.3M902.4 692.3L915.1 690.3M902.4 692.3L911.7 701.9M902.4 692.3L896.1 702.7M911.7 701.9L924.5 707.0M911.7 701.9L899.8 719.9M911.7 701.9L915.5 716.8M915.5 454.1L927.6 452.3M915.5 454.1L919.3 461.5M915.5 454.1L906.3 465.1M919.3 461.5L936.6 464.9M919.3 461.5L913.4 469.6M919.3 461.5L928.9 476.2M913.4 469.6L928.9 476.2M913.4 469.6L919.4 482.6M913.4 469.6L909.8 486.9M919.4 482.6L932.8 483.7M919.4 482.6L914.8 497.8M919.4 482.6L934.1 500.1M914.8 497.8L923.1 508.7M914.8 497.8L907.4 511.9M923.1 508.7L938.6 510.6M923.1 508.7L917.8 522.9M923.1 508.7L929.8 520.1M917.8 522.9L927.3 532.0M917.8 522.9L905.6 532.4M927.3 532.0L934.1 536.3M927.3 532.0L916.1 547.1M927.3 532.0L931.7 545.0M916.1 547.1L931.7 545.0M916.1 547.1L921.9 562.6M916.1 547.1L907.8 562.9M921.9 562.6L938.3 556.1M921.9 562.6L913.4 574.9M921.9 562.6L931.0 568.6M913.4 574.9L931.0 568.6M913.4 574.9L921.7 582.2M913.4 574.9L906.7 586.9M921.7 582.2L917.0 596.4M921.7 582.2L930.5 592.6M917.0 596.4L930.5 592.6M917.0 596.4L921.1 604.3M917.0 596.4L907.9 603.9M921.1 604.3L936.9 609.1M921.1 604.3L920.1 619.0M921.1 604.3L926.7 618.5M920.1 619.0L926.7 618.5M920.1 619.0L919.5 633.8M920.1 619.0L906.9 634.9M919.5 633.8L938.6 632.8M919.5 633.8L916.3 643.0M919.5 633.8L931.0 647.1M916.3 643.0L931.0 647.1M916.3 643.0L921.5 659.9M916.3 643.0L905.0 655.7M921.5 659.9L937.6 654.3M921.5 659.9L914.6 668.2M921.5 659.9L929.5 671.9M914.6 668.2L929.5 671.9M914.6 668.2L927.1 679.9M914.6 668.2L911.5 684.2M927.1 679.9L937.6 683.4M927.1 679.9L915.1 690.3M927.1 679.9L928.8 692.8M915.1 690.3L928.8 692.8M915.1 690.3L911.7 701.9M924.5 707.0L941.2 708.4M924.5 707.0L915.5 716.8M924.5 707.0L931.4 714.1M927.6 452.3L945.0 445.5M927.6 452.3L936.6 464.9M927.6 452.3L919.3 461.5M936.6 464.9L954.9 466.1M936.6 464.9L928.9 476.2M936.6 464.9L946.0 472.0M928.9 476.2L946.0 472.0M928.9 476.2L932.8 483.7M928.9 476.2L919.4 482.6M932.8 483.7L954.1 483.3M932.8 483.7L934.1 500.1M932.8 483.7L946.9 498.6M934.1 500.1L946.9 498.6M934.1 500.1L938.6 510.6M934.1 500.1L923.1 508.7M938.6 510.6L946.7 514.1M938.6 510.6L929.8 520.1M938.6 510.6L943.5 525.7M929.8 520.1L943.5 525.7M929.8 520.1L934.1 536.3M929.8 520.1L927.3 532.0M934.1 536.3L952.7 535.3M934.1 536.3L931.7 545.0M934.1 536.3L947.2 544.5M931.7 545.0L947.2 544.5M931.7 545.0L938.3 556.1M931.7 545.0L921.9 562.6M938.3 556.1L954.6 557.9M938.3 556.1L931.0 568.6M938.3 556.1L939.8 570.0M931.0 568.6L939.8 570.0M931.0 568.6L937.1 582.0M931.0 568.6L921.7 582.2M937.1 582.0L947.1 579.8M937.1 582.0L930.5 592.6M937.1 582.0L945.1 592.5M930.5 592.6L945.1 592.5M930.5 592.6L936.9 609.1M930.5 592.6L921.1 604.3M936.9 609.1L948.0 606.2M936.9 609.1L926.7 618.5M936.9 609.1L942.0 624.0M926.7 618.5L942.0 624.0M926.7 618.5L938.6 632.8M938.6 632.8L954.6 635.7M938.6 632.8L931.0 647.1M938.6 632.8L948.4 644.0M931.0 647.1L948.4 644.0M931.0 647.1L937.6 654.3M931.0 647.1L921.5 659.9M937.6 654.3L929.5 671.9M937.6 654.3L947.8 671.7M929.5 671.9L947.8 671.7M929.5 671.9L937.6 683.4M929.5 671.9L927.1 679.9M937.6 683.4L953.1 678.7M937.6 683.4L928.8 692.8M937.6 683.4L940.3 697.1M928.8 692.8L940.3 697.1M928.8 692.8L941.2 708.4M928.8 692.8L924.5 707.0M941.2 708.4L951.5 706.5M941.2 708.4L931.4 714.1M941.2 708.4L947.2 714.5M931.4 714.1L947.2 714.5M945.0 445.5L959.8 449.4M945.0 445.5L954.9 466.1M945.0 445.5L936.6 464.9M954.9 466.1L967.6 461.5M954.9 466.1L946.0 472.0M954.9 466.1L955.3 478.1M946.0 472.0L955.3 478.1M946.0 472.0L954.1 483.3M946.0 472.0L932.8 483.7M954.1 483.3L963.0 488.4M954.1 483.3L946.9 498.6M954.1 483.3L961.0 496.2M946.9 498.6L961.0 496.2M946.9 498.6L946.7 514.1M946.9 498.6L938.6 510.6M946.7 514.1L966.7 509.7M946.7 514.1L943.5 525.7M946.7 514.1L955.5 520.2M943.5 525.7L955.5 520.2M943.5 525.7L952.7 535.3M943.5 525.7L934.1 536.3M952.7 535.3L969.1 533.8M952.7 535.3L947.2 544.5M952.7 535.3L958.1 547.2M947.2 544.5L958.1 547.2M947.2 544.5L954.6 557.9M947.2 544.5L938.3 556.1M954.6 557.9L960.8 561.6M954.6 557.9L939.8 570.0M954.6 557.9L960.2 574.9M939.8 570.0L960.2 574.9M939.8 570.0L947.1 579.8M939.8 570.0L937.1 582.0M947.1 579.8L963.7 581.1M947.1 579.8L945.1 592.5M947.1 579.8L956.6 597.9M945.1 592.5L956.6 597.9M945.1 592.5L948.0 606.2M945.1 592.5L936.9 609.1M948.0 606.2L966.4 607.2M948.0 606.2L942.0 624.0M948.0 606.2L958.2 617.1M942.0 624.0L958.2 617.1M942.0 624.0L938.6 632.8M954.6 635.7L968.8 632.1M954.6 635.7L948.4 644.0M954.6 635.7L958.1 647.2M948.4 644.0L958.1 647.2M948.4 644.0L953.7 654.8M948.4 644.0L937.6 654.3M953.7 654.8L962.3 658.8M953.7 654.8L947.8 671.7M953.7 654.8L956.7 671.7M947.8 671.7L956.7 671.7M947.8 671.7L953.1 678.7M947.8 671.7L937.6 683.4M953.1 678.7L961.4 679.1M953.1 678.7L940.3 697.1M953.1 678.7L959.2 693.1M940.3 697.1L959.2 693.1M940.3 697.1L951.5 706.5M940.3 697.1L941.2 708.4M951.5 706.5L963.9 706.2M951.5 706.5L947.2 714.5M951.5 706.5L955.5 717.1M947.2 714.5L955.5 717.1M959.8 449.4L967.5 452.4M959.8 449.4L967.6 461.5M959.8 449.4L954.9 466.1M967.6 461.5L976.8 464.8M967.6 461.5L955.3 478.1M967.6 461.5L972.5 475.0M955.3 478.1L972.5 475.0M955.3 478.1L963.0 488.4M955.3 478.1L954.1 483.3M963.0 488.4L980.1 482.9M963.0 488.4L961.0 496.2M963.0 488.4L974.5 496.6M961.0 496.2L974.5 496.6M961.0 496.2L966.7 509.7M961.0 496.2L946.7 514.1M966.7 509.7L982.3 513.2M966.7 509.7L955.5 520.2M966.7 509.7L973.6 525.6M955.5 520.2L973.6 525.6M955.5 520.2L969.1 533.8M955.5 520.2L952.7 535.3M969.1 533.8L978.4 536.5M969.1 533.8L958.1 547.2M958.1 547.2L976.1 544.4M958.1 547.2L960.8 561.6M958.1 547.2L954.6 557.9M960.8 561.6L975.4 558.5M960.8 561.6L960.2 574.9M960.8 561.6L972.1 568.4M960.2 574.9L972.1 568.4M960.2 574.9L963.7 581.1M960.2 574.9L947.1 579.8M963.7 581.1L976.5 587.0M963.7 581.1L956.6 597.9M963.7 581.1L971.0 592.7M956.6 597.9L971.0 592.7M956.6 597.9L966.4 607.2M956.6 597.9L948.0 606.2M966.4 607.2L976.2 608.7M966.4 607.2L958.2 617.1M966.4 607.2L969.2 620.0M958.2 617.1L969.2 620.0M958.2 617.1L968.8 632.1M958.2 617.1L954.6 635.7M968.8 632.1L979.3 631.9M968.8 632.1L958.1 647.2M968.8 632.1L972.0 647.6M958.1 647.2L972.0 647.6M958.1 647.2L962.3 658.8M958.1 647.2L953.7 654.8M962.3 658.8L974.7 660.6M962.3 658.8L956.7 671.7M962.3 658.8L969.3 664.8M956.7 671.7L969.3 664.8M956.7 671.7L961.4 679.1M956.7 671.7L953.1 678.7M961.4 679.1L981.4 681.7M961.4 679.1L959.2 693.1M961.4 679.1L972.3 690.8M959.2 693.1L972.3 690.8M959.2 693.1L963.9 706.2M959.2 693.1L951.5 706.5M963.9 706.2L981.5 703.7M963.9 706.2L955.5 717.1M963.9 706.2L974.0 715.2M955.5 717.1L974.0 715.2M967.5 452.4L986.7 451.0M967.5 452.4L976.8 464.8M967.5 452.4L967.6 461.5M976.8 464.8L991.8 461.7M976.8 464.8L972.5 475.0M976.8 464.8L982.1 475.3M972.5 475.0L982.1 475.3M972.5 475.0L980.1 482.9M972.5 475.0L963.0 488.4M980.1 482.9L994.7 483.1M980.1 482.9L974.5 496.6M980.1 482.9L986.5 500.5M974.5 496.6L986.5 500.5M974.5 496.6L982.3 513.2M974.5 496.6L966.7 509.7M982.3 513.2L989.4 513.6M982.3 513.2L973.6 525.6M982.3 513.2L989.3 518.8M973.6 525.6L989.3 518.8M973.6 525.6L978.4 536.5M973.6 525.6L969.1 533.8M978.4 536.5L990.7 531.2M978.4 536.5L976.1 544.4M978.4 536.5L983.8 543.4M976.1 544.4L983.8 543.4M976.1 544.4L975.4 558.5M976.1 544.4L960.8 561.6M975.4 558.5L992.9 557.1M975.4 558.5L972.1 568.4M972.1 568.4L984.2 571.2M972.1 568.4L976.5 587.0M972.1 568.4L963.7 581.1M976.5 587.0L991.8 586.3M976.5 587.0L971.0 592.7M976.5 587.0L988.0 592.4M971.0 592.7L988.0 592.4M971.0 592.7L976.2 608.7M971.0 592.7L966.4 607.2M976.2 608.7L990.5 603.6M976.2 608.7L969.2 620.0M976.2 608.7L984.5 616.7M969.2 620.0L984.5 616.7M969.2 620.0L979.3 631.9M969.2 620.0L968.8 632.1M979.3 631.9L994.8 634.9M979.3 631.9L972.0 647.6M979.3 631.9L990.4 642.0M972.0 647.6L990.4 642.0M972.0 647.6L974.7 660.6M972.0 647.6L962.3 658.8M974.7 660.6L988.8 659.1M974.7 660.6L969.3 664.8M974.7 660.6L985.2 672.8M969.3 664.8L985.2 672.8M969.3 664.8L981.4 681.7M969.3 664.8L961.4 679.1M981.4 681.7L992.0 679.4M981.4 681.7L972.3 690.8M981.4 681.7L982.2 697.3M972.3 690.8L982.2 697.3M972.3 690.8L981.5 703.7M972.3 690.8L963.9 706.2M981.5 703.7L993.1 704.9M981.5 703.7L974.0 715.2M981.5 703.7L985.4 720.1M974.0 715.2L985.4 720.1M986.7 451.0L1003.0 449.5M986.7 451.0L991.8 461.7M986.7 451.0L976.8 464.8M991.8 461.7L1004.1 461.0M991.8 461.7L982.1 475.3M991.8 461.7L1003.5 473.2M982.1 475.3L1003.5 473.2M982.1 475.3L994.7 483.1M982.1 475.3L980.1 482.9M994.7 483.1L1008.4 486.8M994.7 483.1L986.5 500.5M994.7 483.1L999.7 499.1M986.5 500.5L999.7 499.1M986.5 500.5L989.4 513.6M986.5 500.5L982.3 513.2M989.4 513.6L1004.7 511.1M989.4 513.6L989.3 518.8M989.4 513.6L1003.3 519.0M989.3 518.8L1003.3 519.0M989.3 518.8L990.7 531.2M989.3 518.8L978.4 536.5M990.7 531.2L1005.8 538.4M990.7 531.2L983.8 543.4M990.7 531.2L1004.3 542.8M983.8 543.4L1004.3 542.8M983.8 543.4L992.9 557.1M983.8 543.4L975.4 558.5M992.9 557.1L1008.1 560.5M992.9 557.1L984.2 571.2M992.9 557.1L1003.1 571.2M984.2 571.2L1003.1 571.2M984.2 571.2L991.8 586.3M984.2 571.2L976.5 587.0M991.8 586.3L1003.7 581.9M991.8 586.3L988.0 592.4M991.8 586.3L1001.9 597.9M988.0 592.4L1001.9 597.9M988.0 592.4L976.2 608.7M990.5 603.6L1004.4 609.3M990.5 603.6L984.5 616.7M990.5 603.6L1001.4 621.6M984.5 616.7L1001.4 621.6M984.5 616.7L994.8 634.9M984.5 616.7L979.3 631.9M994.8 634.9L1002.7 631.9M994.8 634.9L990.4 642.0M994.8 634.9L998.4 645.5M990.4 642.0L998.4 645.5M990.4 642.0L988.8 659.1M990.4 642.0L974.7 660.6M988.8 659.1L1005.5 653.4M988.8 659.1L985.2 672.8M988.8 659.1L1001.5 667.0M985.2 672.8L992.0 679.4M985.2 672.8L981.4 681.7M992.0 679.4L1009.6 679.4M992.0 679.4L982.2 697.3M992.0 679.4L1000.4 696.1M982.2 697.3L1000.4 696.1M982.2 697.3L993.1 704.9M982.2 697.3L981.5 703.7M993.1 704.9L1003.6 707.6M993.1 704.9L985.4 720.1M993.1 704.9L996.1 721.6M985.4 720.1L996.1 721.6M1003.0 449.5L1009.7 451.7M1003.0 449.5L1004.1 461.0M1003.0 449.5L991.8 461.7M1004.1 461.0L1019.8 459.0M1004.1 461.0L1003.5 473.2M1004.1 461.0L1013.1 474.1M1003.5 473.2L1013.1 474.1M1003.5 473.2L1008.4 486.8M1003.5 473.2L994.7 483.1M1008.4 486.8L1020.2 482.9M1008.4 486.8L999.7 499.1M1008.4 486.8L1014.2 496.6M999.7 499.1L1014.2 496.6M999.7 499.1L1004.7 511.1M999.7 499.1L989.4 513.6M1004.7 511.1L1003.3 519.0M1004.7 511.1L1013.4 520.3M1003.3 519.0L1013.4 520.3M1003.3 519.0L1005.8 538.4M1003.3 519.0L990.7 531.2M1005.8 538.4L1025.2 533.4M1005.8 538.4L1004.3 542.8M1005.8 538.4L1015.3 550.1M1004.3 542.8L1015.3 550.1M1004.3 542.8L1008.1 560.5M1004.3 542.8L992.9 557.1M1008.1 560.5L1020.0 561.6M1008.1 560.5L1003.1 571.2M1008.1 560.5L1012.0 568.0M1003.1 571.2L1012.0 568.0M1003.1 571.2L1003.7 581.9M1003.1 571.2L991.8 586.3M1003.7 581.9L1016.9 583.2M1003.7 581.9L1001.9 597.9M1003.7 581.9L1017.4 593.2M1001.9 597.9L1017.4 593.2M1001.9 597.9L1004.4 609.3M1001.9 597.9L990.5 603.6M1004.4 609.3L1020.5 610.4M1004.4 609.3L1001.4 621.6M1004.4 609.3L1012.0 617.1M1001.4 621.6L1012.0 617.1M1001.4 621.6L1002.7 631.9M1001.4 621.6L994.8 634.9M1002.7 631.9L1021.2 631.7M1002.7 631.9L998.4 645.5M1002.7 631.9L1017.9 648.1M998.4 645.5L1017.9 648.1M998.4 645.5L1005.5 653.4M998.4 645.5L988.8 659.1M1005.5 653.4L1018.7 657.3M1005.5 653.4L1001.5 667.0M1005.5 653.4L1013.2 664.8M1001.5 667.0L1013.2 664.8M1001.5 667.0L1009.6 679.4M1009.6 679.4L1020.5 684.8M1009.6 679.4L1000.4 696.1M1009.6 679.4L1012.2 694.1M1000.4 696.1L1012.2 694.1M1000.4 696.1L1003.6 707.6M1000.4 696.1L993.1 704.9M1003.6 707.6L1022.9 701.6M1003.6 707.6L996.1 721.6M1003.6 707.6L1017.8 714.2M996.1 721.6L1017.8 714.2M1009.7 451.7L1026.2 451.6M1009.7 451.7L1019.8 459.0M1009.7 451.7L1004.1 461.0M1019.8 459.0L1030.7 460.8M1019.8 459.0L1013.1 474.1M1019.8 459.0L1024.7 473.8M1013.1 474.1L1024.7 473.8M1013.1 474.1L1020.2 482.9M1013.1 474.1L1008.4 486.8M1020.2 482.9L1030.7 483.1M1020.2 482.9L1014.2 496.6M1020.2 482.9L1025.5 494.7M1014.2 496.6L1025.5 494.7M1014.2 496.6L1025.2 509.6M1014.2 496.6L1004.7 511.1M1025.2 509.6L1031.3 507.9M1025.2 509.6L1013.4 520.3M1025.2 509.6L1028.2 519.5M1013.4 520.3L1025.2 533.4M1013.4 520.3L1005.8 538.4M1025.2 533.4L1037.9 534.2M1025.2 533.4L1015.3 550.1M1025.2 533.4L1025.8 544.8M1015.3 550.1L1025.8 544.8M1015.3 550.1L1020.0 561.6M1015.3 550.1L1008.1 560.5M1020.0 561.6L1038.0 555.3M1020.0 561.6L1012.0 568.0M1020.0 561.6L1030.2 567.9M1012.0 568.0L1030.2 567.9M1012.0 568.0L1016.9 583.2M1012.0 568.0L1003.7 581.9M1016.9 583.2L1039.0 582.9M1016.9 583.2L1017.4 593.2M1016.9 583.2L1028.9 599.1M1017.4 593.2L1028.9 599.1M1017.4 593.2L1020.5 610.4M1017.4 593.2L1004.4 609.3M1020.5 610.4L1031.4 604.1M1020.5 610.4L1012.0 617.1M1020.5 610.4L1029.7 621.0M1012.0 617.1L1029.7 621.0M1012.0 617.1L1002.7 631.9M1021.2 631.7L1037.0 630.4M1021.2 631.7L1017.9 648.1M1021.2 631.7L1028.0 641.8M1017.9 648.1L1028.0 641.8M1017.9 648.1L1018.7 657.3M1017.9 648.1L1005.5 653.4M1018.7 657.3L1034.4 654.8M1018.7 657.3L1013.2 664.8M1018.7 657.3L1028.8 667.1M1013.2 664.8L1020.5 684.8M1013.2 664.8L1009.6 679.4M1020.5 684.8L1033.0 682.4M1020.5 684.8L1012.2 694.1M1020.5 684.8L1024.3 696.0M1012.2 694.1L1024.3 696.0M1012.2 694.1L1022.9 701.6M1012.2 694.1L1003.6 707.6M1022.9 701.6L1035.0 703.1M1022.9 701.6L1017.8 714.2M1022.9 701.6L1024.5 717.7M1017.8 714.2L1024.5 717.7M1026.2 451.6L1030.7 460.8M1026.2 451.6L1019.8 459.0M1030.7 460.8L1024.7 473.8M1024.7 473.8L1030.7 483.1M1024.7 473.8L1020.2 482.9M1030.7 483.1L1025.5 494.7M1025.5 494.7L1031.3 507.9M1025.5 494.7L1025.2 509.6M1031.3 507.9L1028.2 519.5M1028.2 519.5L1037.9 534.2M1028.2 519.5L1025.2 533.4M1037.9 534.2L1025.8 544.8M1025.8 544.8L1038.0 555.3M1025.8 544.8L1020.0 561.6M1038.0 555.3L1030.2 567.9M1030.2 567.9L1039.0 582.9M1030.2 567.9L1016.9 583.2M1039.0 582.9L1028.9 599.1M1028.9 599.1L1031.4 604.1M1028.9 599.1L1020.5 610.4M1031.4 604.1L1029.7 621.0M1029.7 621.0L1021.2 631.7M1037.0 630.4L1028.0 641.8M1028.0 641.8L1034.4 654.8M1028.0 641.8L1018.7 657.3M1034.4 654.8L1028.8 667.1M1028.8 667.1L1033.0 682.4M1028.8 667.1L1020.5 684.8M1033.0 682.4L1024.3 696.0M1024.3 696.0L1035.0 703.1M1035.0 703.1L1024.5 717.7" stroke="#84a9ea" stroke-width="0.8" fill="none"/><polygon points="799,528.0 836,491.0 863.5,469.0 878,463.7 883.5,491.0 900,518.7 923.3,552.0 925.2,570.3 932.5,607.0 945.3,643.7 941.7,647.3 945.3,665.7 956.3,684.0 974.6,689.5 996.6,685.8 1011.3,691.3 1013.1,698.7 1000.3,707.8 978.3,717.0 960,724.3 941.7,717.0 923.3,709.7 910.5,698.7 914.2,726.0 912.3,733.5 895.8,733.5 873.8,724.3 864.7,713.3 850,698.7 848.2,680.3 840.8,662.0 831.7,634.5 818.8,607.0 812,583.0 799,555.0 790,537.0" fill="none" stroke="#84a9ea" stroke-width="1.1"/><polygon points="716.7,476.5 735,454.5 755,485.7" fill="#474747"/></svg>
<svg style="position:absolute;left:740px;top:680px;" width="160" height="140" viewBox="0 0 160 140"><path d="M83 33 V91" stroke="#9bd24a" stroke-width="1.2"/>
<path d="M77 33 L83.4 14 L89 33 Z" fill="#8fd13c"/>
<path d="M80 91 L36 119" stroke="#d0482a" stroke-width="1.2"/>
<path d="M80 91 L140 116" stroke="#3050a0" stroke-width="1"/>
<path d="M23.8 126.7 L36.7 115.7 L38 125 Z" fill="#e23a1a"/>
<path d="M150.3 122 L133.8 112 L134 121 Z" fill="#3a78e8"/>
<rect x="69.7" y="80.8" width="24.7" height="24.8" fill="none" stroke="#e8dca0" stroke-width="1"/>
<circle cx="79.7" cy="91" r="4.8" fill="#f4e7a4"/>
<path d="M79.7 80 V84 M79.7 98 V102 M68 91 H72.5 M87 91 H91.5 M72.5 83.5 L74.5 85.5 M85 96.5 L87 98.5 M72.5 98.5 L74.5 96.5 M85 85.5 L87 83.5" stroke="#f4e7a4" stroke-width="1.3"/></svg>
<svg style="position:absolute;left:1495px;top:118px;" width="70" height="75" viewBox="0 0 70 75"><path d="M10.1 33.7 Q8 26 15.9 24.3 L26 37 Z" fill="#ececec"/>
<path d="M47.5 23.8 Q56 24 54.5 32.2 L40 37 Z" fill="#ececec"/>
<path d="M26.5 65 Q32.5 68 38.5 65 L32.5 48 Z" fill="#f2f2f2"/>
<polygon points="32.5,31.5 40.7,36.25 40.7,45.75 32.5,50.5 24.3,45.75 24.3,36.25" fill="#b4b4b4"/>
<polygon points="32.5,41 40.7,45.75 32.5,50.5" fill="#a6a6a6"/>
<polygon points="32.5,31.5 40.7,36.25 32.5,41 24.3,36.25" fill="#c4c4c4"/>
<path d="M26 17 Q32.5 12 39 17 L33 33 Z" fill="#6cc83e"/>
<path d="M10.9 46.9 Q8 55 17.1 57.1 L27 44 Z" fill="#d23c1c"/>
<path d="M55.5 43.5 Q58 52 50.5 54.5 L40 43 Z" fill="#2f62e2"/>
<text x="30" y="11.5" font-family="Liberation Sans" font-weight="bold" font-size="10" fill="#fff">y</text>
<text x="2.5" y="58" font-family="Liberation Sans" font-weight="bold" font-size="9.5" fill="#fff">x</text>
<text x="60.5" y="56" font-family="Liberation Sans" font-weight="bold" font-size="10" fill="#fff">z</text></svg>
<div class="t" style="left:1520px;top:202px;font-size:11px;color:#d0d0d0;font-weight:400;letter-spacing:0.3px;font-family:Liberation Serif,serif;font-size:12px">Iso</div>
<svg style="position:absolute;left:163px;top:806px;" width="26" height="20" viewBox="0 0 26 20"><path d="M7.5 16.6 L10 10.6 H18.8 V16.6 Z" fill="#dedede" stroke="#000" stroke-width="1.3" stroke-linejoin="round"/><circle cx="5.5" cy="10.4" r="3.9" fill="#eee" stroke="#000" stroke-width="1.3"/><circle cx="12.4" cy="6.4" r="3.9" fill="#eee" stroke="#000" stroke-width="1.3"/><rect x="20.2" y="10.6" width="2.6" height="6" rx="1.3" fill="#eee" stroke="#000" stroke-width="1.2"/></svg>
<div style="position:absolute;left:1578px;top:91px;width:1px;height:1088px;background:#858585"></div>
<div style="position:absolute;left:1579px;top:75px;width:98px;height:16px;box-sizing:border-box;border:1px solid #9a9a9a;border-bottom:none;border-radius:5px 5px 0 0;background:linear-gradient(180deg,#ebebeb 0%,#dedede 100%);"></div>
<svg style="position:absolute;left:1587px;top:78px;" width="11" height="11" viewBox="0 0 11 11"><circle cx="5.5" cy="5.5" r="5.3" fill="#222"/><rect x="4.6" y="4.5" width="2" height="4.2" fill="#fff"/><rect x="3.6" y="8" width="4" height="1" fill="#fff"/><rect x="3.8" y="4.3" width="2" height="1" fill="#fff"/><circle cx="5.6" cy="2.8" r="1" fill="#fff"/></svg>
<div class="t" style="left:1603px;top:76px;font-size:11px;color:#000;font-weight:400;letter-spacing:0.8px;">Inspector</div>
<svg style="position:absolute;left:1887px;top:79px;" width="9" height="11" viewBox="0 0 9 11"><path d="M2.2 5.5 V3.3 A2.3 2.3 0 0 1 6.8 3.3 V5.5" fill="none" stroke="#333" stroke-width="1.3"/><rect x="0.5" y="5.3" width="8" height="5.2" fill="#333"/></svg>
<svg style="position:absolute;left:1899px;top:83px;" width="15" height="7" viewBox="0 0 15 7"><path d="M0.5 1.5 L4.5 1.5 L2.5 4.5 Z" fill="#333"/><path d="M6 1 H14 M6 3.5 H14 M6 6 H14" stroke="#333" stroke-width="1.2"/></svg>
<div style="position:absolute;left:1579px;top:91px;width:341px;height:1088px;background:#c2c2c2"></div>
<div style="position:absolute;left:1579px;top:91px;width:341px;height:61px;background:#dcdcdc"></div>
<div style="position:absolute;left:1579px;top:152px;width:341px;height:1px;background:#777"></div>
<svg style="position:absolute;left:1583px;top:95px;" width="15" height="15" viewBox="0 0 15 15"><path d="M1.5 4 L7 1 L12.5 4 L12.5 10 L7 13 L1.5 10 Z" fill="#a9c8f0" stroke="#4a6a9a" stroke-width="0.9"/><path d="M1.5 4 L7 7 L12.5 4 M7 7 V13" fill="none" stroke="#4a6a9a" stroke-width="0.8"/><path d="M1.5 4 L7 1 L12.5 4 L7 7 Z" fill="#e4f0ff"/><path d="M8.5 8.5 H12 L13.5 10 V14.5 H8.5 Z" fill="#fff" stroke="#111" stroke-width="1"/></svg>
<svg style="position:absolute;left:1602px;top:97px;" width="13" height="13" viewBox="0 0 13 13"><rect x="0.5" y="0.5" width="12" height="12" rx="1" fill="url(#cbg)" stroke="#4d5d78"/><defs><linearGradient id="cbg" x1="0" y1="0" x2="0" y2="1"><stop offset="0" stop-color="#9fb4d8"/><stop offset="1" stop-color="#5d7cb8"/></linearGradient></defs><path d="M2.5 6 L5.3 9.5 L11.5 1" fill="none" stroke="#101830" stroke-width="1.9"/></svg>
<div style="position:absolute;left:1618px;top:96px;width:232px;height:15px;box-sizing:border-box;border:1px solid #8d8d8d;border-top-color:#777;background:linear-gradient(180deg,#cfcfcf 0%,#dcdcdc 35%,#dfdfdf 100%);"></div>
<div class="t" style="left:1622px;top:95px;font-size:11px;color:#000;font-weight:400;letter-spacing:0.8px;">Marine</div>
<svg style="position:absolute;left:1856px;top:97px;" width="13" height="13" viewBox="0 0 13 13"><rect x="0.5" y="0.5" width="12" height="12" rx="1.5" fill="#f0f0f0" stroke="#6a6a6a"/></svg>
<div class="t" style="left:1871px;top:96px;font-size:11px;color:#000;font-weight:400;letter-spacing:0.8px;">Static</div>
<div class="t" style="left:1581px;top:114px;font-size:11px;color:#000;font-weight:400;letter-spacing:0.8px;">Tag</div>
<div style="position:absolute;left:1618px;top:115px;width:129px;height:14px;box-sizing:border-box;border:1px solid #7d7d7d;border-radius:3px;background:linear-gradient(180deg,#fbfbfb 0%,#eaeaea 50%,#d3d3d3 100%);"></div>
<div class="t" style="left:1626px;top:114px;font-size:11px;color:#000;font-weight:400;letter-spacing:0.8px;font-size:10px">Untagged</div>
<svg style="position:absolute;left:1737px;top:117px;" width="6" height="10" viewBox="0 0 6 10"><path d="M0 4 L5 4 L2.5 0.5 Z M0 6 L5 6 L2.5 9.5 Z" fill="#333"/></svg>
<div class="t" style="left:1750px;top:114px;font-size:11px;color:#000;font-weight:400;letter-spacing:0.8px;">Layer</div>
<div style="position:absolute;left:1787px;top:115px;width:127px;height:14px;box-sizing:border-box;border:1px solid #7d7d7d;border-radius:3px;background:linear-gradient(180deg,#fbfbfb 0%,#eaeaea 50%,#d3d3d3 100%);"></div>
<div class="t" style="left:1794px;top:114px;font-size:11px;color:#000;font-weight:400;letter-spacing:0.8px;font-size:10px">Default</div>
<svg style="position:absolute;left:1904px;top:117px;" width="6" height="10" viewBox="0 0 6 10"><path d="M0 4 L5 4 L2.5 0.5 Z M0 6 L5 6 L2.5 9.5 Z" fill="#333"/></svg>
<div class="t" style="left:1584px;top:134px;font-size:11px;color:#000;font-weight:400;letter-spacing:0.8px;">Model</div>
<div style="position:absolute;left:1618px;top:134px;width:297px;height:15px;box-sizing:border-box;border:1px solid #7d7d7d;border-radius:3px;background:linear-gradient(180deg,#fbfbfb 0%,#eaeaea 50%,#d3d3d3 100%);"></div>
<div style="position:absolute;left:1717px;top:135px;width:1px;height:13px;background:#8a8a8a"></div>
<div style="position:absolute;left:1816px;top:135px;width:1px;height:13px;background:#8a8a8a"></div>
<div class="t" style="left:1653px;top:134px;font-size:11px;color:#000;font-weight:400;letter-spacing:0.8px;font-size:10px">Select</div>
<div class="t" style="left:1751px;top:134px;font-size:11px;color:#000;font-weight:400;letter-spacing:0.8px;font-size:10px">Revert</div>
<div class="t" style="left:1854px;top:134px;font-size:11px;color:#000;font-weight:400;letter-spacing:0.8px;font-size:10px">Open</div>
<svg style="position:absolute;left:1582px;top:158px;" width="9" height="8" viewBox="0 0 9 8"><path d="M0 0 H8.5 L4.25 8 Z" fill="#6a6a6a"/></svg>
<svg style="position:absolute;left:1594px;top:155px;" width="16" height="13" viewBox="0 0 16 13"><path d="M8 1 V7.5" stroke="#6cbf4c" stroke-width="1.8"/><path d="M8 7.5 L1.5 11.5" stroke="#3d52c8" stroke-width="1.8"/><path d="M8 7.5 L14.5 11.5" stroke="#c0333c" stroke-width="1.8"/></svg>
<div class="t" style="left:1631px;top:155px;font-size:11px;color:#000;font-weight:700;letter-spacing:1.3px;-webkit-text-stroke:0;">Transform</div>
<svg style="position:absolute;left:1882px;top:154px;" width="15" height="16" viewBox="0 0 15 16"><defs><linearGradient id="hg" x1="0" y1="0" x2="0" y2="1"><stop offset="0" stop-color="#9fb4d8"/><stop offset="1" stop-color="#445e90"/></linearGradient></defs><path d="M1.5 3 Q1.5 1 3.5 1 H12.5 Q13.5 1 13.5 2 V13.5 Q13.5 14.5 12.5 14.5 H3 Q1.5 14.5 1.5 13 Z" fill="#1a2440"/><rect x="2.5" y="2.2" width="10" height="11.3" fill="#f4f6fa"/><rect x="4" y="3.8" width="8.3" height="9.7" fill="url(#hg)"/><path d="M6.3 6.3 Q6.5 4.8 8.1 4.8 Q9.7 4.8 9.7 6.3 Q9.7 7.3 8.3 8 V9.3" fill="none" stroke="#e8eefa" stroke-width="1.2"/><circle cx="8.3" cy="11" r="0.8" fill="#e8eefa"/></svg>
<svg style="position:absolute;left:1900px;top:154px;" width="15" height="14" viewBox="0 0 15 14"><g transform="translate(6,7)"><circle r="3.1" fill="none" stroke="#151515" stroke-width="2.3"/><circle cx="4.25" cy="1.76" r="1.2" fill="#151515"/><circle cx="1.76" cy="4.25" r="1.2" fill="#151515"/><circle cx="-1.76" cy="4.25" r="1.2" fill="#151515"/><circle cx="-4.25" cy="1.76" r="1.2" fill="#151515"/><circle cx="-4.25" cy="-1.76" r="1.2" fill="#151515"/><circle cx="-1.76" cy="-4.25" r="1.2" fill="#151515"/><circle cx="1.76" cy="-4.25" r="1.2" fill="#151515"/><circle cx="4.25" cy="-1.76" r="1.2" fill="#151515"/></g><path d="M10.5 9.5 H14 L12.25 13 Z" fill="#151515"/></svg>
<div class="t" style="left:1583px;top:173px;font-size:11px;color:#000;font-weight:400;letter-spacing:0.8px;">Position</div>
<div class="t" style="left:1585px;top:188px;font-size:11px;color:#222;font-weight:400;letter-spacing:0.5px;">X</div>
<div style="position:absolute;left:1597px;top:189px;width:96px;height:15px;box-sizing:border-box;border:1px solid #8d8d8d;border-top-color:#777;background:linear-gradient(180deg,#cfcfcf 0%,#dcdcdc 35%,#dfdfdf 100%);"></div>
<div class="t" style="left:1601px;top:189px;font-size:11px;color:#000;font-weight:400;letter-spacing:0.8px;">-0.001528908</div>
<div class="t" style="left:1696px;top:188px;font-size:11px;color:#222;font-weight:400;letter-spacing:0.5px;">Y</div>
<div style="position:absolute;left:1708px;top:189px;width:97px;height:15px;box-sizing:border-box;border:1px solid #8d8d8d;border-top-color:#777;background:linear-gradient(180deg,#cfcfcf 0%,#dcdcdc 35%,#dfdfdf 100%);"></div>
<div class="t" style="left:1712px;top:189px;font-size:11px;color:#000;font-weight:400;letter-spacing:0.8px;">0</div>
<div class="t" style="left:1808px;top:188px;font-size:11px;color:#222;font-weight:400;letter-spacing:0.5px;">Z</div>
<div style="position:absolute;left:1820px;top:189px;width:95px;height:15px;box-sizing:border-box;border:1px solid #8d8d8d;border-top-color:#777;background:linear-gradient(180deg,#cfcfcf 0%,#dcdcdc 35%,#dfdfdf 100%);"></div>
<div class="t" style="left:1824px;top:189px;font-size:11px;color:#000;font-weight:400;letter-spacing:0.8px;">-2.099991e-05</div>
<div class="t" style="left:1583px;top:208px;font-size:11px;color:#000;font-weight:400;letter-spacing:0.8px;">Rotation</div>
<div class="t" style="left:1585px;top:223px;font-size:11px;color:#222;font-weight:400;letter-spacing:0.5px;">X</div>
<div style="position:absolute;left:1597px;top:224px;width:96px;height:15px;box-sizing:border-box;border:1px solid #8d8d8d;border-top-color:#777;background:linear-gradient(180deg,#cfcfcf 0%,#dcdcdc 35%,#dfdfdf 100%);"></div>
<div class="t" style="left:1601px;top:224px;font-size:11px;color:#000;font-weight:400;letter-spacing:0.8px;">0</div>
<div class="t" style="left:1696px;top:223px;font-size:11px;color:#222;font-weight:400;letter-spacing:0.5px;">Y</div>
<div style="position:absolute;left:1708px;top:224px;width:97px;height:15px;box-sizing:border-box;border:1px solid #8d8d8d;border-top-color:#777;background:linear-gradient(180deg,#cfcfcf 0%,#dcdcdc 35%,#dfdfdf 100%);"></div>
<div class="t" style="left:1712px;top:224px;font-size:11px;color:#000;font-weight:400;letter-spacing:0.8px;">0</div>
<div class="t" style="left:1808px;top:223px;font-size:11px;color:#222;font-weight:400;letter-spacing:0.5px;">Z</div>
<div style="position:absolute;left:1820px;top:224px;width:95px;height:15px;box-sizing:border-box;border:1px solid #8d8d8d;border-top-color:#777;background:linear-gradient(180deg,#cfcfcf 0%,#dcdcdc 35%,#dfdfdf 100%);"></div>
<div class="t" style="left:1824px;top:224px;font-size:11px;color:#000;font-weight:400;letter-spacing:0.8px;">0</div>
<div class="t" style="left:1583px;top:243px;font-size:11px;color:#000;font-weight:400;letter-spacing:0.8px;">Scale</div>
<div class="t" style="left:1585px;top:258px;font-size:11px;color:#222;font-weight:400;letter-spacing:0.5px;">X</div>
<div style="position:absolute;left:1597px;top:259px;width:96px;height:15px;box-sizing:border-box;border:1px solid #8d8d8d;border-top-color:#777;background:linear-gradient(180deg,#cfcfcf 0%,#dcdcdc 35%,#dfdfdf 100%);"></div>
<div class="t" style="left:1601px;top:259px;font-size:11px;color:#000;font-weight:400;letter-spacing:0.8px;">0.9815295</div>
<div class="t" style="left:1696px;top:258px;font-size:11px;color:#222;font-weight:400;letter-spacing:0.5px;">Y</div>
<div style="position:absolute;left:1708px;top:259px;width:97px;height:15px;box-sizing:border-box;border:1px solid #8d8d8d;border-top-color:#777;background:linear-gradient(180deg,#cfcfcf 0%,#dcdcdc 35%,#dfdfdf 100%);"></div>
<div class="t" style="left:1712px;top:259px;font-size:11px;color:#000;font-weight:400;letter-spacing:0.8px;">0.9811959</div>
<div class="t" style="left:1808px;top:258px;font-size:11px;color:#222;font-weight:400;letter-spacing:0.5px;">Z</div>
<div style="position:absolute;left:1820px;top:259px;width:95px;height:15px;box-sizing:border-box;border:1px solid #8d8d8d;border-top-color:#777;background:linear-gradient(180deg,#cfcfcf 0%,#dcdcdc 35%,#dfdfdf 100%);"></div>
<div class="t" style="left:1824px;top:259px;font-size:11px;color:#000;font-weight:400;letter-spacing:0.8px;">0.9811959</div>
<div style="position:absolute;left:1579px;top:277px;width:341px;height:1px;background:#7d7d7d"></div>
<svg style="position:absolute;left:1582px;top:283px;" width="9" height="8" viewBox="0 0 9 8"><path d="M0 0 H8.5 L4.25 8 Z" fill="#6a6a6a"/></svg>
<svg style="position:absolute;left:1595px;top:281px;" width="14" height="14" viewBox="0 0 14 14"><circle cx="6.5" cy="6.5" r="5.7" fill="#f6f6f6" stroke="#333" stroke-width="1"/><path d="M6.5 2.8 V6.8 H9.3" fill="none" stroke="#333" stroke-width="1"/></svg>
<svg style="position:absolute;left:1615px;top:281px;" width="13" height="13" viewBox="0 0 13 13"><rect x="0.5" y="0.5" width="12" height="12" rx="1" fill="url(#cbg)" stroke="#4d5d78"/><defs><linearGradient id="cbg" x1="0" y1="0" x2="0" y2="1"><stop offset="0" stop-color="#9fb4d8"/><stop offset="1" stop-color="#5d7cb8"/></linearGradient></defs><path d="M2.5 6 L5.3 9.5 L11.5 1" fill="none" stroke="#101830" stroke-width="1.9"/></svg>
<div class="t" style="left:1632px;top:280px;font-size:11px;color:#000;font-weight:700;letter-spacing:1.3px;-webkit-text-stroke:0;">Animation</div>
<svg style="position:absolute;left:1882px;top:279px;" width="15" height="16" viewBox="0 0 15 16"><defs><linearGradient id="hg" x1="0" y1="0" x2="0" y2="1"><stop offset="0" stop-color="#9fb4d8"/><stop offset="1" stop-color="#445e90"/></linearGradient></defs><path d="M1.5 3 Q1.5 1 3.5 1 H12.5 Q13.5 1 13.5 2 V13.5 Q13.5 14.5 12.5 14.5 H3 Q1.5 14.5 1.5 13 Z" fill="#1a2440"/><rect x="2.5" y="2.2" width="10" height="11.3" fill="#f4f6fa"/><rect x="4" y="3.8" width="8.3" height="9.7" fill="url(#hg)"/><path d="M6.3 6.3 Q6.5 4.8 8.1 4.8 Q9.7 4.8 9.7 6.3 Q9.7 7.3 8.3 8 V9.3" fill="none" stroke="#e8eefa" stroke-width="1.2"/><circle cx="8.3" cy="11" r="0.8" fill="#e8eefa"/></svg>
<svg style="position:absolute;left:1900px;top:279px;" width="15" height="14" viewBox="0 0 15 14"><g transform="translate(6,7)"><circle r="3.1" fill="none" stroke="#151515" stroke-width="2.3"/><circle cx="4.25" cy="1.76" r="1.2" fill="#151515"/><circle cx="1.76" cy="4.25" r="1.2" fill="#151515"/><circle cx="-1.76" cy="4.25" r="1.2" fill="#151515"/><circle cx="-4.25" cy="1.76" r="1.2" fill="#151515"/><circle cx="-4.25" cy="-1.76" r="1.2" fill="#151515"/><circle cx="-1.76" cy="-4.25" r="1.2" fill="#151515"/><circle cx="1.76" cy="-4.25" r="1.2" fill="#151515"/><circle cx="4.25" cy="-1.76" r="1.2" fill="#151515"/></g><path d="M10.5 9.5 H14 L12.25 13 Z" fill="#151515"/></svg>
<div class="t" style="left:1594px;top:296px;font-size:11px;color:#000;font-weight:400;letter-spacing:0.8px;">Animation</div>
<div class="t" style="left:1773px;top:296px;font-size:11px;color:#000;font-weight:400;letter-spacing:0.8px;">None (Animation Clip)</div>
<div class="t" style="left:1594px;top:312px;font-size:11px;color:#000;font-weight:400;letter-spacing:0.8px;">Animations</div>
<div class="t" style="left:1624px;top:328px;font-size:11px;color:#000;font-weight:400;letter-spacing:0.8px;">Size</div>
<div class="t" style="left:1773px;top:328px;font-size:11px;color:#000;font-weight:400;letter-spacing:0.8px;">0</div>
<div class="t" style="left:1594px;top:344px;font-size:11px;color:#000;font-weight:400;letter-spacing:0.8px;">Play Automatically</div>
<svg style="position:absolute;left:1773px;top:345px;" width="13" height="13" viewBox="0 0 13 13"><rect x="0.5" y="0.5" width="12" height="12" rx="1" fill="url(#cbg)" stroke="#4d5d78"/><defs><linearGradient id="cbg" x1="0" y1="0" x2="0" y2="1"><stop offset="0" stop-color="#9fb4d8"/><stop offset="1" stop-color="#5d7cb8"/></linearGradient></defs><path d="M2.5 6 L5.3 9.5 L11.5 1" fill="none" stroke="#101830" stroke-width="1.9"/></svg>
<div class="t" style="left:1594px;top:360px;font-size:11px;color:#000;font-weight:400;letter-spacing:0.8px;">Animate Physics</div>
<svg style="position:absolute;left:1773px;top:361px;" width="13" height="13" viewBox="0 0 13 13"><rect x="0.5" y="0.5" width="12" height="12" rx="1.5" fill="#f0f0f0" stroke="#6a6a6a"/></svg>
<div class="t" style="left:1594px;top:376px;font-size:11px;color:#000;font-weight:400;letter-spacing:0.8px;">Animate Only If Visible</div>
<svg style="position:absolute;left:1773px;top:377px;" width="13" height="13" viewBox="0 0 13 13"><rect x="0.5" y="0.5" width="12" height="12" rx="1.5" fill="#f0f0f0" stroke="#6a6a6a"/></svg>
<svg style="position:absolute;left:1580px;top:316px;" width="9" height="8" viewBox="0 0 9 8"><path d="M0 0 H8.5 L4.25 8 Z" fill="#6a6a6a"/></svg>
<svg style="position:absolute;left:1909px;top:300px;" width="8" height="8" viewBox="0 0 8 8"><circle cx="4" cy="4" r="3.4" fill="none" stroke="#333" stroke-width="1"/><circle cx="4" cy="4" r="1.1" fill="#333"/></svg>
<div style="position:absolute;left:1579px;top:391px;width:341px;height:1px;background:#7d7d7d"></div>
<svg style="position:absolute;left:1582px;top:398px;" width="9" height="8" viewBox="0 0 9 8"><path d="M0 0 H8.5 L4.25 8 Z" fill="#6a6a6a"/></svg>
<svg style="position:absolute;left:1596px;top:394px;" width="13" height="14" viewBox="0 0 13 14"><path d="M0.5 0.5 H8 L12 4.5 V13 H0.5 Z" fill="#fff" stroke="#333" stroke-width="1"/><path d="M8 0.5 V4.5 H12" fill="none" stroke="#333" stroke-width="0.9"/></svg>
<svg style="position:absolute;left:1615px;top:395px;" width="13" height="13" viewBox="0 0 13 13"><rect x="0.5" y="0.5" width="12" height="12" rx="1" fill="url(#cbg)" stroke="#4d5d78"/><defs><linearGradient id="cbg" x1="0" y1="0" x2="0" y2="1"><stop offset="0" stop-color="#9fb4d8"/><stop offset="1" stop-color="#5d7cb8"/></linearGradient></defs><path d="M2.5 6 L5.3 9.5 L11.5 1" fill="none" stroke="#101830" stroke-width="1.9"/></svg>
<div class="t" style="left:1632px;top:394px;font-size:11px;color:#000;font-weight:700;letter-spacing:1.3px;-webkit-text-stroke:0;">Skinned Mesh Renderer</div>
<svg style="position:absolute;left:1882px;top:393px;" width="15" height="16" viewBox="0 0 15 16"><defs><linearGradient id="hg" x1="0" y1="0" x2="0" y2="1"><stop offset="0" stop-color="#9fb4d8"/><stop offset="1" stop-color="#445e90"/></linearGradient></defs><path d="M1.5 3 Q1.5 1 3.5 1 H12.5 Q13.5 1 13.5 2 V13.5 Q13.5 14.5 12.5 14.5 H3 Q1.5 14.5 1.5 13 Z" fill="#1a2440"/><rect x="2.5" y="2.2" width="10" height="11.3" fill="#f4f6fa"/><rect x="4" y="3.8" width="8.3" height="9.7" fill="url(#hg)"/><path d="M6.3 6.3 Q6.5 4.8 8.1 4.8 Q9.7 4.8 9.7 6.3 Q9.7 7.3 8.3 8 V9.3" fill="none" stroke="#e8eefa" stroke-width="1.2"/><circle cx="8.3" cy="11" r="0.8" fill="#e8eefa"/></svg>
<svg style="position:absolute;left:1900px;top:393px;" width="15" height="14" viewBox="0 0 15 14"><g transform="translate(6,7)"><circle r="3.1" fill="none" stroke="#151515" stroke-width="2.3"/><circle cx="4.25" cy="1.76" r="1.2" fill="#151515"/><circle cx="1.76" cy="4.25" r="1.2" fill="#151515"/><circle cx="-1.76" cy="4.25" r="1.2" fill="#151515"/><circle cx="-4.25" cy="1.76" r="1.2" fill="#151515"/><circle cx="-4.25" cy="-1.76" r="1.2" fill="#151515"/><circle cx="-1.76" cy="-4.25" r="1.2" fill="#151515"/><circle cx="1.76" cy="-4.25" r="1.2" fill="#151515"/><circle cx="4.25" cy="-1.76" r="1.2" fill="#151515"/></g><path d="M10.5 9.5 H14 L12.25 13 Z" fill="#151515"/></svg>
<div class="t" style="left:1594px;top:410px;font-size:11px;color:#000;font-weight:400;letter-spacing:0.8px;">Cast Shadows</div>
<svg style="position:absolute;left:1773px;top:411px;" width="13" height="13" viewBox="0 0 13 13"><rect x="0.5" y="0.5" width="12" height="12" rx="1" fill="url(#cbg)" stroke="#4d5d78"/><defs><linearGradient id="cbg" x1="0" y1="0" x2="0" y2="1"><stop offset="0" stop-color="#9fb4d8"/><stop offset="1" stop-color="#5d7cb8"/></linearGradient></defs><path d="M2.5 6 L5.3 9.5 L11.5 1" fill="none" stroke="#101830" stroke-width="1.9"/></svg>
<div class="t" style="left:1594px;top:426px;font-size:11px;color:#000;font-weight:400;letter-spacing:0.8px;">Receive Shadows</div>
<svg style="position:absolute;left:1773px;top:427px;" width="13" height="13" viewBox="0 0 13 13"><rect x="0.5" y="0.5" width="12" height="12" rx="1" fill="url(#cbg)" stroke="#4d5d78"/><defs><linearGradient id="cbg" x1="0" y1="0" x2="0" y2="1"><stop offset="0" stop-color="#9fb4d8"/><stop offset="1" stop-color="#5d7cb8"/></linearGradient></defs><path d="M2.5 6 L5.3 9.5 L11.5 1" fill="none" stroke="#101830" stroke-width="1.9"/></svg>
<div class="t" style="left:1594px;top:442px;font-size:11px;color:#000;font-weight:400;letter-spacing:0.8px;">Materials</div>
<div class="t" style="left:1594px;top:458px;font-size:11px;color:#000;font-weight:400;letter-spacing:0.8px;">Quality</div>
<div class="t" style="left:1773px;top:458px;font-size:11px;color:#000;font-weight:400;letter-spacing:0.8px;">Auto</div>
<div class="t" style="left:1594px;top:474px;font-size:11px;color:#000;font-weight:400;letter-spacing:0.8px;">Update When Offscreen</div>
<svg style="position:absolute;left:1773px;top:475px;" width="13" height="13" viewBox="0 0 13 13"><rect x="0.5" y="0.5" width="12" height="12" rx="1.5" fill="#f0f0f0" stroke="#6a6a6a"/></svg>
<div class="t" style="left:1594px;top:490px;font-size:11px;color:#000;font-weight:400;letter-spacing:0.8px;">Skin Normals</div>
<svg style="position:absolute;left:1773px;top:491px;" width="13" height="13" viewBox="0 0 13 13"><rect x="0.5" y="0.5" width="12" height="12" rx="1" fill="url(#cbg)" stroke="#4d5d78"/><defs><linearGradient id="cbg" x1="0" y1="0" x2="0" y2="1"><stop offset="0" stop-color="#9fb4d8"/><stop offset="1" stop-color="#5d7cb8"/></linearGradient></defs><path d="M2.5 6 L5.3 9.5 L11.5 1" fill="none" stroke="#101830" stroke-width="1.9"/></svg>
<div class="t" style="left:1594px;top:506px;font-size:11px;color:#000;font-weight:400;letter-spacing:0.8px;">Mesh</div>
<svg style="position:absolute;left:1581px;top:446px;" width="8" height="9" viewBox="0 0 8 9"><path d="M0 0 V9 L8 4.5 Z" fill="#6a6a6a"/></svg>
<svg style="position:absolute;left:1910px;top:461px;" width="6" height="10" viewBox="0 0 6 10"><path d="M0 4 L5 4 L2.5 0.5 Z M0 6 L5 6 L2.5 9.5 Z" fill="#222"/></svg>
<svg style="position:absolute;left:1773px;top:506px;" width="14" height="14" viewBox="0 0 14 14"><rect x="0.5" y="0.5" width="12.5" height="12.5" fill="#e8e8e8" stroke="#444"/><path d="M4.5 0.5 V13 M8.5 0.5 V13 M0.5 4.5 H13 M0.5 8.5 H13" stroke="#444" stroke-width="1"/></svg>
<div class="t" style="left:1790px;top:506px;font-size:11px;color:#000;font-weight:400;letter-spacing:0.8px;">Marine</div>
<svg style="position:absolute;left:1909px;top:510px;" width="8" height="8" viewBox="0 0 8 8"><circle cx="4" cy="4" r="3.4" fill="none" stroke="#333" stroke-width="1"/><circle cx="4" cy="4" r="1.1" fill="#333"/></svg>
<div style="position:absolute;left:1579px;top:527px;width:341px;height:1px;background:#6f6f6f"></div>
<div style="position:absolute;left:1579px;top:528px;width:341px;height:46px;background:#dcdcdc"></div>
<div style="position:absolute;left:1579px;top:573px;width:341px;height:1px;background:#9a9a9a"></div>
<svg style="position:absolute;left:1585px;top:532px;" width="36" height="36" viewBox="0 0 36 36"><defs><radialGradient id="sph" cx="0.45" cy="0.35" r="0.6"><stop offset="0" stop-color="#2e3a48"/><stop offset="0.7" stop-color="#141a20"/><stop offset="1" stop-color="#050607"/></radialGradient></defs><circle cx="18" cy="18" r="17.8" fill="url(#sph)"/><path d="M19 6 Q21 18 19 30" stroke="#2a8a8a" stroke-width="1.3" fill="none"/></svg>
<div class="t" style="left:1629px;top:539px;font-size:12px;color:#000;font-weight:400;letter-spacing:1.0px;">marine-marine1</div>
<div class="t" style="left:1631px;top:552px;font-size:11px;color:#000;font-weight:400;letter-spacing:0.9px;font-size:10px">Shader</div>
<div style="position:absolute;left:1673px;top:555px;width:236px;height:14px;box-sizing:border-box;border:1px solid #7d7d7d;border-radius:3px;background:linear-gradient(180deg,#fbfbfb 0%,#eaeaea 50%,#d3d3d3 100%);"></div>
<div class="t" style="left:1680px;top:554px;font-size:11px;color:#000;font-weight:400;letter-spacing:0.9px;font-size:10px">Diffuse</div>
<svg style="position:absolute;left:1898px;top:560px;" width="6" height="4" viewBox="0 0 6 4"><path d="M0 0 H5 L2.5 3.5 Z" fill="#333"/></svg>
<svg style="position:absolute;left:1875px;top:534px;" width="15" height="16" viewBox="0 0 15 16"><defs><linearGradient id="hg" x1="0" y1="0" x2="0" y2="1"><stop offset="0" stop-color="#9fb4d8"/><stop offset="1" stop-color="#445e90"/></linearGradient></defs><path d="M1.5 3 Q1.5 1 3.5 1 H12.5 Q13.5 1 13.5 2 V13.5 Q13.5 14.5 12.5 14.5 H3 Q1.5 14.5 1.5 13 Z" fill="#1a2440"/><rect x="2.5" y="2.2" width="10" height="11.3" fill="#f4f6fa"/><rect x="4" y="3.8" width="8.3" height="9.7" fill="url(#hg)"/><path d="M6.3 6.3 Q6.5 4.8 8.1 4.8 Q9.7 4.8 9.7 6.3 Q9.7 7.3 8.3 8 V9.3" fill="none" stroke="#e8eefa" stroke-width="1.2"/><circle cx="8.3" cy="11" r="0.8" fill="#e8eefa"/></svg>
<svg style="position:absolute;left:1893px;top:534px;" width="15" height="14" viewBox="0 0 15 14"><g transform="translate(6,7)"><circle r="3.1" fill="none" stroke="#151515" stroke-width="2.3"/><circle cx="4.25" cy="1.76" r="1.2" fill="#151515"/><circle cx="1.76" cy="4.25" r="1.2" fill="#151515"/><circle cx="-1.76" cy="4.25" r="1.2" fill="#151515"/><circle cx="-4.25" cy="1.76" r="1.2" fill="#151515"/><circle cx="-4.25" cy="-1.76" r="1.2" fill="#151515"/><circle cx="-1.76" cy="-4.25" r="1.2" fill="#151515"/><circle cx="1.76" cy="-4.25" r="1.2" fill="#151515"/><circle cx="4.25" cy="-1.76" r="1.2" fill="#151515"/></g><path d="M10.5 9.5 H14 L12.25 13 Z" fill="#151515"/></svg>
<div class="t" style="left:1583px;top:580px;font-size:11px;color:#000;font-weight:400;letter-spacing:0.8px;">Main Color</div>
<div style="position:absolute;left:1841px;top:579px;width:57px;height:16px;box-sizing:border-box;border:1px solid #6e6e6e;background:linear-gradient(180deg,#cfcfcf 0%,#d6d6d6 70%,#fbfbfb 72%,#fff 92%,#d0d0d0 100%)"></div>
<svg style="position:absolute;left:1901px;top:580px;" width="14" height="15" viewBox="0 0 14 15"><path d="M1.5 13.5 L2 11.5 L9 4.5 L10.5 6 L3.5 13 Z" fill="#fafafa" stroke="#222" stroke-width="0.9"/><path d="M8 3.5 L11.5 7 M9.5 3.5 L11.5 1 Q13 0 14 1.5 Q14.5 2.8 13 3.8 L10.5 6" fill="#222" stroke="#222" stroke-width="1.4"/></svg>
<div class="t" style="left:1583px;top:598px;font-size:11px;color:#000;font-weight:400;letter-spacing:0.8px;">Base (RGB)</div>
<div style="position:absolute;left:1841px;top:597px;width:74px;height:73px;background:#7a7a7a;box-sizing:border-box;border:1px solid #5a5a5a"></div>
<svg style="position:absolute;left:1844px;top:600px;" width="67" height="67" viewBox="0 0 67 67"><rect width="67" height="67" fill="#0b0d10"/><rect x="38" y="1" width="28" height="40" fill="#2a3a4c"/><rect x="44.2" y="21.7" width="2.4" height="3.0" fill="rgb(78,103,133)"/><rect x="39.7" y="1.5" width="3.6" height="2.1" fill="rgb(51,76,106)"/><rect x="63.9" y="18.9" width="3.6" height="2.7" fill="rgb(79,104,134)"/><rect x="41.9" y="25.1" width="3.7" height="2.8" fill="rgb(86,111,141)"/><rect x="55.5" y="3.4" width="3.4" height="3.0" fill="rgb(56,81,111)"/><rect x="38.8" y="33.9" width="2.7" height="3.3" fill="rgb(96,121,151)"/><rect x="56.6" y="36.0" width="2.5" height="3.5" fill="rgb(66,91,121)"/><rect x="62.3" y="34.4" width="1.7" height="1.8" fill="rgb(50,75,105)"/><rect x="63.1" y="17.6" width="3.1" height="2.3" fill="rgb(70,95,125)"/><rect x="48.0" y="14.3" width="3.0" height="3.0" fill="rgb(98,123,153)"/><rect x="55.7" y="36.3" width="3.6" height="4.0" fill="rgb(81,106,136)"/><rect x="42.2" y="33.7" width="3.9" height="3.8" fill="rgb(74,99,129)"/><rect x="56.6" y="9.0" width="3.6" height="2.9" fill="rgb(54,79,109)"/><rect x="39.6" y="33.4" width="4.0" height="1.7" fill="rgb(91,116,146)"/><rect x="48.7" y="6.7" width="2.2" height="3.4" fill="rgb(96,121,151)"/><rect x="39.1" y="24.4" width="1.6" height="3.3" fill="rgb(58,83,113)"/><rect x="60.9" y="38.3" width="2.8" height="4.0" fill="rgb(56,81,111)"/><rect x="40.0" y="23.8" width="1.6" height="2.0" fill="rgb(63,88,118)"/><rect x="53.9" y="6.9" width="1.6" height="3.7" fill="rgb(56,81,111)"/><rect x="62.9" y="35.1" width="2.4" height="2.7" fill="rgb(71,96,126)"/><rect x="54.7" y="23.6" width="2.9" height="3.1" fill="rgb(100,125,155)"/><rect x="51.2" y="17.4" width="3.3" height="2.1" fill="rgb(56,81,111)"/><rect x="63.4" y="20.8" width="2.9" height="1.5" fill="rgb(64,89,119)"/><rect x="53.1" y="1.8" width="3.0" height="3.1" fill="rgb(39,64,94)"/><rect x="54.3" y="18.7" width="3.2" height="2.4" fill="rgb(84,109,139)"/><rect x="57.2" y="1.8" width="1.7" height="3.2" fill="rgb(102,127,157)"/><rect x="44.5" y="18.3" width="3.0" height="2.3" fill="rgb(60,85,115)"/><rect x="46.1" y="15.0" width="3.0" height="2.3" fill="rgb(61,86,116)"/><rect x="58.1" y="2.0" width="2.9" height="3.3" fill="rgb(56,81,111)"/><rect x="43.8" y="31.5" width="2.1" height="2.0" fill="rgb(65,90,120)"/><rect x="56.1" y="4.9" width="2.3" height="2.3" fill="rgb(93,118,148)"/><rect x="49.4" y="33.5" width="1.9" height="2.3" fill="rgb(80,105,135)"/><rect x="61.0" y="18.1" width="2.1" height="1.8" fill="rgb(72,97,127)"/><rect x="43.0" y="31.7" width="3.6" height="2.0" fill="rgb(54,79,109)"/><rect x="59.0" y="25.4" width="3.5" height="2.4" fill="rgb(44,69,99)"/><rect x="45.6" y="31.2" width="2.2" height="2.4" fill="rgb(64,89,119)"/><rect x="48.9" y="16.6" width="3.8" height="1.9" fill="rgb(35,60,90)"/><rect x="62.5" y="34.4" width="4.0" height="2.6" fill="rgb(101,126,156)"/><rect x="62.1" y="9.4" width="3.4" height="3.6" fill="rgb(81,106,136)"/><rect x="51.5" y="12.0" width="2.4" height="2.1" fill="rgb(39,64,94)"/><rect x="53.3" y="11.9" width="3.5" height="1.6" fill="rgb(98,123,153)"/><rect x="56.0" y="36.1" width="3.7" height="3.7" fill="rgb(75,100,130)"/><rect x="38.3" y="29.3" width="1.9" height="2.2" fill="rgb(81,106,136)"/><rect x="51.6" y="16.7" width="3.8" height="3.0" fill="rgb(58,83,113)"/><rect x="44.6" y="33.7" width="2.7" height="3.5" fill="rgb(59,84,114)"/><rect x="43.1" y="21.3" width="3.5" height="1.9" fill="rgb(90,115,145)"/><rect x="62.0" y="31.6" width="3.6" height="1.5" fill="rgb(79,104,134)"/><rect x="60.4" y="2.9" width="2.2" height="2.2" fill="rgb(71,96,126)"/><rect x="49.0" y="19.0" width="3.4" height="1.5" fill="rgb(38,63,93)"/><rect x="41.3" y="5.7" width="1.7" height="3.9" fill="rgb(94,119,149)"/><rect x="40.2" y="20.1" width="2.3" height="2.3" fill="rgb(59,84,114)"/><rect x="54.8" y="23.3" width="2.4" height="2.0" fill="rgb(58,83,113)"/><rect x="41.2" y="22.1" width="3.3" height="2.5" fill="rgb(40,65,95)"/><rect x="42.6" y="15.2" width="3.0" height="3.5" fill="rgb(61,86,116)"/><rect x="58.8" y="24.7" width="2.6" height="2.4" fill="rgb(69,94,124)"/><rect x="56.3" y="17.0" width="3.2" height="2.7" fill="rgb(52,77,107)"/><rect x="51.9" y="27.4" width="1.7" height="2.6" fill="rgb(64,89,119)"/><rect x="60.9" y="36.6" width="2.4" height="3.7" fill="rgb(90,115,145)"/><rect x="44.8" y="18.6" width="1.8" height="3.5" fill="rgb(81,106,136)"/><rect x="61.1" y="31.1" width="3.2" height="3.3" fill="rgb(74,99,129)"/><rect x="40.7" y="23.3" width="1.5" height="1.9" fill="rgb(89,114,144)"/><rect x="39.2" y="4.5" width="1.7" height="3.7" fill="rgb(47,72,102)"/><rect x="38.6" y="33.0" width="1.8" height="3.6" fill="rgb(82,107,137)"/><rect x="59.7" y="37.2" width="2.9" height="3.5" fill="rgb(37,62,92)"/><rect x="58.0" y="20.4" width="3.3" height="1.8" fill="rgb(87,112,142)"/><rect x="62.3" y="3.3" width="2.3" height="2.9" fill="rgb(92,117,147)"/><rect x="44.3" y="7.8" width="2.1" height="3.0" fill="rgb(87,112,142)"/><rect x="48.2" y="15.0" width="2.5" height="2.4" fill="rgb(64,89,119)"/><rect x="40.2" y="20.0" width="3.9" height="2.5" fill="rgb(87,112,142)"/><rect x="42.2" y="27.3" width="3.4" height="3.2" fill="rgb(71,96,126)"/><rect x="50.6" y="25.4" width="3.7" height="1.9" fill="rgb(41,66,96)"/><rect x="57.5" y="35.8" width="2.8" height="2.6" fill="rgb(85,110,140)"/><rect x="42.8" y="11.2" width="2.0" height="3.0" fill="rgb(57,82,112)"/><rect x="44.0" y="27.3" width="3.9" height="2.2" fill="rgb(84,109,139)"/><rect x="48.7" y="33.4" width="3.0" height="2.2" fill="rgb(50,75,105)"/><rect x="38.6" y="19.2" width="2.5" height="1.9" fill="rgb(60,85,115)"/><rect x="46.4" y="30.4" width="1.9" height="4.0" fill="rgb(68,93,123)"/><rect x="53.6" y="18.8" width="3.6" height="3.6" fill="rgb(73,98,128)"/><rect x="50.5" y="28.4" width="3.6" height="2.5" fill="rgb(86,111,141)"/><rect x="63.0" y="18.8" width="2.1" height="2.1" fill="rgb(85,110,140)"/><rect x="55.6" y="37.4" width="3.6" height="2.1" fill="rgb(48,73,103)"/><rect x="44.7" y="8.1" width="3.3" height="3.6" fill="rgb(97,122,152)"/><rect x="44.6" y="33.9" width="2.3" height="2.6" fill="rgb(86,111,141)"/><rect x="40.2" y="4.5" width="3.6" height="2.2" fill="rgb(59,84,114)"/><rect x="53.1" y="26.7" width="1.5" height="2.3" fill="rgb(65,90,120)"/><rect x="50.6" y="9.0" width="3.0" height="3.9" fill="rgb(62,87,117)"/><rect x="52.2" y="5.5" width="2.2" height="3.2" fill="rgb(42,67,97)"/><rect x="61.1" y="35.5" width="1.7" height="3.9" fill="rgb(61,86,116)"/><rect x="58.1" y="29.8" width="2.2" height="3.2" fill="rgb(80,105,135)"/><rect x="59.0" y="11.1" width="3.4" height="3.9" fill="rgb(82,107,137)"/><rect x="22" y="18" width="17" height="22" rx="4" fill="#2e4058"/><rect x="30.0" y="20.3" width="2.7" height="2.4" fill="rgb(78,103,133)"/><rect x="32.2" y="29.3" width="2.0" height="3.1" fill="rgb(72,97,127)"/><rect x="24.7" y="35.8" width="3.1" height="1.8" fill="rgb(90,115,145)"/><rect x="24.1" y="24.6" width="3.3" height="3.0" fill="rgb(68,93,123)"/><rect x="31.7" y="27.2" width="2.3" height="1.9" fill="rgb(39,64,94)"/><rect x="32.7" y="33.1" width="2.9" height="3.3" fill="rgb(56,81,111)"/><rect x="26.0" y="25.7" width="3.7" height="1.6" fill="rgb(65,90,120)"/><rect x="25.7" y="33.4" width="2.4" height="2.3" fill="rgb(59,84,114)"/><rect x="30.1" y="33.4" width="2.4" height="3.6" fill="rgb(41,66,96)"/><rect x="26.1" y="20.0" width="1.8" height="3.4" fill="rgb(78,103,133)"/><rect x="24.8" y="21.8" width="2.5" height="3.4" fill="rgb(83,108,138)"/><rect x="33.2" y="29.8" width="1.9" height="2.5" fill="rgb(46,71,101)"/><rect x="29.9" y="29.4" width="2.0" height="2.1" fill="rgb(81,106,136)"/><rect x="22.5" y="34.1" width="3.7" height="3.9" fill="rgb(57,82,112)"/><rect x="30.3" y="29.7" width="3.1" height="3.9" fill="rgb(76,101,131)"/><rect x="26.5" y="35.2" width="2.7" height="3.0" fill="rgb(78,103,133)"/><rect x="22.0" y="33.4" width="3.2" height="2.7" fill="rgb(66,91,121)"/><rect x="28.9" y="21.9" width="2.8" height="1.6" fill="rgb(65,90,120)"/><rect x="31.7" y="26.9" width="2.9" height="3.9" fill="rgb(88,113,143)"/><rect x="24.0" y="33.8" width="3.1" height="1.6" fill="rgb(56,81,111)"/><rect x="25.5" y="19.6" width="2.8" height="3.8" fill="rgb(54,79,109)"/><rect x="35.1" y="31.9" width="1.8" height="3.6" fill="rgb(71,96,126)"/><rect x="35.9" y="32.3" width="3.3" height="2.4" fill="rgb(83,108,138)"/><rect x="36.0" y="35.2" width="2.6" height="3.4" fill="rgb(64,89,119)"/><rect x="23.6" y="18.9" width="1.7" height="2.0" fill="rgb(44,69,99)"/><rect x="29.5" y="32.0" width="2.8" height="2.6" fill="rgb(73,98,128)"/><rect x="26.6" y="27.3" width="3.4" height="2.5" fill="rgb(45,70,100)"/><rect x="35.5" y="32.4" width="2.4" height="2.4" fill="rgb(66,91,121)"/><rect x="30.9" y="22.5" width="1.5" height="2.0" fill="rgb(81,106,136)"/><rect x="24.2" y="27.2" width="2.0" height="2.0" fill="rgb(45,70,100)"/><path d="M6 6 Q15 3 22 7 Q30 3 38 6 L36 13 Q30 11 25 16 L24 24 L19 24 L18 16 Q12 11 7 12 Z" fill="#6e4e34"/><rect x="18.5" y="4.5" width="1.6" height="1.8" fill="rgb(120,80,50)"/><rect x="20.7" y="3.5" width="1.6" height="2.6" fill="rgb(134,94,64)"/><rect x="26.3" y="3.5" width="2.5" height="2.5" fill="rgb(111,71,41)"/><rect x="33.1" y="5.0" width="1.7" height="2.7" fill="rgb(119,79,49)"/><rect x="24.2" y="6.1" width="1.8" height="1.6" fill="rgb(153,113,83)"/><rect x="15.2" y="10.1" width="2.7" height="3.8" fill="rgb(128,88,58)"/><rect x="14.5" y="5.4" width="3.5" height="3.1" fill="rgb(130,90,60)"/><rect x="10.4" y="9.1" width="3.9" height="3.0" fill="rgb(110,70,40)"/><rect x="8.8" y="3.8" width="1.9" height="1.6" fill="rgb(113,73,43)"/><rect x="25.0" y="11.1" width="2.0" height="3.9" fill="rgb(138,98,68)"/><rect x="28.9" y="11.3" width="3.9" height="1.6" fill="rgb(128,88,58)"/><rect x="23.8" y="11.5" width="1.7" height="2.2" fill="rgb(160,120,90)"/><rect x="11.0" y="6.5" width="2.3" height="3.2" fill="rgb(165,125,95)"/><rect x="12.5" y="9.7" width="3.3" height="3.6" fill="rgb(143,103,73)"/><rect x="32.0" y="6.3" width="2.5" height="2.1" fill="rgb(156,116,86)"/><rect x="20.5" y="5.4" width="1.9" height="3.3" fill="rgb(146,106,76)"/><rect x="26.5" y="6.5" width="2.7" height="1.9" fill="rgb(152,112,82)"/><rect x="8.6" y="7.2" width="3.4" height="3.2" fill="rgb(115,75,45)"/><rect x="14.2" y="10.6" width="3.1" height="3.7" fill="rgb(162,122,92)"/><rect x="19.7" y="11.1" width="3.3" height="2.3" fill="rgb(132,92,62)"/><rect x="9.9" y="6.6" width="3.9" height="1.8" fill="rgb(144,104,74)"/><rect x="10.9" y="3.7" width="3.1" height="2.1" fill="rgb(112,72,42)"/><rect x="12.0" y="8.8" width="3.0" height="1.5" fill="rgb(123,83,53)"/><rect x="33.1" y="5.0" width="2.9" height="2.5" fill="rgb(156,116,86)"/><rect x="23.7" y="10.1" width="2.8" height="2.0" fill="rgb(120,80,50)"/><rect x="1" y="18" width="2" height="25" fill="#2aa0b0"/><rect x="12" y="42" width="26" height="24" fill="#2c2a28"/><rect x="13.9" y="60.2" width="1.8" height="1.6" fill="rgb(78,74,68)"/><rect x="16.8" y="61.7" width="1.7" height="2.7" fill="rgb(48,44,38)"/><rect x="31.9" y="55.5" width="3.1" height="3.4" fill="rgb(74,70,64)"/><rect x="20.3" y="55.3" width="2.6" height="1.8" fill="rgb(73,69,63)"/><rect x="26.3" y="59.9" width="2.0" height="2.8" fill="rgb(58,54,48)"/><rect x="29.5" y="43.7" width="2.4" height="2.7" fill="rgb(42,38,32)"/><rect x="25.3" y="58.2" width="2.6" height="3.1" fill="rgb(64,60,54)"/><rect x="17.1" y="49.7" width="4.0" height="2.3" fill="rgb(57,53,47)"/><rect x="14.0" y="46.8" width="1.9" height="3.8" fill="rgb(69,65,59)"/><rect x="33.0" y="63.7" width="3.0" height="3.8" fill="rgb(61,57,51)"/><rect x="22.0" y="62.9" width="3.8" height="3.9" fill="rgb(59,55,49)"/><rect x="30.6" y="51.0" width="4.0" height="3.8" fill="rgb(51,47,41)"/><rect x="34.4" y="46.1" width="1.7" height="3.3" fill="rgb(51,47,41)"/><rect x="24.5" y="56.1" width="1.6" height="3.4" fill="rgb(51,47,41)"/><rect x="22.4" y="49.6" width="3.4" height="3.4" fill="rgb(51,47,41)"/><rect x="14.5" y="48.6" width="2.5" height="1.7" fill="rgb(46,42,36)"/><rect x="30.3" y="57.4" width="3.9" height="3.9" fill="rgb(75,71,65)"/><rect x="20.9" y="45.5" width="2.3" height="2.7" fill="rgb(61,57,51)"/><rect x="25.0" y="49.9" width="3.6" height="2.2" fill="rgb(58,54,48)"/><rect x="33.3" y="59.8" width="2.2" height="2.1" fill="rgb(72,68,62)"/><rect x="12.2" y="44.9" width="2.8" height="2.8" fill="rgb(46,42,36)"/><rect x="13.2" y="46.5" width="3.4" height="2.7" fill="rgb(79,75,69)"/><rect x="30.9" y="63.5" width="1.6" height="2.0" fill="rgb(40,36,30)"/><rect x="22.4" y="49.4" width="1.6" height="2.9" fill="rgb(43,39,33)"/><rect x="19.5" y="47.4" width="3.5" height="2.5" fill="rgb(50,46,40)"/><rect x="19" y="42" width="4" height="9" fill="#080808"/><path d="M2 46 L9 46 L8 53 L5 56 L2 53 Z" fill="#4a7880"/><circle cx="5.5" cy="50" r="1.6" fill="#183038"/><rect x="30.5" y="48.9" width="3.1" height="3.2" fill="rgb(57,54,50)"/><rect x="57.3" y="46.0" width="1.8" height="3.4" fill="rgb(53,50,46)"/><rect x="46.8" y="55.3" width="2.9" height="2.2" fill="rgb(35,32,28)"/><rect x="29.6" y="52.3" width="3.7" height="3.8" fill="rgb(44,41,37)"/><rect x="52.3" y="56.9" width="3.5" height="3.0" fill="rgb(42,39,35)"/><rect x="47.1" y="44.7" width="2.0" height="3.2" fill="rgb(59,56,52)"/><rect x="48.1" y="48.5" width="2.4" height="2.6" fill="rgb(54,51,47)"/><rect x="44.8" y="57.3" width="1.9" height="2.3" fill="rgb(45,42,38)"/><rect x="43.4" y="55.6" width="3.6" height="3.8" fill="rgb(48,45,41)"/><rect x="30.1" y="51.2" width="2.9" height="2.7" fill="rgb(38,35,31)"/><rect x="53.8" y="56.6" width="1.8" height="3.2" fill="rgb(41,38,34)"/><rect x="47.0" y="56.3" width="3.9" height="3.1" fill="rgb(35,32,28)"/><rect x="61.2" y="44.9" width="2.5" height="3.6" fill="rgb(39,36,32)"/><rect x="38.5" y="57.2" width="3.9" height="2.3" fill="rgb(41,38,34)"/><rect x="38.9" y="44.1" width="2.1" height="4.0" fill="rgb(32,29,25)"/><rect x="37.0" y="45.2" width="1.7" height="2.8" fill="rgb(52,49,45)"/><rect x="58.3" y="52.1" width="3.5" height="1.5" fill="rgb(38,35,31)"/><rect x="62.6" y="43.1" width="2.2" height="2.7" fill="rgb(38,35,31)"/><rect x="48.1" y="42.8" width="2.1" height="3.9" fill="rgb(34,31,27)"/><rect x="60.7" y="44.8" width="4.0" height="3.2" fill="rgb(49,46,42)"/><rect x="34.0" y="42.9" width="3.4" height="1.9" fill="rgb(35,32,28)"/><rect x="57.8" y="56.0" width="1.6" height="3.9" fill="rgb(46,43,39)"/><rect x="42.4" y="43.7" width="2.5" height="4.0" fill="rgb(38,35,31)"/><rect x="33.6" y="44.3" width="1.8" height="2.4" fill="rgb(57,54,50)"/><rect x="31.7" y="45.1" width="3.8" height="4.0" fill="rgb(59,56,52)"/><rect x="37.6" y="47.7" width="3.9" height="2.7" fill="rgb(51,48,44)"/><rect x="40.0" y="42.3" width="2.4" height="3.4" fill="rgb(53,50,46)"/><rect x="48.9" y="49.4" width="2.8" height="2.6" fill="rgb(46,43,39)"/><rect x="58.2" y="45.2" width="3.0" height="3.8" fill="rgb(55,52,48)"/><rect x="35.3" y="57.4" width="3.6" height="1.9" fill="rgb(37,34,30)"/></svg>
<div style="position:absolute;left:1881px;top:658px;width:33px;height:11px;background:#fff"></div>
<div class="t" style="left:1882px;top:657px;font-size:11px;color:#000;font-weight:400;letter-spacing:0.5px;font-size:10px">Select</div>
<div class="t" style="left:1606px;top:620px;font-size:11px;color:#000;font-weight:400;letter-spacing:0.8px;font-size:10px">Tiling</div>
<div class="t" style="left:1725px;top:620px;font-size:11px;color:#000;font-weight:400;letter-spacing:0.8px;font-size:10px">Offset</div>
<div class="t" style="left:1595px;top:635px;font-size:11px;color:#333;font-weight:400;letter-spacing:0.8px;font-size:10px">x</div>
<div class="t" style="left:1595px;top:651px;font-size:11px;color:#333;font-weight:400;letter-spacing:0.8px;font-size:10px">y</div>
<div style="position:absolute;left:1606px;top:636px;width:115px;height:13px;box-sizing:border-box;border:1px solid #8d8d8d;border-top-color:#777;background:linear-gradient(180deg,#cfcfcf 0%,#dcdcdc 35%,#dfdfdf 100%);"></div>
<div style="position:absolute;left:1724px;top:636px;width:115px;height:13px;box-sizing:border-box;border:1px solid #8d8d8d;border-top-color:#777;background:linear-gradient(180deg,#cfcfcf 0%,#dcdcdc 35%,#dfdfdf 100%);"></div>
<div class="t" style="left:1609px;top:635px;font-size:11px;color:#000;font-weight:400;letter-spacing:0.8px;font-size:10px">1</div>
<div class="t" style="left:1727px;top:635px;font-size:11px;color:#000;font-weight:400;letter-spacing:0.8px;font-size:10px">0</div>
<div style="position:absolute;left:1606px;top:652px;width:115px;height:13px;box-sizing:border-box;border:1px solid #8d8d8d;border-top-color:#777;background:linear-gradient(180deg,#cfcfcf 0%,#dcdcdc 35%,#dfdfdf 100%);"></div>
<div style="position:absolute;left:1724px;top:652px;width:115px;height:13px;box-sizing:border-box;border:1px solid #8d8d8d;border-top-color:#777;background:linear-gradient(180deg,#cfcfcf 0%,#dcdcdc 35%,#dfdfdf 100%);"></div>
<div class="t" style="left:1609px;top:651px;font-size:11px;color:#000;font-weight:400;letter-spacing:0.8px;font-size:10px">1</div>
<div class="t" style="left:1727px;top:651px;font-size:11px;color:#000;font-weight:400;letter-spacing:0.8px;font-size:10px">0</div>
<div style="position:absolute;left:0px;top:876px;width:1575px;height:303px;background:#a2a2a2"></div>
<div style="position:absolute;left:0px;top:881px;width:98px;height:15px;box-sizing:border-box;border:1px solid #9a9a9a;border-bottom:none;border-radius:5px 5px 0 0;background:linear-gradient(180deg,#ebebeb 0%,#dedede 100%);"></div>
<svg style="position:absolute;left:8px;top:884px;" width="12" height="10" viewBox="0 0 12 10"><path d="M0.5 1 H2 M0.5 4.5 H2 M0.5 8 H2" stroke="#333" stroke-width="1.3"/><path d="M3.5 1 H11.5 M5 4.5 H11.5 M5 8 H11.5" stroke="#333" stroke-width="1.2"/></svg>
<div class="t" style="left:24px;top:882px;font-size:11px;color:#000;font-weight:400;letter-spacing:0.8px;">Hierarchy</div>
<svg style="position:absolute;left:753px;top:889px;" width="15" height="7" viewBox="0 0 15 7"><path d="M0.5 1.5 L4.5 1.5 L2.5 4.5 Z" fill="#333"/><path d="M6 1 H14 M6 3.5 H14 M6 6 H14" stroke="#333" stroke-width="1.2"/></svg>
<div style="position:absolute;left:0px;top:897px;width:770px;height:16px;background:linear-gradient(180deg,#f6f6f6 0%,#e4e4e4 50%,#d2d2d2 100%);"></div>
<div style="position:absolute;left:0px;top:913px;width:770px;height:1px;background:#8f8f8f"></div>
<div style="position:absolute;left:5px;top:897px;width:1px;height:16px;background:#a8a8a8"></div>
<div style="position:absolute;left:57px;top:897px;width:1px;height:16px;background:#a8a8a8"></div>
<div class="t" style="left:12px;top:898px;font-size:11px;color:#000;font-weight:400;letter-spacing:0.8px;font-size:10px">Create</div>
<svg style="position:absolute;left:49px;top:903px;" width="5" height="3" viewBox="0 0 5 3"><path d="M0 0 H5 L2.5 3 Z" fill="#555"/></svg>
<div style="position:absolute;left:531px;top:898px;width:233px;height:14px;box-sizing:border-box;border:1px solid #7a7a7a;border-radius:7px;background:linear-gradient(180deg,#cfcfcf 0%,#dedede 40%,#e2e2e2 100%)"></div>
<svg style="position:absolute;left:535px;top:901px;" width="12" height="10" viewBox="0 0 12 10"><circle cx="3.5" cy="3.8" r="2.6" fill="none" stroke="#555" stroke-width="1.1"/><path d="M5.5 6 L8 9" stroke="#555" stroke-width="1.3"/><path d="M7 2.5 H11 L9 5 Z" fill="#555"/></svg>
<div class="t" style="left:549px;top:897px;font-size:11px;color:#6a6a6a;font-weight:400;letter-spacing:0.3px;font-size:11px;-webkit-text-stroke:0">All</div>
<div style="position:absolute;left:0px;top:914px;width:770px;height:265px;background:#c2c2c2"></div>
<div style="position:absolute;left:0px;top:1010px;width:770px;height:16px;background:#3d7ddf"></div>
<div style="position:absolute;left:770px;top:876px;width:4px;height:303px;background:#9a9a9a"></div>
<div class="t" style="left:16px;top:915px;font-size:11px;color:#111;font-weight:400;letter-spacing:0.8px;">Directional light</div>
<div class="t" style="left:16px;top:931px;font-size:11px;color:#111;font-weight:400;letter-spacing:0.8px;">Main Camera</div>
<div class="t" style="left:16px;top:947px;font-size:11px;color:#0c1c5c;font-weight:400;letter-spacing:0.8px;">marine</div>
<svg style="position:absolute;left:3px;top:951px;" width="9" height="8" viewBox="0 0 9 8"><path d="M0 0 H8.5 L4.25 8 Z" fill="#707070"/></svg>
<div class="t" style="left:32px;top:963px;font-size:11px;color:#0c1c5c;font-weight:400;letter-spacing:0.8px;">Bip01</div>
<svg style="position:absolute;left:19px;top:967px;" width="9" height="8" viewBox="0 0 9 8"><path d="M0 0 H8.5 L4.25 8 Z" fill="#707070"/></svg>
<div class="t" style="left:48px;top:979px;font-size:11px;color:#0c1c5c;font-weight:400;letter-spacing:0.8px;">Bip01 Footsteps</div>
<div class="t" style="left:48px;top:995px;font-size:11px;color:#0c1c5c;font-weight:400;letter-spacing:0.8px;">Bip01 Pelvis</div>
<svg style="position:absolute;left:36px;top:998px;" width="8" height="9" viewBox="0 0 8 9"><path d="M0 0 V9 L8 4.5 Z" fill="#707070"/></svg>
<div class="t" style="left:32px;top:1011px;font-size:11px;color:#a8c4ee;font-weight:400;letter-spacing:0.8px;">Marine</div>
<div class="t" style="left:32px;top:1027px;font-size:11px;color:#0c1c5c;font-weight:400;letter-spacing:0.8px;">transform1</div>
<div class="t" style="left:32px;top:1043px;font-size:11px;color:#0c1c5c;font-weight:400;letter-spacing:0.8px;">transform2</div>
<div class="t" style="left:32px;top:1059px;font-size:11px;color:#0c1c5c;font-weight:400;letter-spacing:0.8px;">transform3</div>
<div class="t" style="left:32px;top:1075px;font-size:11px;color:#0c1c5c;font-weight:400;letter-spacing:0.8px;">transform4</div>
<div class="t" style="left:16px;top:1091px;font-size:11px;color:#111;font-weight:400;letter-spacing:0.8px;">MuzzleFlash</div>
<svg style="position:absolute;left:4px;top:1094px;" width="8" height="9" viewBox="0 0 8 9"><path d="M0 0 V9 L8 4.5 Z" fill="#707070"/></svg>
<div class="t" style="left:16px;top:1107px;font-size:11px;color:#111;font-weight:400;letter-spacing:0.8px;">Terrain</div>
<div style="position:absolute;left:0px;top:1178px;width:770px;height:1px;background:#8a8a8a"></div>
<div style="position:absolute;left:774px;top:881px;width:98px;height:15px;box-sizing:border-box;border:1px solid #9a9a9a;border-bottom:none;border-radius:5px 5px 0 0;background:linear-gradient(180deg,#ebebeb 0%,#dedede 100%);"></div>
<svg style="position:absolute;left:782px;top:884px;" width="12" height="10" viewBox="0 0 12 10"><path d="M0.6 2 H4 L5 0.8 H8.5 L9 2 H11.4 V9.4 H0.6 Z" fill="#9a9a9a" stroke="#333" stroke-width="1"/><path d="M0.6 3.2 H11.4" stroke="#333" stroke-width="0.8"/></svg>
<div class="t" style="left:798px;top:882px;font-size:11px;color:#000;font-weight:400;letter-spacing:0.8px;">Project</div>
<svg style="position:absolute;left:1558px;top:889px;" width="15" height="7" viewBox="0 0 15 7"><path d="M0.5 1.5 L4.5 1.5 L2.5 4.5 Z" fill="#333"/><path d="M6 1 H14 M6 3.5 H14 M6 6 H14" stroke="#333" stroke-width="1.2"/></svg>
<div style="position:absolute;left:774px;top:914px;width:801px;height:265px;background:#c2c2c2"></div>
<svg style="position:absolute;left:790px;top:906px;" width="16" height="6" viewBox="0 0 16 6"><rect x="0.5" y="0" width="13" height="5" rx="1" fill="#7d9ac4" stroke="#4a6a9a"/></svg>
<div class="t" style="left:806px;top:903px;font-size:11px;color:#222;font-weight:400;letter-spacing:0.8px;">Models</div>
<div style="position:absolute;left:774px;top:897px;width:801px;height:16px;background:linear-gradient(180deg,#f6f6f6 0%,#e4e4e4 50%,#d2d2d2 100%);"></div>
<div style="position:absolute;left:774px;top:913px;width:801px;height:1px;background:#8f8f8f"></div>
<div style="position:absolute;left:779px;top:897px;width:1px;height:16px;background:#a8a8a8"></div>
<div style="position:absolute;left:831px;top:897px;width:1px;height:16px;background:#a8a8a8"></div>
<div class="t" style="left:786px;top:898px;font-size:11px;color:#000;font-weight:400;letter-spacing:0.8px;font-size:10px">Create</div>
<svg style="position:absolute;left:823px;top:903px;" width="5" height="3" viewBox="0 0 5 3"><path d="M0 0 H5 L2.5 3 Z" fill="#555"/></svg>
<div style="position:absolute;left:1336px;top:898px;width:233px;height:14px;box-sizing:border-box;border:1px solid #7a7a7a;border-radius:7px;background:linear-gradient(180deg,#cfcfcf 0%,#dedede 40%,#e2e2e2 100%)"></div>
<svg style="position:absolute;left:1340px;top:901px;" width="12" height="10" viewBox="0 0 12 10"><circle cx="3.5" cy="3.8" r="2.6" fill="none" stroke="#555" stroke-width="1.1"/><path d="M5.5 6 L8 9" stroke="#555" stroke-width="1.3"/><path d="M7 2.5 H11 L9 5 Z" fill="#555"/></svg>
<div class="t" style="left:1354px;top:897px;font-size:11px;color:#6a6a6a;font-weight:400;letter-spacing:0.3px;font-size:11px;-webkit-text-stroke:0">All</div>
<div class="t" style="left:823px;top:919px;font-size:11px;color:#000;font-weight:400;letter-spacing:0.8px;">grenade</div>
<svg style="position:absolute;left:806px;top:919px;" width="15" height="15" viewBox="0 0 15 15"><path d="M1.5 4 L7 1 L12.5 4 L12.5 10 L7 13 L1.5 10 Z" fill="#a9c8f0" stroke="#4a6a9a" stroke-width="0.9"/><path d="M1.5 4 L7 7 L12.5 4 M7 7 V13" fill="none" stroke="#4a6a9a" stroke-width="0.8"/><path d="M1.5 4 L7 1 L12.5 4 L7 7 Z" fill="#e4f0ff"/><path d="M8.5 8.5 H12 L13.5 10 V14.5 H8.5 Z" fill="#fff" stroke="#111" stroke-width="1"/></svg>
<svg style="position:absolute;left:794px;top:922px;" width="8" height="9" viewBox="0 0 8 9"><path d="M0 0 V9 L8 4.5 Z" fill="#707070"/></svg>
<div class="t" style="left:823px;top:935px;font-size:11px;color:#000;font-weight:400;letter-spacing:0.8px;">m16</div>
<svg style="position:absolute;left:806px;top:935px;" width="15" height="15" viewBox="0 0 15 15"><path d="M1.5 4 L7 1 L12.5 4 L12.5 10 L7 13 L1.5 10 Z" fill="#a9c8f0" stroke="#4a6a9a" stroke-width="0.9"/><path d="M1.5 4 L7 7 L12.5 4 M7 7 V13" fill="none" stroke="#4a6a9a" stroke-width="0.8"/><path d="M1.5 4 L7 1 L12.5 4 L7 7 Z" fill="#e4f0ff"/><path d="M8.5 8.5 H12 L13.5 10 V14.5 H8.5 Z" fill="#fff" stroke="#111" stroke-width="1"/></svg>
<svg style="position:absolute;left:794px;top:938px;" width="8" height="9" viewBox="0 0 8 9"><path d="M0 0 V9 L8 4.5 Z" fill="#707070"/></svg>
<div class="t" style="left:823px;top:951px;font-size:11px;color:#000;font-weight:400;letter-spacing:0.8px;">marine</div>
<svg style="position:absolute;left:806px;top:951px;" width="15" height="15" viewBox="0 0 15 15"><path d="M1.5 4 L7 1 L12.5 4 L12.5 10 L7 13 L1.5 10 Z" fill="#a9c8f0" stroke="#4a6a9a" stroke-width="0.9"/><path d="M1.5 4 L7 7 L12.5 4 M7 7 V13" fill="none" stroke="#4a6a9a" stroke-width="0.8"/><path d="M1.5 4 L7 1 L12.5 4 L7 7 Z" fill="#e4f0ff"/><path d="M8.5 8.5 H12 L13.5 10 V14.5 H8.5 Z" fill="#fff" stroke="#111" stroke-width="1"/></svg>
<svg style="position:absolute;left:793px;top:955px;" width="9" height="8" viewBox="0 0 9 8"><path d="M0 0 H8.5 L4.25 8 Z" fill="#707070"/></svg>
<div class="t" style="left:839px;top:967px;font-size:11px;color:#000;font-weight:400;letter-spacing:0.8px;">Marine</div>
<svg style="position:absolute;left:822px;top:967px;" width="15" height="15" viewBox="0 0 15 15"><path d="M1.5 4 L7 1 L12.5 4 L12.5 10 L7 13 L1.5 10 Z" fill="#a9c8f0" stroke="#4a6a9a" stroke-width="0.9"/><path d="M1.5 4 L7 7 L12.5 4 M7 7 V13" fill="none" stroke="#4a6a9a" stroke-width="0.8"/><path d="M1.5 4 L7 1 L12.5 4 L7 7 Z" fill="#e4f0ff"/><path d="M8.5 8.5 H12 L13.5 10 V14.5 H8.5 Z" fill="#fff" stroke="#111" stroke-width="1"/></svg>
<div class="t" style="left:839px;top:983px;font-size:11px;color:#000;font-weight:400;letter-spacing:0.8px;">transform1</div>
<svg style="position:absolute;left:822px;top:983px;" width="15" height="15" viewBox="0 0 15 15"><path d="M1.5 4 L7 1 L12.5 4 L12.5 10 L7 13 L1.5 10 Z" fill="#a9c8f0" stroke="#4a6a9a" stroke-width="0.9"/><path d="M1.5 4 L7 7 L12.5 4 M7 7 V13" fill="none" stroke="#4a6a9a" stroke-width="0.8"/><path d="M1.5 4 L7 1 L12.5 4 L7 7 Z" fill="#e4f0ff"/><path d="M8.5 8.5 H12 L13.5 10 V14.5 H8.5 Z" fill="#fff" stroke="#111" stroke-width="1"/></svg>
<div class="t" style="left:839px;top:999px;font-size:11px;color:#000;font-weight:400;letter-spacing:0.8px;">transform2</div>
<svg style="position:absolute;left:822px;top:999px;" width="15" height="15" viewBox="0 0 15 15"><path d="M1.5 4 L7 1 L12.5 4 L12.5 10 L7 13 L1.5 10 Z" fill="#a9c8f0" stroke="#4a6a9a" stroke-width="0.9"/><path d="M1.5 4 L7 7 L12.5 4 M7 7 V13" fill="none" stroke="#4a6a9a" stroke-width="0.8"/><path d="M1.5 4 L7 1 L12.5 4 L7 7 Z" fill="#e4f0ff"/><path d="M8.5 8.5 H12 L13.5 10 V14.5 H8.5 Z" fill="#fff" stroke="#111" stroke-width="1"/></svg>
<div class="t" style="left:839px;top:1015px;font-size:11px;color:#000;font-weight:400;letter-spacing:0.8px;">transform3</div>
<svg style="position:absolute;left:822px;top:1015px;" width="15" height="15" viewBox="0 0 15 15"><path d="M1.5 4 L7 1 L12.5 4 L12.5 10 L7 13 L1.5 10 Z" fill="#a9c8f0" stroke="#4a6a9a" stroke-width="0.9"/><path d="M1.5 4 L7 7 L12.5 4 M7 7 V13" fill="none" stroke="#4a6a9a" stroke-width="0.8"/><path d="M1.5 4 L7 1 L12.5 4 L7 7 Z" fill="#e4f0ff"/><path d="M8.5 8.5 H12 L13.5 10 V14.5 H8.5 Z" fill="#fff" stroke="#111" stroke-width="1"/></svg>
<div class="t" style="left:839px;top:1031px;font-size:11px;color:#000;font-weight:400;letter-spacing:0.8px;">transform4</div>
<svg style="position:absolute;left:822px;top:1031px;" width="15" height="15" viewBox="0 0 15 15"><path d="M1.5 4 L7 1 L12.5 4 L12.5 10 L7 13 L1.5 10 Z" fill="#a9c8f0" stroke="#4a6a9a" stroke-width="0.9"/><path d="M1.5 4 L7 7 L12.5 4 M7 7 V13" fill="none" stroke="#4a6a9a" stroke-width="0.8"/><path d="M1.5 4 L7 1 L12.5 4 L7 7 Z" fill="#e4f0ff"/><path d="M8.5 8.5 H12 L13.5 10 V14.5 H8.5 Z" fill="#fff" stroke="#111" stroke-width="1"/></svg>
<div class="t" style="left:839px;top:1047px;font-size:11px;color:#000;font-weight:400;letter-spacing:0.8px;">Bip01</div>
<svg style="position:absolute;left:822px;top:1047px;" width="15" height="15" viewBox="0 0 15 15"><path d="M1.5 4 L7 1 L12.5 4 L12.5 10 L7 13 L1.5 10 Z" fill="#a9c8f0" stroke="#4a6a9a" stroke-width="0.9"/><path d="M1.5 4 L7 7 L12.5 4 M7 7 V13" fill="none" stroke="#4a6a9a" stroke-width="0.8"/><path d="M1.5 4 L7 1 L12.5 4 L7 7 Z" fill="#e4f0ff"/><path d="M8.5 8.5 H12 L13.5 10 V14.5 H8.5 Z" fill="#fff" stroke="#111" stroke-width="1"/></svg>
<div class="t" style="left:839px;top:1063px;font-size:11px;color:#000;font-weight:400;letter-spacing:0.8px;">Marine</div>
<svg style="position:absolute;left:822px;top:1064px;" width="14" height="14" viewBox="0 0 14 14"><rect x="0.5" y="0.5" width="12.5" height="12.5" fill="#e8e8e8" stroke="#444"/><path d="M4.5 0.5 V13 M8.5 0.5 V13 M0.5 4.5 H13 M0.5 8.5 H13" stroke="#444" stroke-width="1"/></svg>
<div class="t" style="left:839px;top:1079px;font-size:11px;color:#000;font-weight:400;letter-spacing:0.8px;">transform1</div>
<svg style="position:absolute;left:822px;top:1080px;" width="14" height="14" viewBox="0 0 14 14"><rect x="0.5" y="0.5" width="12.5" height="12.5" fill="#e8e8e8" stroke="#444"/><path d="M4.5 0.5 V13 M8.5 0.5 V13 M0.5 4.5 H13 M0.5 8.5 H13" stroke="#444" stroke-width="1"/></svg>
<div class="t" style="left:839px;top:1095px;font-size:11px;color:#000;font-weight:400;letter-spacing:0.8px;">transform2</div>
<svg style="position:absolute;left:822px;top:1096px;" width="14" height="14" viewBox="0 0 14 14"><rect x="0.5" y="0.5" width="12.5" height="12.5" fill="#e8e8e8" stroke="#444"/><path d="M4.5 0.5 V13 M8.5 0.5 V13 M0.5 4.5 H13 M0.5 8.5 H13" stroke="#444" stroke-width="1"/></svg>
<div class="t" style="left:839px;top:1111px;font-size:11px;color:#000;font-weight:400;letter-spacing:0.8px;">transform3</div>
<svg style="position:absolute;left:822px;top:1112px;" width="14" height="14" viewBox="0 0 14 14"><rect x="0.5" y="0.5" width="12.5" height="12.5" fill="#e8e8e8" stroke="#444"/><path d="M4.5 0.5 V13 M8.5 0.5 V13 M0.5 4.5 H13 M0.5 8.5 H13" stroke="#444" stroke-width="1"/></svg>
<div class="t" style="left:839px;top:1127px;font-size:11px;color:#000;font-weight:400;letter-spacing:0.8px;">transform4</div>
<svg style="position:absolute;left:822px;top:1128px;" width="14" height="14" viewBox="0 0 14 14"><rect x="0.5" y="0.5" width="12.5" height="12.5" fill="#e8e8e8" stroke="#444"/><path d="M4.5 0.5 V13 M8.5 0.5 V13 M0.5 4.5 H13 M0.5 8.5 H13" stroke="#444" stroke-width="1"/></svg>
<div class="t" style="left:839px;top:1143px;font-size:11px;color:#000;font-weight:400;letter-spacing:0.8px;">walk</div>
<svg style="position:absolute;left:822px;top:1143px;" width="14" height="16" viewBox="0 0 14 16"><path d="M0.5 0.5 H8 L11.5 4 V15 H0.5 Z" fill="#fff" stroke="#444" stroke-width="1"/><circle cx="8" cy="11" r="4" fill="#fff" stroke="#444" stroke-width="1"/><path d="M8 8.5 V11 H10" fill="none" stroke="#444" stroke-width="0.9"/></svg>
<div class="t" style="left:839px;top:1159px;font-size:11px;color:#000;font-weight:400;letter-spacing:0.8px;">walk</div>
<svg style="position:absolute;left:822px;top:1159px;" width="14" height="16" viewBox="0 0 14 16"><path d="M0.5 0.5 H8 L11.5 4 V15 H0.5 Z" fill="#fff" stroke="#444" stroke-width="1"/><circle cx="8" cy="11" r="4" fill="#fff" stroke="#444" stroke-width="1"/><path d="M8 8.5 V11 H10" fill="none" stroke="#444" stroke-width="0.9"/></svg>
<div style="position:absolute;left:1560px;top:913px;width:15px;height:265px;background:linear-gradient(90deg,#b4b4b4,#d2d2d2 40%,#c8c8c8)"></div>
<svg style="position:absolute;left:1564px;top:918px;" width="8" height="7" viewBox="0 0 8 7"><path d="M0 6 H7 L3.5 0.5 Z" fill="#333"/></svg>
<div style="position:absolute;left:1561px;top:931px;width:13px;height:231px;box-sizing:border-box;border:1px solid #8a8a8a;border-radius:7px;background:linear-gradient(90deg,#dcdcdc,#f4f4f4 50%,#e0e0e0)"></div>
<div style="position:absolute;left:1562px;top:944px;width:11px;height:73px;box-sizing:border-box;border:1px solid #4a5a78;border-radius:6px;background:linear-gradient(90deg,#6c84aa,#a6b8d4 50%,#7088ae)"></div>
<svg style="position:absolute;left:1564px;top:1168px;" width="8" height="7" viewBox="0 0 8 7"><path d="M0 0.5 H7 L3.5 6 Z" fill="#333"/></svg>
<div style="position:absolute;left:774px;top:1178px;width:801px;height:1px;background:#8a8a8a"></div>
<div style="position:absolute;left:1579px;top:1178px;width:341px;height:1px;background:#8a8a8a"></div>
<div style="position:absolute;left:0px;top:1179px;width:1920px;height:21px;background:#a2a2a2"></div></body></html>
